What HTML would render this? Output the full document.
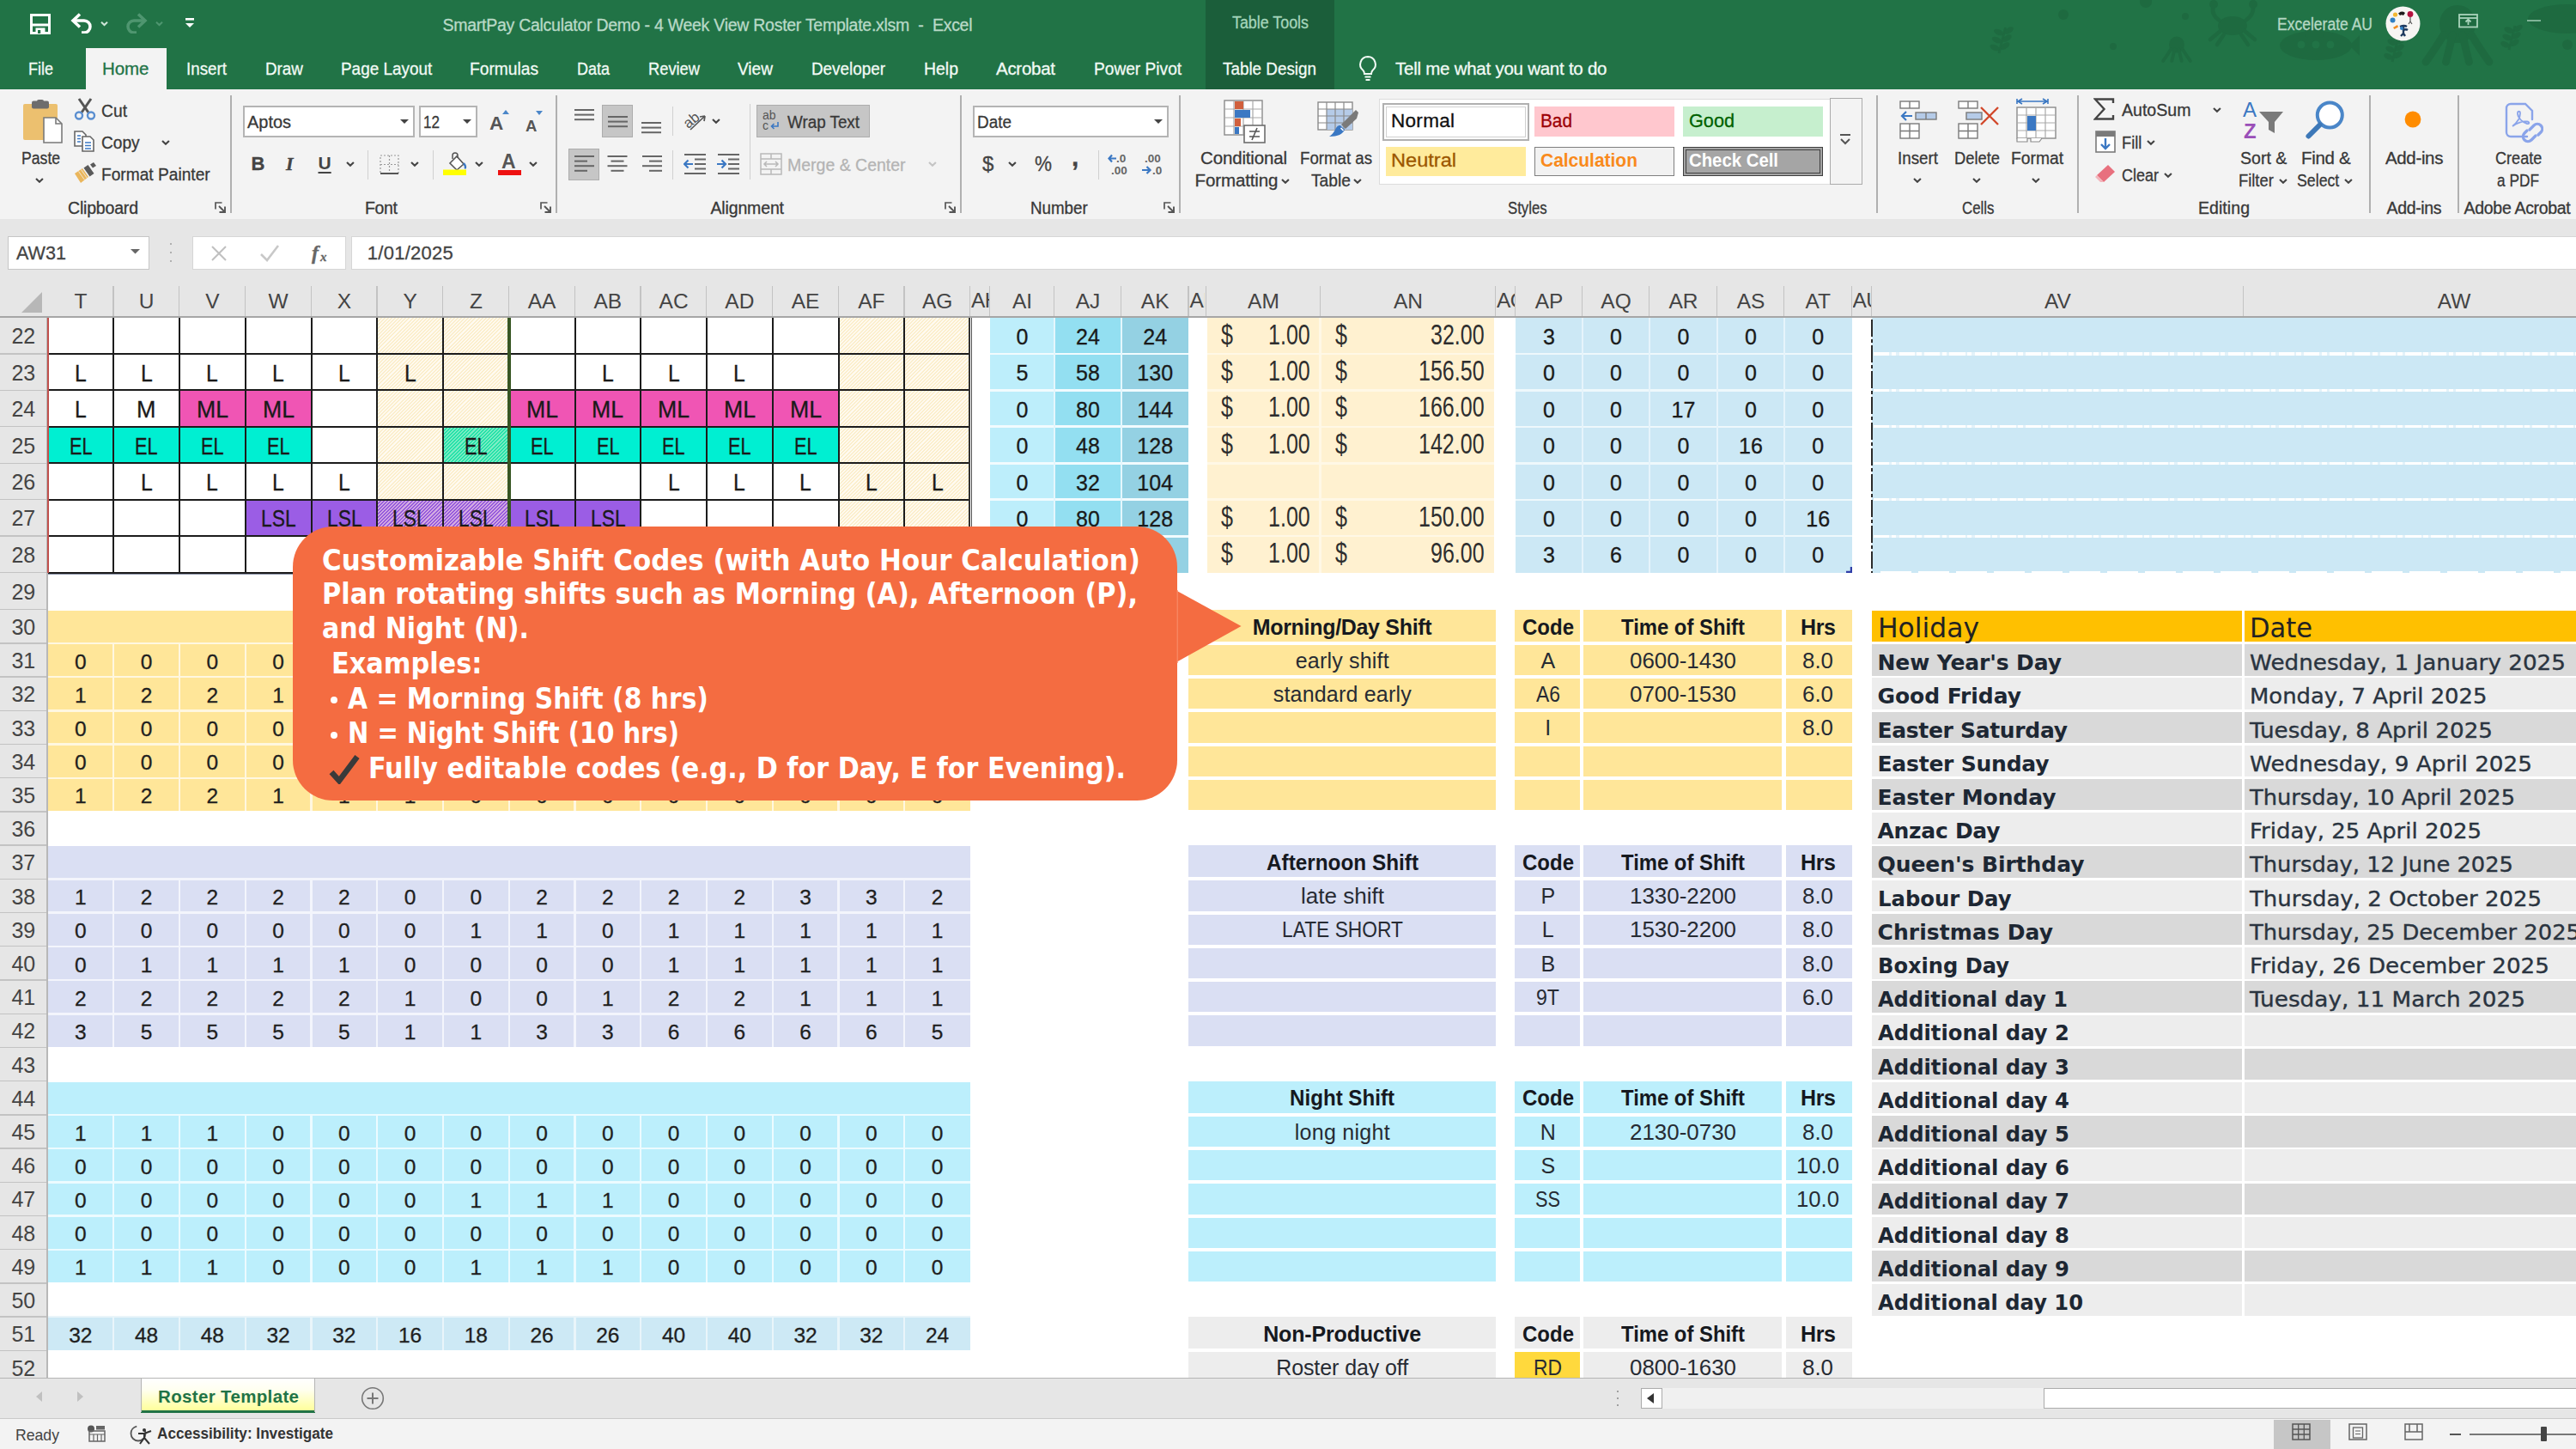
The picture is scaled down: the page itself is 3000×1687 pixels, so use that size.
<!DOCTYPE html>
<html><head><meta charset="utf-8"><title>Excel</title>
<style>
html,body{margin:0;padding:0;}
body{width:3000px;height:1687px;overflow:hidden;position:relative;background:#fff;font-family:'Liberation Sans', sans-serif;}
div,svg{position:absolute;box-sizing:border-box;}
.t{white-space:pre;}
</style></head><body>
<div style="left:0.00px;top:0.00px;width:3000.00px;height:104.00px;background:#217346;"></div>
<svg style="left:0.00px;top:0.00px;" width="3000" height="104" viewBox="0 0 3000 104"><path d="M2328 62.0L2335.5 32.0" stroke="#1e6a40" stroke-width="3"/><ellipse cx="2323.1" cy="55.5" rx="6.0" ry="3.2" fill="#1e6a40" transform="rotate(25 2323.1 55.5)"/><ellipse cx="2335.1" cy="53.5" rx="6.0" ry="3.2" fill="#1e6a40" transform="rotate(-35 2335.1 53.5)"/><ellipse cx="2325.4" cy="46.5" rx="6.0" ry="3.2" fill="#1e6a40" transform="rotate(25 2325.4 46.5)"/><ellipse cx="2337.4" cy="44.5" rx="6.0" ry="3.2" fill="#1e6a40" transform="rotate(-35 2337.4 44.5)"/><ellipse cx="2327.6" cy="37.5" rx="6.0" ry="3.2" fill="#1e6a40" transform="rotate(25 2327.6 37.5)"/><ellipse cx="2339.6" cy="35.5" rx="6.0" ry="3.2" fill="#1e6a40" transform="rotate(-35 2339.6 35.5)"/><path d="M2786 72.0L2793.0 44.0" stroke="#1e6a40" stroke-width="3"/><ellipse cx="2781.5" cy="65.8" rx="5.6" ry="3.2" fill="#1e6a40" transform="rotate(25 2781.5 65.8)"/><ellipse cx="2792.7" cy="63.8" rx="5.6" ry="3.2" fill="#1e6a40" transform="rotate(-35 2792.7 63.8)"/><ellipse cx="2783.6" cy="57.4" rx="5.6" ry="3.2" fill="#1e6a40" transform="rotate(25 2783.6 57.4)"/><ellipse cx="2794.8" cy="55.4" rx="5.6" ry="3.2" fill="#1e6a40" transform="rotate(-35 2794.8 55.4)"/><ellipse cx="2785.7" cy="49.0" rx="5.6" ry="3.2" fill="#1e6a40" transform="rotate(25 2785.7 49.0)"/><ellipse cx="2796.8" cy="47.0" rx="5.6" ry="3.2" fill="#1e6a40" transform="rotate(-35 2796.8 47.0)"/><path d="M2922 58.0L2929.0 30.0" stroke="#1e6a40" stroke-width="3"/><ellipse cx="2917.5" cy="51.8" rx="5.6" ry="3.2" fill="#1e6a40" transform="rotate(25 2917.5 51.8)"/><ellipse cx="2928.7" cy="49.8" rx="5.6" ry="3.2" fill="#1e6a40" transform="rotate(-35 2928.7 49.8)"/><ellipse cx="2919.6" cy="43.4" rx="5.6" ry="3.2" fill="#1e6a40" transform="rotate(25 2919.6 43.4)"/><ellipse cx="2930.8" cy="41.4" rx="5.6" ry="3.2" fill="#1e6a40" transform="rotate(-35 2930.8 41.4)"/><ellipse cx="2921.7" cy="35.0" rx="5.6" ry="3.2" fill="#1e6a40" transform="rotate(25 2921.7 35.0)"/><ellipse cx="2932.8" cy="33.0" rx="5.6" ry="3.2" fill="#1e6a40" transform="rotate(-35 2932.8 33.0)"/><circle cx="2403" cy="17" r="6" fill="#1e6a40"/><circle cx="2461" cy="54" r="4" fill="#1e6a40"/><circle cx="2545" cy="19" r="4" fill="#1e6a40"/><circle cx="2499" cy="2" r="7" fill="#1e6a40"/><circle cx="2990" cy="52" r="6" fill="#1e6a40"/><ellipse cx="2535" cy="52" rx="9" ry="9.5" fill="#1e6a40"/><path d="M2528.1 57.4q-5.0 8.1 -8.9 13.5" stroke="#1e6a40" stroke-width="3.8" fill="none" stroke-linecap="round"/><path d="M2532.5 57.4q-1.8 8.1 -3.2 13.5" stroke="#1e6a40" stroke-width="3.8" fill="none" stroke-linecap="round"/><path d="M2537.5 57.4q1.8 8.1 3.2 13.5" stroke="#1e6a40" stroke-width="3.8" fill="none" stroke-linecap="round"/><path d="M2541.9 57.4q5.0 8.1 8.9 13.5" stroke="#1e6a40" stroke-width="3.8" fill="none" stroke-linecap="round"/><ellipse cx="2862" cy="28" rx="21" ry="22.1" fill="#1e6a40"/><path d="M2845.8 40.6q-11.6 18.9 -20.8 31.5" stroke="#1e6a40" stroke-width="8.8" fill="none" stroke-linecap="round"/><path d="M2856.1 40.6q-4.2 18.9 -7.6 31.5" stroke="#1e6a40" stroke-width="8.8" fill="none" stroke-linecap="round"/><path d="M2867.9 40.6q4.2 18.9 7.6 31.5" stroke="#1e6a40" stroke-width="8.8" fill="none" stroke-linecap="round"/><path d="M2878.2 40.6q11.6 18.9 20.8 31.5" stroke="#1e6a40" stroke-width="8.8" fill="none" stroke-linecap="round"/><ellipse cx="2600" cy="30" rx="17" ry="11" fill="#1e6a40"/><path d="M2585 24q-12 -8 -6 -20M2615 24q12 -8 8 -20M2586 36l-12 10M2614 36l12 10M2590 40l-8 12M2610 40l8 12" stroke="#1e6a40" stroke-width="4.5" fill="none" stroke-linecap="round"/><circle cx="2578" cy="5" r="5" fill="#1e6a40"/><circle cx="2624" cy="5" r="5" fill="#1e6a40"/><ellipse cx="2697" cy="53" rx="42" ry="17" fill="#1e6a40"/><rect x="2684" y="30" width="22" height="14" rx="4" fill="#1e6a40"/><path d="M2736 53l12 -12v24z" fill="#1e6a40"/><circle cx="2680" cy="52" r="4.5" fill="#217346"/><circle cx="2697" cy="52" r="4.5" fill="#217346"/><circle cx="2714" cy="52" r="4.5" fill="#217346"/><ellipse cx="2990" cy="22" rx="46" ry="17" fill="#1e6a40"/></svg>
<div style="left:1404.00px;top:0.00px;width:150.00px;height:104.00px;background:#1b5e3a;"></div>
<div style="left:99.50px;top:56.00px;width:94.50px;height:48.00px;background:#f3f3f3;"></div>
<svg style="left:35.00px;top:16.00px;" width="24" height="24" viewBox="0 0 24 24"><rect x="1.5" y="1.5" width="21" height="21" fill="none" stroke="#fff" stroke-width="3"/><path d="M1.5 13h21" stroke="#fff" stroke-width="3"/><rect x="6.5" y="16.5" width="11" height="6" fill="#fff"/><rect x="9" y="19" width="3.2" height="4" fill="#217346"/></svg>
<svg style="left:82.00px;top:15.00px;" width="26" height="24" viewBox="0 0 26 24"><path d="M3 9h13a7 7 0 0 1 0 14h-3" fill="none" stroke="#fff" stroke-width="3.5"/><path d="M11 1.5L3 9l8 7.5" fill="none" stroke="#fff" stroke-width="3.5"/></svg>
<svg style="left:146.00px;top:15.00px;" width="26" height="24" viewBox="0 0 26 24"><path d="M23 9H10a7 7 0 0 0 0 14h3" fill="none" stroke="#4f9670" stroke-width="3.5"/><path d="M15 1.5L23 9l-8 7.5" fill="none" stroke="#4f9670" stroke-width="3.5"/></svg>
<svg style="left:115.98px;top:24.48px;" width="11.04" height="7.04" viewBox="0 0 11.04 7.04"><path d="M2 1.8L5.52 5.1L9.04 1.8" fill="none" stroke="#cfe6d9" stroke-width="2"/></svg>
<svg style="left:179.98px;top:24.48px;" width="11.04" height="7.04" viewBox="0 0 11.04 7.04"><path d="M2 1.8L5.52 5.1L9.04 1.8" fill="none" stroke="#4f9670" stroke-width="2"/></svg>
<svg style="left:215.00px;top:20.00px;" width="12" height="16" viewBox="0 0 12 16"><rect x="1" y="1" width="10" height="2.6" fill="#fff"/><path d="M1 7h10l-5 5z" fill="#fff"/></svg>
<div class="t" style="top:16.50px;line-height:24px;font-size:19.5px;color:#b9d9c7;letter-spacing:-0.265px;left:515.50px;-webkit-text-stroke:0.3px;">SmartPay Calculator Demo - 4 Week View Roster Template.xlsm  -  Excel</div>
<div class="t" style="top:14.00px;line-height:24px;font-size:19.5px;color:#a5d5ba;left:1434.50px;transform:scaleX(0.9155);transform-origin:0 50%;-webkit-text-stroke:0.3px;">Table Tools</div>
<div class="t" style="top:16.00px;line-height:24px;font-size:19.5px;color:#b5d8c4;left:2652.00px;transform:scaleX(0.8983);transform-origin:0 50%;-webkit-text-stroke:0.3px;">Excelerate AU</div>
<svg style="left:2778.20px;top:6.50px;" width="41" height="41" viewBox="0 0 41 41"><circle cx="20.5" cy="20.5" r="20" fill="#f6f5f3"/><circle cx="8.5" cy="16.5" r="3" fill="#2f7fc4"/><circle cx="11.5" cy="10" r="2.6" fill="#f2b632"/><path d="M15 8.5q4-3.5 8-0.5l-2 3q-2-1.500-4 0z" fill="#1c1c1c"/><circle cx="29" cy="9.5" r="3.4" fill="#b3123f"/><path d="M29 13v6M27 21l2-3 2 3" stroke="#555" stroke-width="1.2" fill="none"/><path d="M9 25l5-3 1 2.5-4.5 2.5z" fill="#f28c1e"/><path d="M17 24q5-2 8 0M21 24v9M21 28q3-1.500 5 0M18 35l3-3 2 3" stroke="#1f3a5f" stroke-width="2.4" fill="none"/><circle cx="19" cy="26" r="2" fill="#2f7fc4"/></svg>
<svg style="left:2863.00px;top:16.00px;" width="24" height="17" viewBox="0 0 24 17"><rect x="1" y="1" width="21" height="14.5" fill="none" stroke="#a9d3bb" stroke-width="1.8"/><path d="M1 5h21" stroke="#a9d3bb" stroke-width="1.8"/><path d="M11.5 13V7M8.5 9.5l3-3 3 3" fill="none" stroke="#a9d3bb" stroke-width="1.8"/></svg>
<div style="left:2943.00px;top:23.00px;width:16.00px;height:2.00px;background:#7fb497;"></div>
<div class="t" style="top:66.50px;line-height:26px;font-size:20.5px;color:#f2faf5;left:33.00px;transform:scaleX(0.8775);transform-origin:0 50%;-webkit-text-stroke:0.3px;">File</div>
<div class="t" style="top:66.50px;line-height:26px;font-size:20.5px;color:#217346;letter-spacing:-0.062px;left:119.00px;-webkit-text-stroke:0.3px;">Home</div>
<div class="t" style="top:66.50px;line-height:26px;font-size:20.5px;color:#f2faf5;left:217.00px;transform:scaleX(0.9165);transform-origin:0 50%;-webkit-text-stroke:0.3px;">Insert</div>
<div class="t" style="top:66.50px;line-height:26px;font-size:20.5px;color:#f2faf5;left:308.60px;transform:scaleX(0.9176);transform-origin:0 50%;-webkit-text-stroke:0.3px;">Draw</div>
<div class="t" style="top:66.50px;line-height:26px;font-size:20.5px;color:#f2faf5;left:396.70px;transform:scaleX(0.9233);transform-origin:0 50%;-webkit-text-stroke:0.3px;">Page Layout</div>
<div class="t" style="top:66.50px;line-height:26px;font-size:20.5px;color:#f2faf5;left:547.00px;transform:scaleX(0.9364);transform-origin:0 50%;-webkit-text-stroke:0.3px;">Formulas</div>
<div class="t" style="top:66.50px;line-height:26px;font-size:20.5px;color:#f2faf5;left:672.00px;transform:scaleX(0.8773);transform-origin:0 50%;-webkit-text-stroke:0.3px;">Data</div>
<div class="t" style="top:66.50px;line-height:26px;font-size:20.5px;color:#f2faf5;left:755.00px;transform:scaleX(0.8926);transform-origin:0 50%;-webkit-text-stroke:0.3px;">Review</div>
<div class="t" style="top:66.50px;line-height:26px;font-size:20.5px;color:#f2faf5;left:859.00px;transform:scaleX(0.9302);transform-origin:0 50%;-webkit-text-stroke:0.3px;">View</div>
<div class="t" style="top:66.50px;line-height:26px;font-size:20.5px;color:#f2faf5;left:945.00px;transform:scaleX(0.9202);transform-origin:0 50%;-webkit-text-stroke:0.3px;">Developer</div>
<div class="t" style="top:66.50px;line-height:26px;font-size:20.5px;color:#f2faf5;left:1075.70px;transform:scaleX(0.9485);transform-origin:0 50%;-webkit-text-stroke:0.3px;">Help</div>
<div class="t" style="top:66.50px;line-height:26px;font-size:20.5px;color:#f2faf5;letter-spacing:-0.276px;left:1160.00px;-webkit-text-stroke:0.3px;">Acrobat</div>
<div class="t" style="top:66.50px;line-height:26px;font-size:20.5px;color:#f2faf5;left:1273.70px;transform:scaleX(0.9334);transform-origin:0 50%;-webkit-text-stroke:0.3px;">Power Pivot</div>
<div class="t" style="top:66.50px;line-height:26px;font-size:20.5px;color:#f2faf5;left:1424.00px;transform:scaleX(0.9197);transform-origin:0 50%;-webkit-text-stroke:0.3px;">Table Design</div>
<svg style="left:1580.00px;top:63.00px;" width="26" height="34" viewBox="0 0 26 34"><path d="M13 3a9 9 0 0 0-5.5 16c1 1 1.5 2 1.5 4h8c0-2 .5-3 1.5-4A9 9 0 0 0 13 3z" fill="none" stroke="#f2faf5" stroke-width="2"/><path d="M9.5 26.5h7M10.5 30h5" stroke="#f2faf5" stroke-width="2"/></svg>
<div class="t" style="top:66.50px;line-height:26px;font-size:20.5px;color:#f2faf5;letter-spacing:-0.249px;left:1625.00px;-webkit-text-stroke:0.3px;">Tell me what you want to do</div>
<div style="left:0.00px;top:104.00px;width:3000.00px;height:150.50px;background:#f3f3f3;"></div>
<div style="left:0.00px;top:254.50px;width:3000.00px;height:115.50px;background:#e6e6e6;"></div>
<div style="left:267.60px;top:111.00px;width:2.40px;height:137.00px;background:#b0b0b0;"></div>
<div style="left:646.60px;top:111.00px;width:2.40px;height:137.00px;background:#b0b0b0;"></div>
<div style="left:1117.70px;top:111.00px;width:2.40px;height:137.00px;background:#b0b0b0;"></div>
<div style="left:1372.60px;top:111.00px;width:2.40px;height:137.00px;background:#b0b0b0;"></div>
<div style="left:2184.80px;top:111.00px;width:2.40px;height:137.00px;background:#b0b0b0;"></div>
<div style="left:2418.80px;top:111.00px;width:2.40px;height:137.00px;background:#b0b0b0;"></div>
<div style="left:2758.80px;top:111.00px;width:2.40px;height:137.00px;background:#b0b0b0;"></div>
<div style="left:2861.80px;top:111.00px;width:2.40px;height:137.00px;background:#b0b0b0;"></div>
<svg style="left:249.50px;top:235.00px;" width="13" height="13" viewBox="0 0 13 13"><path d="M1 8.5V1h7.5" fill="none" stroke="#555" stroke-width="1.7"/><path d="M5 5l6.5 6.5M12 5.5v6.5H5.5" fill="none" stroke="#555" stroke-width="1.9"/></svg>
<svg style="left:629.00px;top:235.00px;" width="13" height="13" viewBox="0 0 13 13"><path d="M1 8.5V1h7.5" fill="none" stroke="#555" stroke-width="1.7"/><path d="M5 5l6.5 6.5M12 5.5v6.5H5.5" fill="none" stroke="#555" stroke-width="1.9"/></svg>
<svg style="left:1100.00px;top:235.00px;" width="13" height="13" viewBox="0 0 13 13"><path d="M1 8.5V1h7.5" fill="none" stroke="#555" stroke-width="1.7"/><path d="M5 5l6.5 6.5M12 5.5v6.5H5.5" fill="none" stroke="#555" stroke-width="1.9"/></svg>
<svg style="left:1354.50px;top:235.00px;" width="13" height="13" viewBox="0 0 13 13"><path d="M1 8.5V1h7.5" fill="none" stroke="#555" stroke-width="1.7"/><path d="M5 5l6.5 6.5M12 5.5v6.5H5.5" fill="none" stroke="#555" stroke-width="1.9"/></svg>
<div class="t" style="top:230.00px;line-height:24px;font-size:19.5px;color:#383838;letter-spacing:-0.184px;left:79.00px;-webkit-text-stroke:0.3px;">Clipboard</div>
<div class="t" style="top:230.00px;line-height:24px;font-size:19.5px;color:#383838;letter-spacing:-0.344px;left:425.00px;-webkit-text-stroke:0.3px;">Font</div>
<div class="t" style="top:230.00px;line-height:24px;font-size:19.5px;color:#383838;letter-spacing:-0.152px;left:827.50px;-webkit-text-stroke:0.3px;">Alignment</div>
<div class="t" style="top:230.00px;line-height:24px;font-size:19.5px;color:#383838;left:1200.00px;transform:scaleX(0.9617);transform-origin:0 50%;-webkit-text-stroke:0.3px;">Number</div>
<div class="t" style="top:230.00px;line-height:24px;font-size:19.5px;color:#383838;left:1756.00px;transform:scaleX(0.8586);transform-origin:0 50%;-webkit-text-stroke:0.3px;">Styles</div>
<div class="t" style="top:230.00px;line-height:24px;font-size:19.5px;color:#383838;left:2284.50px;transform:scaleX(0.8652);transform-origin:0 50%;-webkit-text-stroke:0.3px;">Cells</div>
<div class="t" style="top:230.00px;line-height:24px;font-size:19.5px;color:#383838;letter-spacing:0.062px;left:2560.00px;-webkit-text-stroke:0.3px;">Editing</div>
<div class="t" style="top:230.00px;line-height:24px;font-size:19.5px;color:#383838;letter-spacing:-0.338px;left:2779.50px;-webkit-text-stroke:0.3px;">Add-ins</div>
<div class="t" style="top:230.00px;line-height:24px;font-size:19.5px;color:#383838;letter-spacing:-0.311px;left:2869.60px;-webkit-text-stroke:0.3px;">Adobe Acrobat</div>
<svg style="left:26.00px;top:116.00px;" width="48" height="52" viewBox="0 0 48 52"><rect x="1" y="5" width="40" height="42" rx="2" fill="#ecc06f"/><rect x="11" y="1.5" width="20" height="9" rx="2" fill="#6d6d6d"/><rect x="17" y="0" width="8" height="5" rx="2" fill="#6d6d6d"/><path d="M25 21h14l7 7v22H25z" fill="#fff" stroke="#7a7a7a" stroke-width="1.6"/><path d="M39 21v7h7" fill="none" stroke="#7a7a7a" stroke-width="1.6"/></svg>
<div class="t" style="top:171.00px;line-height:26px;font-size:20.5px;color:#383838;left:24.80px;transform:scaleX(0.8622);transform-origin:0 50%;-webkit-text-stroke:0.3px;">Paste</div>
<svg style="left:40.04px;top:205.54px;" width="11.92" height="7.92" viewBox="0 0 11.92 7.92"><path d="M2 2.0L5.96 5.7L9.92 2.0" fill="none" stroke="#444" stroke-width="2.2"/></svg>
<svg style="left:86.00px;top:114.00px;" width="26" height="26" viewBox="0 0 26 26"><path d="M6 1l11 16M20 1L9 17" stroke="#555" stroke-width="3" fill="none"/><circle cx="6" cy="20.5" r="4" fill="none" stroke="#5b8fd0" stroke-width="2.4"/><circle cx="20" cy="20.5" r="4" fill="none" stroke="#5b8fd0" stroke-width="2.4"/></svg>
<div class="t" style="top:115.50px;line-height:26px;font-size:20.5px;color:#383838;left:118.00px;transform:scaleX(0.9403);transform-origin:0 50%;-webkit-text-stroke:0.3px;">Cut</div>
<svg style="left:85.00px;top:152.00px;" width="27" height="26" viewBox="0 0 27 26"><path d="M2 1h9l4 4v13H2z" fill="#fff" stroke="#666" stroke-width="1.6"/><path d="M11 7h9l4 4v13H11z" fill="#fff" stroke="#666" stroke-width="1.6"/><path d="M14 14h7M14 17.5h7M14 21h7" stroke="#3b78c3" stroke-width="1.4"/><path d="M5 6h4M5 9.5h4M5 13h4" stroke="#3b78c3" stroke-width="1.4"/></svg>
<div class="t" style="top:152.50px;line-height:26px;font-size:20.5px;color:#383838;left:118.00px;transform:scaleX(0.9340);transform-origin:0 50%;-webkit-text-stroke:0.3px;">Copy</div>
<svg style="left:187.04px;top:161.54px;" width="11.92" height="7.92" viewBox="0 0 11.92 7.92"><path d="M2 2.0L5.96 5.7L9.92 2.0" fill="none" stroke="#444" stroke-width="2.2"/></svg>
<svg style="left:86.00px;top:189.00px;" width="28" height="26" viewBox="0 0 28 26"><path d="M1 13l9-6 7 10-9 7z" fill="#eab65c"/><path d="M11.5 6.5l5-3.5 7 10-5 3.5z" fill="#5a5a5a"/><path d="M19 2.5l4-2.5 3 4-4 2.5z" fill="#5a5a5a"/><path d="M5.5 10.5l7 10M8.5 8.5l7 10" stroke="#f3f3f3" stroke-width="0.8"/></svg>
<div class="t" style="top:190.00px;line-height:26px;font-size:20.5px;color:#383838;left:118.00px;transform:scaleX(0.9345);transform-origin:0 50%;-webkit-text-stroke:0.3px;">Format Painter</div>
<div style="left:282.70px;top:123.00px;width:200.30px;height:36.60px;background:#fff;border:2px solid #b4b4b4;"></div>
<div class="t" style="top:129.00px;line-height:26px;font-size:20.5px;color:#383838;left:288.00px;transform:scaleX(0.9729);transform-origin:0 50%;-webkit-text-stroke:0.3px;">Aptos</div>
<svg style="left:465.80px;top:138.50px;" width="10" height="6" viewBox="0 0 10 6"><path d="M0 0h10l-5 5z" fill="#444"/></svg>
<div style="left:487.70px;top:123.00px;width:68.80px;height:36.60px;background:#fff;border:2px solid #b4b4b4;"></div>
<div class="t" style="top:129.00px;line-height:26px;font-size:20.5px;color:#383838;left:493.00px;transform:scaleX(0.8329);transform-origin:0 50%;-webkit-text-stroke:0.3px;">12</div>
<svg style="left:539.00px;top:138.50px;" width="10" height="6" viewBox="0 0 10 6"><path d="M0 0h10l-5 5z" fill="#444"/></svg>
<div class="t" style="top:130.00px;line-height:28px;font-size:22.5px;color:#555;font-weight:700;left:570.00px;">A</div>
<svg style="left:585.00px;top:127.50px;" width="8" height="5" viewBox="0 0 8 5"><path d="M0 5l4-5 4 5z" fill="#4a86c8"/></svg>
<div class="t" style="top:134.50px;line-height:23px;font-size:18.5px;color:#555;font-weight:700;left:612.00px;">A</div>
<svg style="left:624.00px;top:128.50px;" width="8" height="5" viewBox="0 0 8 5"><path d="M0 0l4 5 4-5z" fill="#4a86c8"/></svg>
<div class="t" style="top:177.00px;line-height:28px;font-size:22px;color:#444;font-weight:700;left:292.50px;-webkit-text-stroke:0.3px;">B</div>
<div class="t" style="top:177.00px;line-height:28px;font-size:22px;color:#444;font-weight:700;font-style:italic;font-family:'Liberation Serif', serif;left:333.00px;-webkit-text-stroke:0.3px;">I</div>
<div class="t" style="top:177.00px;line-height:26px;font-size:21px;color:#444;font-weight:700;left:370.50px;text-decoration:underline;text-decoration-thickness:2px;text-underline-offset:3px;">U</div>
<svg style="left:401.54px;top:187.04px;" width="11.92" height="7.92" viewBox="0 0 11.92 7.92"><path d="M2 2.0L5.96 5.7L9.92 2.0" fill="none" stroke="#444" stroke-width="2.2"/></svg>
<div style="left:428.00px;top:174.50px;width:1.20px;height:34.00px;background:#d0d0d0;"></div>
<svg style="left:442.00px;top:180.00px;" width="23" height="23" viewBox="0 0 23 23"><rect x="1" y="1" width="21" height="21" fill="none" stroke="#999" stroke-width="1.2" stroke-dasharray="2 2"/><path d="M11.5 1v21M1 11.5h21" stroke="#999" stroke-width="1.2" stroke-dasharray="2 2"/><path d="M1 22h21" stroke="#555" stroke-width="2"/></svg>
<svg style="left:476.54px;top:187.04px;" width="11.92" height="7.92" viewBox="0 0 11.92 7.92"><path d="M2 2.0L5.96 5.7L9.92 2.0" fill="none" stroke="#444" stroke-width="2.2"/></svg>
<div style="left:503.50px;top:174.50px;width:1.20px;height:34.00px;background:#d0d0d0;"></div>
<svg style="left:516.00px;top:177.00px;" width="28" height="28" viewBox="0 0 28 28"><path d="M8 13l8-8 8 9-8 7z" fill="#fff" stroke="#555" stroke-width="1.6"/><path d="M11 8V4a3 3 0 0 1 6 0v3" fill="none" stroke="#555" stroke-width="1.5"/><path d="M24 13c2 3 3 5 1 6" stroke="#3b78c3" stroke-width="2.4" fill="none"/><rect x="0" y="20.5" width="27" height="6.5" fill="#ffff00"/></svg>
<svg style="left:551.84px;top:187.04px;" width="11.92" height="7.92" viewBox="0 0 11.92 7.92"><path d="M2 2.0L5.96 5.7L9.92 2.0" fill="none" stroke="#444" stroke-width="2.2"/></svg>
<div class="t" style="top:173.50px;line-height:29px;font-size:23px;color:#555;font-weight:700;left:584.00px;">A</div>
<div style="left:580.00px;top:197.50px;width:26.50px;height:6.50px;background:#ee1111;"></div>
<svg style="left:615.04px;top:187.04px;" width="11.92" height="7.92" viewBox="0 0 11.92 7.92"><path d="M2 2.0L5.96 5.7L9.92 2.0" fill="none" stroke="#444" stroke-width="2.2"/></svg>
<svg style="left:668.50px;top:127.00px;" width="24" height="18" viewBox="0 0 24 18"><rect x="0" y="0.0" width="23" height="2" fill="#666"/><rect x="0" y="5.6" width="23" height="2" fill="#666"/><rect x="0" y="11.2" width="23" height="2" fill="#666"/></svg>
<div style="left:701.00px;top:122.00px;width:36.00px;height:37.60px;background:#c6c6c6;border:1.5px solid #adadad;"></div>
<svg style="left:707.50px;top:134.50px;" width="24" height="18" viewBox="0 0 24 18"><rect x="0" y="0.0" width="23" height="2" fill="#666"/><rect x="0" y="5.6" width="23" height="2" fill="#666"/><rect x="0" y="11.2" width="23" height="2" fill="#666"/></svg>
<svg style="left:746.70px;top:142.00px;" width="24" height="18" viewBox="0 0 24 18"><rect x="0" y="0.0" width="23" height="2" fill="#666"/><rect x="0" y="5.6" width="23" height="2" fill="#666"/><rect x="0" y="11.2" width="23" height="2" fill="#666"/></svg>
<div style="left:783.00px;top:124.00px;width:1.20px;height:34.00px;background:#d0d0d0;"></div>
<svg style="left:796.00px;top:126.00px;" width="28" height="28" viewBox="0 0 28 28"><text x="0" y="19" font-size="17" fill="#555" transform="rotate(-40 10 14)" font-family="Liberation Sans, sans-serif">ab</text><path d="M8 25L25 9M25 9l-6 1M25 9l-1 6" stroke="#555" stroke-width="1.7" fill="none"/></svg>
<svg style="left:828.04px;top:137.04px;" width="11.92" height="7.92" viewBox="0 0 11.92 7.92"><path d="M2 2.0L5.96 5.7L9.92 2.0" fill="none" stroke="#444" stroke-width="2.2"/></svg>
<div style="left:873.00px;top:121.00px;width:1.20px;height:88.00px;background:#d0d0d0;"></div>
<div style="left:881.00px;top:122.00px;width:132.30px;height:37.60px;background:#c6c6c6;border:1.5px solid #adadad;"></div>
<svg style="left:888.00px;top:128.00px;" width="22" height="26" viewBox="0 0 22 26"><text x="0" y="11" font-size="14" fill="#555" font-family="Liberation Sans, sans-serif">ab</text><text x="0" y="23" font-size="14" fill="#555" font-family="Liberation Sans, sans-serif">c</text><path d="M18 14v5h-7M13.5 16l-3 3 3 3" fill="none" stroke="#3b78c3" stroke-width="1.6"/></svg>
<div class="t" style="top:128.50px;line-height:26px;font-size:20.5px;color:#383838;left:917.40px;transform:scaleX(0.9177);transform-origin:0 50%;-webkit-text-stroke:0.3px;">Wrap Text</div>
<div style="left:662.00px;top:173.00px;width:35.50px;height:36.80px;background:#c6c6c6;border:1.5px solid #adadad;"></div>
<svg style="left:668.50px;top:180.50px;" width="24" height="24" viewBox="0 0 24 24"><rect x="0" y="0.0" width="23" height="2" fill="#666"/><rect x="0" y="5.6" width="15" height="2" fill="#666"/><rect x="0" y="11.2" width="23" height="2" fill="#666"/><rect x="0" y="16.8" width="15" height="2" fill="#666"/></svg>
<svg style="left:707.00px;top:180.50px;" width="24" height="24" viewBox="0 0 24 24"><rect x="0.5" y="0.0" width="23" height="2" fill="#666"/><rect x="4.5" y="5.6" width="15" height="2" fill="#666"/><rect x="0.5" y="11.2" width="23" height="2" fill="#666"/><rect x="4.5" y="16.8" width="15" height="2" fill="#666"/></svg>
<svg style="left:746.70px;top:180.50px;" width="24" height="24" viewBox="0 0 24 24"><rect x="1" y="0.0" width="23" height="2" fill="#666"/><rect x="9" y="5.6" width="15" height="2" fill="#666"/><rect x="1" y="11.2" width="23" height="2" fill="#666"/><rect x="9" y="16.8" width="15" height="2" fill="#666"/></svg>
<div style="left:783.00px;top:174.50px;width:1.20px;height:34.00px;background:#d0d0d0;"></div>
<svg style="left:795.50px;top:179.00px;" width="27" height="24" viewBox="0 0 27 24"><path d="M1 1h25M13 6.5h13M13 12h13M13 17.5h13M1 23h25" stroke="#666" stroke-width="2"/><path d="M11 12H1M5.5 7.5L1 12l4.5 4.5" stroke="#3b78c3" stroke-width="2.2" fill="none"/></svg>
<svg style="left:835.00px;top:179.00px;" width="27" height="24" viewBox="0 0 27 24"><path d="M1 1h25M13 6.5h13M13 12h13M13 17.5h13M1 23h25" stroke="#666" stroke-width="2"/><path d="M0 12h10M5.5 7.5L10 12l-4.5 4.5" stroke="#3b78c3" stroke-width="2.2" fill="none"/></svg>
<svg style="left:885.00px;top:178.00px;" width="26" height="26" viewBox="0 0 26 26"><rect x="1" y="1" width="24" height="24" fill="none" stroke="#b9b9b9" stroke-width="1.5"/><path d="M1 7h24M1 19h24M13 1v6M13 19v6" stroke="#b9b9b9" stroke-width="1.5"/><path d="M5 13h16M8 10l-3 3 3 3M18 10l3 3-3 3" stroke="#b9b9b9" stroke-width="1.5" fill="none"/></svg>
<div class="t" style="top:179.00px;line-height:26px;font-size:20.5px;color:#b4b4b4;left:917.40px;transform:scaleX(0.9509);transform-origin:0 50%;-webkit-text-stroke:0.3px;">Merge &amp; Center</div>
<svg style="left:1079.84px;top:187.04px;" width="11.92" height="7.92" viewBox="0 0 11.92 7.92"><path d="M2 2.0L5.96 5.7L9.92 2.0" fill="none" stroke="#c4c4c4" stroke-width="2.2"/></svg>
<div style="left:1132.80px;top:123.00px;width:228.20px;height:36.60px;background:#fff;border:2px solid #b4b4b4;"></div>
<div class="t" style="top:129.00px;line-height:26px;font-size:20.5px;color:#383838;left:1138.00px;transform:scaleX(0.9235);transform-origin:0 50%;-webkit-text-stroke:0.3px;">Date</div>
<svg style="left:1344.00px;top:138.50px;" width="10" height="6" viewBox="0 0 10 6"><path d="M0 0h10l-5 5z" fill="#444"/></svg>
<div class="t" style="top:176.00px;line-height:30px;font-size:24px;color:#444;left:1144.00px;-webkit-text-stroke:0.3px;">$</div>
<svg style="left:1173.04px;top:187.04px;" width="11.92" height="7.92" viewBox="0 0 11.92 7.92"><path d="M2 2.0L5.96 5.7L9.92 2.0" fill="none" stroke="#444" stroke-width="2.2"/></svg>
<div class="t" style="top:176.00px;line-height:30px;font-size:24px;color:#444;left:1205.00px;transform:scaleX(0.9370);transform-origin:0 50%;-webkit-text-stroke:0.3px;">%</div>
<div class="t" style="top:164.00px;line-height:38px;font-size:30px;color:#444;font-weight:700;left:1248.00px;-webkit-text-stroke:0.3px;">,</div>
<div style="left:1278.50px;top:174.50px;width:1.20px;height:34.00px;background:#d0d0d0;"></div>
<svg style="left:1290.00px;top:178.00px;" width="26" height="26" viewBox="0 0 26 26"><text x="10" y="11" font-size="13.5" font-weight="700" fill="#666" font-family="Liberation Sans, sans-serif">.0</text><text x="4" y="24.5" font-size="13.5" font-weight="700" fill="#666" font-family="Liberation Sans, sans-serif">.00</text><path d="M10 6.5H1.5M5 2.5L1.5 6.5l3.5 4" stroke="#3b78c3" stroke-width="2.2" fill="none"/></svg>
<svg style="left:1329.00px;top:178.00px;" width="26" height="26" viewBox="0 0 26 26"><text x="4" y="11" font-size="13.5" font-weight="700" fill="#666" font-family="Liberation Sans, sans-serif">.00</text><text x="13" y="24.5" font-size="13.5" font-weight="700" fill="#666" font-family="Liberation Sans, sans-serif">.0</text><path d="M1 20h9.5M6.5 16l4 4-4 4" stroke="#3b78c3" stroke-width="2.2" fill="none"/></svg>
<svg style="left:1425.00px;top:116.00px;" width="50" height="52" viewBox="0 0 50 52"><rect x="1" y="1" width="44" height="40" fill="#fff" stroke="#8a8a8a" stroke-width="1.4"/><path d="M1 11h44M1 21h44M1 31h44M12 1v40M23 1v40M34 1v40" stroke="#a9a9a9" stroke-width="1.2"/><rect x="13" y="2" width="10" height="9" fill="#d1603d"/><rect x="13" y="12" width="18" height="9" fill="#3b78c3"/><rect x="13" y="22" width="7" height="9" fill="#d1603d"/><rect x="13" y="32" width="5" height="8" fill="#3b78c3"/><rect x="24" y="30" width="24" height="20" fill="#fff" stroke="#6d6d6d" stroke-width="1.6"/><path d="M30 37h12M30 43h12M39 33l-6 14" stroke="#555" stroke-width="1.6"/></svg>
<div class="t" style="top:171.40px;line-height:26px;font-size:20.5px;color:#383838;letter-spacing:-0.158px;left:1398.00px;-webkit-text-stroke:0.3px;">Conditional</div>
<div class="t" style="top:197.00px;line-height:26px;font-size:20.5px;color:#383838;letter-spacing:-0.109px;left:1391.50px;-webkit-text-stroke:0.3px;">Formatting</div>
<svg style="left:1491.04px;top:206.54px;" width="11.92" height="7.92" viewBox="0 0 11.92 7.92"><path d="M2 2.0L5.96 5.7L9.92 2.0" fill="none" stroke="#444" stroke-width="2.2"/></svg>
<svg style="left:1534.00px;top:118.00px;" width="50" height="50" viewBox="0 0 50 50"><rect x="1" y="1" width="40" height="32" fill="#fff" stroke="#8a8a8a" stroke-width="1.4"/><rect x="11" y="9" width="30" height="24" fill="#b5cbe8"/><path d="M1 9h40M1 17h40M1 25h40M11 1v32M21 1v32M31 1v32" stroke="#8a8a8a" stroke-width="1.2"/><path d="M48 13l-3-3-17 17 5 5 13-12z" fill="#7a7a7a"/><path d="M27 28l5 5c-2 5-8 8-18 8 5-3 6-7 8-10s3-3 5-3z" fill="#3b78c3"/><path d="M27.5 31l3 3" stroke="#fff" stroke-width="1.6"/></svg>
<div class="t" style="top:171.40px;line-height:26px;font-size:20.5px;color:#383838;left:1514.00px;transform:scaleX(0.9103);transform-origin:0 50%;-webkit-text-stroke:0.3px;">Format as</div>
<div class="t" style="top:197.00px;line-height:26px;font-size:20.5px;color:#383838;left:1527.00px;transform:scaleX(0.9385);transform-origin:0 50%;-webkit-text-stroke:0.3px;">Table</div>
<svg style="left:1575.04px;top:206.54px;" width="11.92" height="7.92" viewBox="0 0 11.92 7.92"><path d="M2 2.0L5.96 5.7L9.92 2.0" fill="none" stroke="#444" stroke-width="2.2"/></svg>
<div style="left:1605.60px;top:114.50px;width:526.00px;height:100.20px;background:#fff;border:1px solid #dcdcdc;"></div>
<div style="left:1609.50px;top:119.60px;width:171.50px;height:44.20px;background:#fff;border:2px solid #b0b0b0;outline:1.5px solid #d0d0d0;outline-offset:-5px;"></div>
<div class="t" style="top:127.00px;line-height:28px;font-size:22.5px;color:#111;letter-spacing:0.297px;left:1620.00px;-webkit-text-stroke:0.3px;">Normal</div>
<div style="left:1787.00px;top:124.00px;width:163.00px;height:35.00px;background:#ffc7ce;"></div>
<div class="t" style="top:127.00px;line-height:28px;font-size:22.5px;color:#9c0006;left:1794.00px;transform:scaleX(0.9239);transform-origin:0 50%;-webkit-text-stroke:0.3px;">Bad</div>
<div style="left:1960.00px;top:124.00px;width:163.00px;height:35.00px;background:#c6efce;"></div>
<div class="t" style="top:127.00px;line-height:28px;font-size:22.5px;color:#006100;left:1967.00px;transform:scaleX(0.9628);transform-origin:0 50%;-webkit-text-stroke:0.3px;">Good</div>
<div style="left:1613.50px;top:170.80px;width:163.50px;height:33.80px;background:#ffeb9c;"></div>
<div class="t" style="top:173.00px;line-height:28px;font-size:22.5px;color:#9c5700;left:1620.00px;transform:scaleX(1.0476);transform-origin:0 50%;-webkit-text-stroke:0.3px;">Neutral</div>
<div style="left:1787.00px;top:170.50px;width:163.00px;height:34.50px;background:#f2f2f2;border:1.5px solid #7f7f7f;"></div>
<div class="t" style="top:173.00px;line-height:28px;font-size:22.5px;color:#f98a1c;font-weight:700;left:1794.00px;transform:scaleX(0.9317);transform-origin:0 50%;">Calculation</div>
<div style="left:1960.00px;top:170.50px;width:163.00px;height:34.50px;background:#a5a5a5;border:4px double #3f3f3f;"></div>
<div class="t" style="top:173.00px;line-height:28px;font-size:22.5px;color:#fff;font-weight:700;left:1967.00px;transform:scaleX(0.9039);transform-origin:0 50%;">Check Cell</div>
<div style="left:2130.80px;top:113.70px;width:38.20px;height:101.00px;background:#f3f3f3;border:1.5px solid #ababab;"></div>
<svg style="left:2142.00px;top:156.00px;" width="14" height="14" viewBox="0 0 14 14"><path d="M1 1h12" stroke="#555" stroke-width="2"/><path d="M2 6l5 5 5-5" stroke="#555" stroke-width="2" fill="none"/></svg>
<svg style="left:2212.00px;top:116.00px;" width="44" height="48" viewBox="0 0 44 48"><rect x="1" y="2" width="22" height="8" fill="#fff" stroke="#7a7a7a" stroke-width="1.4"/><path d="M12 2v8" stroke="#7a7a7a" stroke-width="1.4"/><rect x="1" y="28" width="22" height="17" fill="#fff" stroke="#7a7a7a" stroke-width="1.4"/><path d="M12 28v17M1 36.5h22" stroke="#7a7a7a" stroke-width="1.4"/><rect x="19" y="15" width="24" height="8" fill="#b5cbe8" stroke="#7a7a7a" stroke-width="1.4"/><path d="M31 15v8" stroke="#7a7a7a" stroke-width="1.4"/><path d="M15 19H3M8 14l-5 5 5 5" stroke="#3b78c3" stroke-width="2.2" fill="none"/></svg>
<div class="t" style="top:171.40px;line-height:26px;font-size:20.5px;color:#383838;left:2210.00px;transform:scaleX(0.9165);transform-origin:0 50%;-webkit-text-stroke:0.3px;">Insert</div>
<svg style="left:2227.04px;top:205.54px;" width="11.92" height="7.92" viewBox="0 0 11.92 7.92"><path d="M2 2.0L5.96 5.7L9.92 2.0" fill="none" stroke="#444" stroke-width="2.2"/></svg>
<svg style="left:2280.00px;top:116.00px;" width="50" height="48" viewBox="0 0 50 48"><rect x="1" y="2" width="22" height="8" fill="#fff" stroke="#7a7a7a" stroke-width="1.4"/><path d="M12 2v8" stroke="#7a7a7a" stroke-width="1.4"/><rect x="1" y="28" width="22" height="17" fill="#fff" stroke="#7a7a7a" stroke-width="1.4"/><path d="M12 28v17M1 36.5h22" stroke="#7a7a7a" stroke-width="1.4"/><rect x="10" y="15" width="18" height="8" fill="#b5cbe8" stroke="#7a7a7a" stroke-width="1.4"/><path d="M27 9l20 20M47 9L27 29" stroke="#d1482a" stroke-width="2.4"/></svg>
<div class="t" style="top:171.40px;line-height:26px;font-size:20.5px;color:#383838;left:2276.00px;transform:scaleX(0.8943);transform-origin:0 50%;-webkit-text-stroke:0.3px;">Delete</div>
<svg style="left:2296.04px;top:205.54px;" width="11.92" height="7.92" viewBox="0 0 11.92 7.92"><path d="M2 2.0L5.96 5.7L9.92 2.0" fill="none" stroke="#444" stroke-width="2.2"/></svg>
<svg style="left:2347.00px;top:114.00px;" width="50" height="52" viewBox="0 0 50 52"><path d="M2 4h36M2 1v6M38 1v6M8 1l-5 3 5 3M32 1l5 3-5 3" stroke="#3b78c3" stroke-width="1.6" fill="none"/><rect x="2" y="11" width="45" height="36" fill="#fff" stroke="#8a8a8a" stroke-width="1.4"/><path d="M2 20h45M2 29h45M2 38h45M13 11v36M24 11v36M35 11v36" stroke="#a9a9a9" stroke-width="1.2"/><rect x="14" y="21" width="10" height="17" fill="#3b78c3"/><path d="M2 47v4h12v-4M18 47v4h10l3-4" stroke="#8a8a8a" stroke-width="1.2" fill="#fff"/></svg>
<div class="t" style="top:171.40px;line-height:26px;font-size:20.5px;color:#383838;left:2341.50px;transform:scaleX(0.9394);transform-origin:0 50%;-webkit-text-stroke:0.3px;">Format</div>
<svg style="left:2364.74px;top:205.54px;" width="11.92" height="7.92" viewBox="0 0 11.92 7.92"><path d="M2 2.0L5.96 5.7L9.92 2.0" fill="none" stroke="#444" stroke-width="2.2"/></svg>
<svg style="left:2438.00px;top:114.00px;" width="26" height="26" viewBox="0 0 26 26"><path d="M23 6V1.5H2L12.5 13 2 24.5h21V20" fill="none" stroke="#444" stroke-width="2.4"/></svg>
<div class="t" style="top:115.00px;line-height:26px;font-size:20.5px;color:#383838;left:2470.50px;transform:scaleX(0.9546);transform-origin:0 50%;-webkit-text-stroke:0.3px;">AutoSum</div>
<svg style="left:2575.54px;top:124.04px;" width="11.92" height="7.92" viewBox="0 0 11.92 7.92"><path d="M2 2.0L5.96 5.7L9.92 2.0" fill="none" stroke="#444" stroke-width="2.2"/></svg>
<svg style="left:2440.00px;top:152.00px;" width="24" height="26" viewBox="0 0 24 26"><rect x="1" y="1" width="22" height="24" fill="#fff" stroke="#7a7a7a" stroke-width="1.6"/><rect x="1" y="1" width="22" height="6" fill="#7a7a7a"/><path d="M12 9v12M7 16l5 5 5-5" stroke="#3b78c3" stroke-width="2.4" fill="none"/></svg>
<div class="t" style="top:152.80px;line-height:26px;font-size:20.5px;color:#383838;left:2471.00px;transform:scaleX(0.8897);transform-origin:0 50%;-webkit-text-stroke:0.3px;">Fill</div>
<svg style="left:2498.84px;top:162.04px;" width="11.92" height="7.92" viewBox="0 0 11.92 7.92"><path d="M2 2.0L5.96 5.7L9.92 2.0" fill="none" stroke="#444" stroke-width="2.2"/></svg>
<svg style="left:2440.00px;top:191.00px;" width="24" height="22" viewBox="0 0 24 22"><path d="M2 13L15 1l8 8-13 12z" fill="#e8707e"/><path d="M2 13l8 8-4 0-6-6z" fill="#f3b5bc"/></svg>
<div class="t" style="top:190.60px;line-height:26px;font-size:20.5px;color:#383838;left:2471.00px;transform:scaleX(0.8776);transform-origin:0 50%;-webkit-text-stroke:0.3px;">Clear</div>
<svg style="left:2519.04px;top:200.34px;" width="11.92" height="7.92" viewBox="0 0 11.92 7.92"><path d="M2 2.0L5.96 5.7L9.92 2.0" fill="none" stroke="#444" stroke-width="2.2"/></svg>
<svg style="left:2612.00px;top:116.00px;" width="50" height="50" viewBox="0 0 50 50"><text x="0" y="20" font-size="24" fill="#3b78c3" font-family="Liberation Sans, sans-serif">A</text><text x="1" y="45" font-size="24" fill="#9a4fb8" font-family="Liberation Sans, sans-serif" font-weight="700">Z</text><path d="M19 14h28L37 26v13l-7-4v-9z" fill="#7a7a7a"/></svg>
<div class="t" style="top:171.40px;line-height:26px;font-size:20.5px;color:#383838;left:2609.45px;transform:scaleX(0.9532);transform-origin:0 50%;-webkit-text-stroke:0.3px;">Sort &amp;</div>
<div class="t" style="top:197.00px;line-height:26px;font-size:20.5px;color:#383838;left:2606.80px;transform:scaleX(0.8955);transform-origin:0 50%;-webkit-text-stroke:0.3px;">Filter</div>
<svg style="left:2652.64px;top:206.54px;" width="11.92" height="7.92" viewBox="0 0 11.92 7.92"><path d="M2 2.0L5.96 5.7L9.92 2.0" fill="none" stroke="#444" stroke-width="2.2"/></svg>
<svg style="left:2684.00px;top:115.00px;" width="48" height="50" viewBox="0 0 48 50"><circle cx="29.3" cy="19" r="14.5" fill="#fff" stroke="#4a86c8" stroke-width="4"/><path d="M17.5 30.5L4.5 43.5" stroke="#3d78b8" stroke-width="6" stroke-linecap="round"/></svg>
<div class="t" style="top:171.40px;line-height:26px;font-size:20.5px;color:#383838;letter-spacing:-0.330px;left:2680.00px;-webkit-text-stroke:0.3px;">Find &amp;</div>
<div class="t" style="top:197.00px;line-height:26px;font-size:20.5px;color:#383838;left:2674.85px;transform:scaleX(0.8651);transform-origin:0 50%;-webkit-text-stroke:0.3px;">Select</div>
<svg style="left:2729.44px;top:206.54px;" width="11.92" height="7.92" viewBox="0 0 11.92 7.92"><path d="M2 2.0L5.96 5.7L9.92 2.0" fill="none" stroke="#444" stroke-width="2.2"/></svg>
<svg style="left:2799.00px;top:127.80px;" width="22" height="22" viewBox="0 0 22 22"><circle cx="11" cy="11" r="9.4" fill="#ff8c00"/></svg>
<div class="t" style="top:171.40px;line-height:26px;font-size:20.5px;color:#383838;letter-spacing:-0.336px;left:2777.95px;-webkit-text-stroke:0.3px;">Add-ins</div>
<svg style="left:2916.00px;top:118.00px;" width="46" height="50" viewBox="0 0 46 50"><path d="M8 3h17l8 8v10M27 41H8a5 5 0 0 1-5-5V8a5 5 0 0 1 5-5" fill="none" stroke="#8aa4ea" stroke-width="2.4" stroke-linecap="round"/><path d="M10 29c5-4 9-10 9-15 0-3-3-3-3 0 0 5 6 11 11 12 3 .5 3-2 0-2.5-6-1-12 2-17 5.5z" fill="none" stroke="#8aa4ea" stroke-width="1.8"/><g fill="none" stroke="#8aa4ea" stroke-width="3.2" stroke-linecap="round"><path d="M30 33l5-5a5.5 5.5 0 0 1 8 8l-3 3"/><path d="M33 36l-5 5a5.5 5.5 0 0 1-8-8l3-3" transform="translate(4 4)"/></g></svg>
<div class="t" style="top:171.40px;line-height:26px;font-size:20.5px;color:#383838;left:2905.65px;transform:scaleX(0.8825);transform-origin:0 50%;-webkit-text-stroke:0.3px;">Create</div>
<div class="t" style="top:197.00px;line-height:26px;font-size:20.5px;color:#383838;left:2908.00px;transform:scaleX(0.8432);transform-origin:0 50%;-webkit-text-stroke:0.3px;">a PDF</div>
<div style="left:8.70px;top:274.70px;width:165.30px;height:39.30px;background:#fff;border:1.5px solid #c6c6c6;"></div>
<div class="t" style="top:281.00px;line-height:28px;font-size:22px;color:#444;left:19.40px;transform:scaleX(0.9815);transform-origin:0 50%;-webkit-text-stroke:0.3px;">AW31</div>
<svg style="left:151.50px;top:290.25px;" width="11.0" height="6.5" viewBox="0 0 11.0 6.5"><path d="M0 0h11.0l-5.5 5.5z" fill="#666"/></svg>
<div style="left:198.00px;top:283.00px;width:2.40px;height:2.40px;background:#b0b0b0;"></div>
<div style="left:198.00px;top:293.00px;width:2.40px;height:2.40px;background:#b0b0b0;"></div>
<div style="left:198.00px;top:303.00px;width:2.40px;height:2.40px;background:#b0b0b0;"></div>
<div style="left:224.00px;top:274.70px;width:178.50px;height:39.30px;background:#fff;border:1.5px solid #d6d6d6;"></div>
<svg style="left:246.00px;top:286.00px;" width="18" height="18" viewBox="0 0 18 18"><path d="M1 1l16 16M17 1L1 17" stroke="#c0c0c0" stroke-width="2"/></svg>
<svg style="left:303.00px;top:285.00px;" width="22" height="20" viewBox="0 0 22 20"><path d="M1 11l7 7L21 1" stroke="#c8c8c8" stroke-width="2.6" fill="none"/></svg>
<div class="t" style="top:279.00px;line-height:30px;font-size:24px;color:#666;font-weight:700;font-style:italic;font-family:'Liberation Serif', serif;left:363.00px;-webkit-text-stroke:0.3px;">f</div>
<div class="t" style="top:289.50px;line-height:19px;font-size:15px;color:#666;font-weight:700;font-style:italic;font-family:'Liberation Serif', serif;left:373.00px;-webkit-text-stroke:0.3px;">x</div>
<div style="left:409.40px;top:274.70px;width:2600.00px;height:39.30px;background:#fff;border:1.5px solid #d6d6d6;"></div>
<div class="t" style="top:281.00px;line-height:28px;font-size:22px;color:#444;letter-spacing:0.266px;left:427.80px;-webkit-text-stroke:0.3px;">1/01/2025</div>
<div style="left:0.00px;top:330.00px;width:3000.00px;height:39.60px;background:#e6e6e6;"></div>
<div style="left:131.25px;top:333.00px;width:1.30px;height:36.00px;background:#c3c3c3;"></div>
<div class="t" style="top:334.80px;line-height:31px;font-size:24.5px;color:#444;left:86.39px;">T</div>
<div style="left:208.00px;top:333.00px;width:1.30px;height:36.00px;background:#c3c3c3;"></div>
<div class="t" style="top:334.80px;line-height:31px;font-size:24.5px;color:#444;left:161.77px;">U</div>
<div style="left:284.75px;top:333.00px;width:1.30px;height:36.00px;background:#c3c3c3;"></div>
<div class="t" style="top:334.80px;line-height:31px;font-size:24.5px;color:#444;left:239.20px;">V</div>
<div style="left:361.50px;top:333.00px;width:1.30px;height:36.00px;background:#c3c3c3;"></div>
<div class="t" style="top:334.80px;line-height:31px;font-size:24.5px;color:#444;left:312.56px;">W</div>
<div style="left:438.25px;top:333.00px;width:1.30px;height:36.00px;background:#c3c3c3;"></div>
<div class="t" style="top:334.80px;line-height:31px;font-size:24.5px;color:#444;left:392.70px;">X</div>
<div style="left:515.00px;top:333.00px;width:1.30px;height:36.00px;background:#c3c3c3;"></div>
<div class="t" style="top:334.80px;line-height:31px;font-size:24.5px;color:#444;left:469.45px;">Y</div>
<div style="left:591.75px;top:333.00px;width:1.30px;height:36.00px;background:#c3c3c3;"></div>
<div class="t" style="top:334.80px;line-height:31px;font-size:24.5px;color:#444;left:546.89px;">Z</div>
<div style="left:668.50px;top:333.00px;width:1.30px;height:36.00px;background:#c3c3c3;"></div>
<div class="t" style="top:334.80px;line-height:31px;font-size:24.5px;color:#444;left:614.78px;">AA</div>
<div style="left:745.25px;top:333.00px;width:1.30px;height:36.00px;background:#c3c3c3;"></div>
<div class="t" style="top:334.80px;line-height:31px;font-size:24.5px;color:#444;left:691.53px;">AB</div>
<div style="left:822.00px;top:333.00px;width:1.30px;height:36.00px;background:#c3c3c3;"></div>
<div class="t" style="top:334.80px;line-height:31px;font-size:24.5px;color:#444;left:767.60px;">AC</div>
<div style="left:898.75px;top:333.00px;width:1.30px;height:36.00px;background:#c3c3c3;"></div>
<div class="t" style="top:334.80px;line-height:31px;font-size:24.5px;color:#444;left:844.35px;">AD</div>
<div style="left:975.50px;top:333.00px;width:1.30px;height:36.00px;background:#c3c3c3;"></div>
<div class="t" style="top:334.80px;line-height:31px;font-size:24.5px;color:#444;left:921.78px;">AE</div>
<div style="left:1052.25px;top:333.00px;width:1.30px;height:36.00px;background:#c3c3c3;"></div>
<div class="t" style="top:334.80px;line-height:31px;font-size:24.5px;color:#444;left:999.22px;">AF</div>
<div style="left:1129.00px;top:333.00px;width:1.30px;height:36.00px;background:#c3c3c3;"></div>
<div class="t" style="top:334.80px;line-height:31px;font-size:24.5px;color:#444;left:1073.92px;">AG</div>
<div style="left:1152.00px;top:333.00px;width:1.30px;height:36.00px;background:#c3c3c3;"></div>
<div style="left:1131.0px;top:335px;width:20.5px;height:32px;overflow:hidden;"><div class="t" style="left:0;top:-1.2px;line-height:32px;font-size:24.5px;color:#444;letter-spacing:-0.5px">AH</div></div>
<div style="left:1227.00px;top:333.00px;width:1.30px;height:36.00px;background:#c3c3c3;"></div>
<div class="t" style="top:334.80px;line-height:31px;font-size:24.5px;color:#444;left:1178.92px;">AI</div>
<div style="left:1305.00px;top:333.00px;width:1.30px;height:36.00px;background:#c3c3c3;"></div>
<div class="t" style="top:334.80px;line-height:31px;font-size:24.5px;color:#444;left:1252.70px;">AJ</div>
<div style="left:1383.40px;top:333.00px;width:1.30px;height:36.00px;background:#c3c3c3;"></div>
<div class="t" style="top:334.80px;line-height:31px;font-size:24.5px;color:#444;left:1328.86px;">AK</div>
<div style="left:1404.00px;top:333.00px;width:1.30px;height:36.00px;background:#c3c3c3;"></div>
<div style="left:1385.4px;top:335px;width:18.1px;height:32px;overflow:hidden;"><div class="t" style="left:0;top:-1.2px;line-height:32px;font-size:24.5px;color:#444;letter-spacing:-0.5px">AL</div></div>
<div style="left:1537.00px;top:333.00px;width:1.30px;height:36.00px;background:#c3c3c3;"></div>
<div class="t" style="top:334.80px;line-height:31px;font-size:24.5px;color:#444;left:1453.12px;">AM</div>
<div style="left:1741.00px;top:333.00px;width:1.30px;height:36.00px;background:#c3c3c3;"></div>
<div class="t" style="top:334.80px;line-height:31px;font-size:24.5px;color:#444;left:1622.98px;">AN</div>
<div style="left:1764.00px;top:333.00px;width:1.30px;height:36.00px;background:#c3c3c3;"></div>
<div style="left:1743.0px;top:335px;width:20.5px;height:32px;overflow:hidden;"><div class="t" style="left:0;top:-1.2px;line-height:32px;font-size:24.5px;color:#444;letter-spacing:-0.5px">AO</div></div>
<div style="left:1842.00px;top:333.00px;width:1.30px;height:36.00px;background:#c3c3c3;"></div>
<div class="t" style="top:334.80px;line-height:31px;font-size:24.5px;color:#444;left:1787.66px;">AP</div>
<div style="left:1920.00px;top:333.00px;width:1.30px;height:36.00px;background:#c3c3c3;"></div>
<div class="t" style="top:334.80px;line-height:31px;font-size:24.5px;color:#444;left:1864.30px;">AQ</div>
<div style="left:1999.00px;top:333.00px;width:1.30px;height:36.00px;background:#c3c3c3;"></div>
<div class="t" style="top:334.80px;line-height:31px;font-size:24.5px;color:#444;left:1943.48px;">AR</div>
<div style="left:2077.00px;top:333.00px;width:1.30px;height:36.00px;background:#c3c3c3;"></div>
<div class="t" style="top:334.80px;line-height:31px;font-size:24.5px;color:#444;left:2022.66px;">AS</div>
<div style="left:2155.50px;top:333.00px;width:1.30px;height:36.00px;background:#c3c3c3;"></div>
<div class="t" style="top:334.80px;line-height:31px;font-size:24.5px;color:#444;left:2102.50px;">AT</div>
<div style="left:2179.00px;top:333.00px;width:1.30px;height:36.00px;background:#c3c3c3;"></div>
<div style="left:2157.5px;top:335px;width:21.0px;height:32px;overflow:hidden;"><div class="t" style="left:0;top:-1.2px;line-height:32px;font-size:24.5px;color:#444;letter-spacing:-0.5px">AU</div></div>
<div style="left:2612.00px;top:333.00px;width:1.30px;height:36.00px;background:#c3c3c3;"></div>
<div class="t" style="top:334.80px;line-height:31px;font-size:24.5px;color:#444;left:2381.06px;">AV</div>
<div style="left:3102.00px;top:333.00px;width:1.30px;height:36.00px;background:#c3c3c3;"></div>
<div class="t" style="top:334.80px;line-height:31px;font-size:24.5px;color:#444;left:2838.72px;">AW</div>
<div style="left:0.00px;top:368.30px;width:3000.00px;height:1.60px;background:#a6a6a6;"></div>
<svg style="left:24.00px;top:339.00px;" width="26" height="26" viewBox="0 0 26 26"><path d="M25 1v24H1z" fill="#b7b7b7"/></svg>
<div style="left:0.00px;top:369.60px;width:55.00px;height:1234.40px;background:#e6e6e6;"></div>
<div style="left:0.00px;top:411.23px;width:55.00px;height:1.40px;background:#c3c3c3;"></div>
<div class="t" style="top:376.32px;line-height:31px;font-size:25px;color:#444;left:13.39px;">22</div>
<div style="left:0.00px;top:453.66px;width:55.00px;height:1.40px;background:#c3c3c3;"></div>
<div class="t" style="top:418.75px;line-height:31px;font-size:25px;color:#444;left:13.39px;">23</div>
<div style="left:0.00px;top:496.09px;width:55.00px;height:1.40px;background:#c3c3c3;"></div>
<div class="t" style="top:461.18px;line-height:31px;font-size:25px;color:#444;left:13.39px;">24</div>
<div style="left:0.00px;top:538.52px;width:55.00px;height:1.40px;background:#c3c3c3;"></div>
<div class="t" style="top:503.61px;line-height:31px;font-size:25px;color:#444;left:13.39px;">25</div>
<div style="left:0.00px;top:580.95px;width:55.00px;height:1.40px;background:#c3c3c3;"></div>
<div class="t" style="top:546.04px;line-height:31px;font-size:25px;color:#444;left:13.39px;">26</div>
<div style="left:0.00px;top:623.38px;width:55.00px;height:1.40px;background:#c3c3c3;"></div>
<div class="t" style="top:588.47px;line-height:31px;font-size:25px;color:#444;left:13.39px;">27</div>
<div style="left:0.00px;top:665.81px;width:55.00px;height:1.40px;background:#c3c3c3;"></div>
<div class="t" style="top:630.89px;line-height:31px;font-size:25px;color:#444;left:13.39px;">28</div>
<div style="left:0.00px;top:709.00px;width:55.00px;height:1.40px;background:#c3c3c3;"></div>
<div class="t" style="top:673.70px;line-height:31px;font-size:25px;color:#444;left:13.39px;">29</div>
<div style="left:0.00px;top:748.21px;width:55.00px;height:1.40px;background:#c3c3c3;"></div>
<div class="t" style="top:714.90px;line-height:31px;font-size:25px;color:#444;left:13.39px;">30</div>
<div style="left:0.00px;top:787.42px;width:55.00px;height:1.40px;background:#c3c3c3;"></div>
<div class="t" style="top:754.12px;line-height:31px;font-size:25px;color:#444;left:13.39px;">31</div>
<div style="left:0.00px;top:826.63px;width:55.00px;height:1.40px;background:#c3c3c3;"></div>
<div class="t" style="top:793.32px;line-height:31px;font-size:25px;color:#444;left:13.39px;">32</div>
<div style="left:0.00px;top:865.84px;width:55.00px;height:1.40px;background:#c3c3c3;"></div>
<div class="t" style="top:832.53px;line-height:31px;font-size:25px;color:#444;left:13.39px;">33</div>
<div style="left:0.00px;top:905.05px;width:55.00px;height:1.40px;background:#c3c3c3;"></div>
<div class="t" style="top:871.74px;line-height:31px;font-size:25px;color:#444;left:13.39px;">34</div>
<div style="left:0.00px;top:944.26px;width:55.00px;height:1.40px;background:#c3c3c3;"></div>
<div class="t" style="top:910.95px;line-height:31px;font-size:25px;color:#444;left:13.39px;">35</div>
<div style="left:0.00px;top:983.47px;width:55.00px;height:1.40px;background:#c3c3c3;"></div>
<div class="t" style="top:950.16px;line-height:31px;font-size:25px;color:#444;left:13.39px;">36</div>
<div style="left:0.00px;top:1022.68px;width:55.00px;height:1.40px;background:#c3c3c3;"></div>
<div class="t" style="top:989.38px;line-height:31px;font-size:25px;color:#444;left:13.39px;">37</div>
<div style="left:0.00px;top:1061.89px;width:55.00px;height:1.40px;background:#c3c3c3;"></div>
<div class="t" style="top:1028.59px;line-height:31px;font-size:25px;color:#444;left:13.39px;">38</div>
<div style="left:0.00px;top:1101.10px;width:55.00px;height:1.40px;background:#c3c3c3;"></div>
<div class="t" style="top:1067.80px;line-height:31px;font-size:25px;color:#444;left:13.39px;">39</div>
<div style="left:0.00px;top:1140.31px;width:55.00px;height:1.40px;background:#c3c3c3;"></div>
<div class="t" style="top:1107.01px;line-height:31px;font-size:25px;color:#444;left:13.39px;">40</div>
<div style="left:0.00px;top:1179.52px;width:55.00px;height:1.40px;background:#c3c3c3;"></div>
<div class="t" style="top:1146.21px;line-height:31px;font-size:25px;color:#444;left:13.39px;">41</div>
<div style="left:0.00px;top:1218.73px;width:55.00px;height:1.40px;background:#c3c3c3;"></div>
<div class="t" style="top:1185.42px;line-height:31px;font-size:25px;color:#444;left:13.39px;">42</div>
<div style="left:0.00px;top:1257.94px;width:55.00px;height:1.40px;background:#c3c3c3;"></div>
<div class="t" style="top:1224.63px;line-height:31px;font-size:25px;color:#444;left:13.39px;">43</div>
<div style="left:0.00px;top:1297.15px;width:55.00px;height:1.40px;background:#c3c3c3;"></div>
<div class="t" style="top:1263.84px;line-height:31px;font-size:25px;color:#444;left:13.39px;">44</div>
<div style="left:0.00px;top:1336.36px;width:55.00px;height:1.40px;background:#c3c3c3;"></div>
<div class="t" style="top:1303.05px;line-height:31px;font-size:25px;color:#444;left:13.39px;">45</div>
<div style="left:0.00px;top:1375.57px;width:55.00px;height:1.40px;background:#c3c3c3;"></div>
<div class="t" style="top:1342.26px;line-height:31px;font-size:25px;color:#444;left:13.39px;">46</div>
<div style="left:0.00px;top:1414.78px;width:55.00px;height:1.40px;background:#c3c3c3;"></div>
<div class="t" style="top:1381.47px;line-height:31px;font-size:25px;color:#444;left:13.39px;">47</div>
<div style="left:0.00px;top:1453.99px;width:55.00px;height:1.40px;background:#c3c3c3;"></div>
<div class="t" style="top:1420.68px;line-height:31px;font-size:25px;color:#444;left:13.39px;">48</div>
<div style="left:0.00px;top:1493.20px;width:55.00px;height:1.40px;background:#c3c3c3;"></div>
<div class="t" style="top:1459.89px;line-height:31px;font-size:25px;color:#444;left:13.39px;">49</div>
<div style="left:0.00px;top:1532.41px;width:55.00px;height:1.40px;background:#c3c3c3;"></div>
<div class="t" style="top:1499.11px;line-height:31px;font-size:25px;color:#444;left:13.39px;">50</div>
<div style="left:0.00px;top:1571.62px;width:55.00px;height:1.40px;background:#c3c3c3;"></div>
<div class="t" style="top:1538.32px;line-height:31px;font-size:25px;color:#444;left:13.39px;">51</div>
<div style="left:0.00px;top:1610.83px;width:55.00px;height:1.40px;background:#c3c3c3;"></div>
<div class="t" style="top:1577.53px;line-height:31px;font-size:25px;color:#444;left:13.39px;">52</div>
<div style="left:54.20px;top:369.60px;width:1.50px;height:1234.40px;background:#b8b8b8;"></div>
<div style="left:439.25px;top:369.60px;width:76.75px;height:42.43px;background:repeating-linear-gradient(135deg,#fbeecb 0 1.45px,#fffaf0 1.45px 2.9px);"></div>
<div style="left:516.00px;top:369.60px;width:76.75px;height:42.43px;background:repeating-linear-gradient(135deg,#fbeecb 0 1.45px,#fffaf0 1.45px 2.9px);"></div>
<div style="left:976.50px;top:369.60px;width:76.75px;height:42.43px;background:repeating-linear-gradient(135deg,#fbeecb 0 1.45px,#fffaf0 1.45px 2.9px);"></div>
<div style="left:1053.25px;top:369.60px;width:76.75px;height:42.43px;background:repeating-linear-gradient(135deg,#fbeecb 0 1.45px,#fffaf0 1.45px 2.9px);"></div>
<div class="t" style="top:417.75px;line-height:34px;font-size:27.5px;color:#1a1a1a;left:86.99px;transform:scaleX(0.9000);transform-origin:0 50%;-webkit-text-stroke:0.3px;">L</div>
<div class="t" style="top:417.75px;line-height:34px;font-size:27.5px;color:#1a1a1a;left:163.74px;transform:scaleX(0.9000);transform-origin:0 50%;-webkit-text-stroke:0.3px;">L</div>
<div class="t" style="top:417.75px;line-height:34px;font-size:27.5px;color:#1a1a1a;left:240.49px;transform:scaleX(0.9000);transform-origin:0 50%;-webkit-text-stroke:0.3px;">L</div>
<div class="t" style="top:417.75px;line-height:34px;font-size:27.5px;color:#1a1a1a;left:317.24px;transform:scaleX(0.9000);transform-origin:0 50%;-webkit-text-stroke:0.3px;">L</div>
<div class="t" style="top:417.75px;line-height:34px;font-size:27.5px;color:#1a1a1a;left:393.99px;transform:scaleX(0.9000);transform-origin:0 50%;-webkit-text-stroke:0.3px;">L</div>
<div style="left:439.25px;top:412.03px;width:76.75px;height:42.43px;background:repeating-linear-gradient(135deg,#fbeecb 0 1.45px,#fffaf0 1.45px 2.9px);"></div>
<div class="t" style="top:417.75px;line-height:34px;font-size:27.5px;color:#1a1a1a;left:470.74px;transform:scaleX(0.9000);transform-origin:0 50%;-webkit-text-stroke:0.3px;">L</div>
<div style="left:516.00px;top:412.03px;width:76.75px;height:42.43px;background:repeating-linear-gradient(135deg,#fbeecb 0 1.45px,#fffaf0 1.45px 2.9px);"></div>
<div class="t" style="top:417.75px;line-height:34px;font-size:27.5px;color:#1a1a1a;left:700.99px;transform:scaleX(0.9000);transform-origin:0 50%;-webkit-text-stroke:0.3px;">L</div>
<div class="t" style="top:417.75px;line-height:34px;font-size:27.5px;color:#1a1a1a;left:777.74px;transform:scaleX(0.9000);transform-origin:0 50%;-webkit-text-stroke:0.3px;">L</div>
<div class="t" style="top:417.75px;line-height:34px;font-size:27.5px;color:#1a1a1a;left:854.49px;transform:scaleX(0.9000);transform-origin:0 50%;-webkit-text-stroke:0.3px;">L</div>
<div style="left:976.50px;top:412.03px;width:76.75px;height:42.43px;background:repeating-linear-gradient(135deg,#fbeecb 0 1.45px,#fffaf0 1.45px 2.9px);"></div>
<div style="left:1053.25px;top:412.03px;width:76.75px;height:42.43px;background:repeating-linear-gradient(135deg,#fbeecb 0 1.45px,#fffaf0 1.45px 2.9px);"></div>
<div class="t" style="top:460.18px;line-height:34px;font-size:27.5px;color:#1a1a1a;left:86.99px;transform:scaleX(0.9000);transform-origin:0 50%;-webkit-text-stroke:0.3px;">L</div>
<div class="t" style="top:460.18px;line-height:34px;font-size:27.5px;color:#1a1a1a;left:159.39px;transform:scaleX(0.9800);transform-origin:0 50%;-webkit-text-stroke:0.3px;">M</div>
<div style="left:209.00px;top:454.46px;width:76.75px;height:42.43px;background:#f055b4;"></div>
<div class="t" style="top:460.18px;line-height:34px;font-size:27.5px;color:#1a1a1a;left:228.85px;transform:scaleX(0.9700);transform-origin:0 50%;-webkit-text-stroke:0.3px;">ML</div>
<div style="left:285.75px;top:454.46px;width:76.75px;height:42.43px;background:#f055b4;"></div>
<div class="t" style="top:460.18px;line-height:34px;font-size:27.5px;color:#1a1a1a;left:305.60px;transform:scaleX(0.9700);transform-origin:0 50%;-webkit-text-stroke:0.3px;">ML</div>
<div style="left:439.25px;top:454.46px;width:76.75px;height:42.43px;background:repeating-linear-gradient(135deg,#fbeecb 0 1.45px,#fffaf0 1.45px 2.9px);"></div>
<div style="left:516.00px;top:454.46px;width:76.75px;height:42.43px;background:repeating-linear-gradient(135deg,#fbeecb 0 1.45px,#fffaf0 1.45px 2.9px);"></div>
<div style="left:592.75px;top:454.46px;width:76.75px;height:42.43px;background:#f055b4;"></div>
<div class="t" style="top:460.18px;line-height:34px;font-size:27.5px;color:#1a1a1a;left:612.60px;transform:scaleX(0.9700);transform-origin:0 50%;-webkit-text-stroke:0.3px;">ML</div>
<div style="left:669.50px;top:454.46px;width:76.75px;height:42.43px;background:#f055b4;"></div>
<div class="t" style="top:460.18px;line-height:34px;font-size:27.5px;color:#1a1a1a;left:689.35px;transform:scaleX(0.9700);transform-origin:0 50%;-webkit-text-stroke:0.3px;">ML</div>
<div style="left:746.25px;top:454.46px;width:76.75px;height:42.43px;background:#f055b4;"></div>
<div class="t" style="top:460.18px;line-height:34px;font-size:27.5px;color:#1a1a1a;left:766.10px;transform:scaleX(0.9700);transform-origin:0 50%;-webkit-text-stroke:0.3px;">ML</div>
<div style="left:823.00px;top:454.46px;width:76.75px;height:42.43px;background:#f055b4;"></div>
<div class="t" style="top:460.18px;line-height:34px;font-size:27.5px;color:#1a1a1a;left:842.85px;transform:scaleX(0.9700);transform-origin:0 50%;-webkit-text-stroke:0.3px;">ML</div>
<div style="left:899.75px;top:454.46px;width:76.75px;height:42.43px;background:#f055b4;"></div>
<div class="t" style="top:460.18px;line-height:34px;font-size:27.5px;color:#1a1a1a;left:919.60px;transform:scaleX(0.9700);transform-origin:0 50%;-webkit-text-stroke:0.3px;">ML</div>
<div style="left:976.50px;top:454.46px;width:76.75px;height:42.43px;background:repeating-linear-gradient(135deg,#fbeecb 0 1.45px,#fffaf0 1.45px 2.9px);"></div>
<div style="left:1053.25px;top:454.46px;width:76.75px;height:42.43px;background:repeating-linear-gradient(135deg,#fbeecb 0 1.45px,#fffaf0 1.45px 2.9px);"></div>
<div style="left:55.50px;top:496.89px;width:76.75px;height:42.43px;background:#00efd2;"></div>
<div class="t" style="top:502.61px;line-height:34px;font-size:27.5px;color:#1a1a1a;left:80.59px;transform:scaleX(0.7900);transform-origin:0 50%;-webkit-text-stroke:0.3px;">EL</div>
<div style="left:132.25px;top:496.89px;width:76.75px;height:42.43px;background:#00efd2;"></div>
<div class="t" style="top:502.61px;line-height:34px;font-size:27.5px;color:#1a1a1a;left:157.34px;transform:scaleX(0.7900);transform-origin:0 50%;-webkit-text-stroke:0.3px;">EL</div>
<div style="left:209.00px;top:496.89px;width:76.75px;height:42.43px;background:#00efd2;"></div>
<div class="t" style="top:502.61px;line-height:34px;font-size:27.5px;color:#1a1a1a;left:234.09px;transform:scaleX(0.7900);transform-origin:0 50%;-webkit-text-stroke:0.3px;">EL</div>
<div style="left:285.75px;top:496.89px;width:76.75px;height:42.43px;background:#00efd2;"></div>
<div class="t" style="top:502.61px;line-height:34px;font-size:27.5px;color:#1a1a1a;left:310.84px;transform:scaleX(0.7900);transform-origin:0 50%;-webkit-text-stroke:0.3px;">EL</div>
<div style="left:439.25px;top:496.89px;width:76.75px;height:42.43px;background:repeating-linear-gradient(135deg,#fbeecb 0 1.45px,#fffaf0 1.45px 2.9px);"></div>
<div style="left:516.00px;top:496.89px;width:76.75px;height:42.43px;background:repeating-linear-gradient(135deg,#22e2a8 0 1.45px,#7cecc4 1.45px 2.9px);"></div>
<div class="t" style="top:502.61px;line-height:34px;font-size:27.5px;color:#1a1a1a;left:541.09px;transform:scaleX(0.7900);transform-origin:0 50%;-webkit-text-stroke:0.3px;">EL</div>
<div style="left:592.75px;top:496.89px;width:76.75px;height:42.43px;background:#00efd2;"></div>
<div class="t" style="top:502.61px;line-height:34px;font-size:27.5px;color:#1a1a1a;left:617.84px;transform:scaleX(0.7900);transform-origin:0 50%;-webkit-text-stroke:0.3px;">EL</div>
<div style="left:669.50px;top:496.89px;width:76.75px;height:42.43px;background:#00efd2;"></div>
<div class="t" style="top:502.61px;line-height:34px;font-size:27.5px;color:#1a1a1a;left:694.59px;transform:scaleX(0.7900);transform-origin:0 50%;-webkit-text-stroke:0.3px;">EL</div>
<div style="left:746.25px;top:496.89px;width:76.75px;height:42.43px;background:#00efd2;"></div>
<div class="t" style="top:502.61px;line-height:34px;font-size:27.5px;color:#1a1a1a;left:771.34px;transform:scaleX(0.7900);transform-origin:0 50%;-webkit-text-stroke:0.3px;">EL</div>
<div style="left:823.00px;top:496.89px;width:76.75px;height:42.43px;background:#00efd2;"></div>
<div class="t" style="top:502.61px;line-height:34px;font-size:27.5px;color:#1a1a1a;left:848.09px;transform:scaleX(0.7900);transform-origin:0 50%;-webkit-text-stroke:0.3px;">EL</div>
<div style="left:899.75px;top:496.89px;width:76.75px;height:42.43px;background:#00efd2;"></div>
<div class="t" style="top:502.61px;line-height:34px;font-size:27.5px;color:#1a1a1a;left:924.84px;transform:scaleX(0.7900);transform-origin:0 50%;-webkit-text-stroke:0.3px;">EL</div>
<div style="left:976.50px;top:496.89px;width:76.75px;height:42.43px;background:repeating-linear-gradient(135deg,#fbeecb 0 1.45px,#fffaf0 1.45px 2.9px);"></div>
<div style="left:1053.25px;top:496.89px;width:76.75px;height:42.43px;background:repeating-linear-gradient(135deg,#fbeecb 0 1.45px,#fffaf0 1.45px 2.9px);"></div>
<div class="t" style="top:545.04px;line-height:34px;font-size:27.5px;color:#1a1a1a;left:163.74px;transform:scaleX(0.9000);transform-origin:0 50%;-webkit-text-stroke:0.3px;">L</div>
<div class="t" style="top:545.04px;line-height:34px;font-size:27.5px;color:#1a1a1a;left:240.49px;transform:scaleX(0.9000);transform-origin:0 50%;-webkit-text-stroke:0.3px;">L</div>
<div class="t" style="top:545.04px;line-height:34px;font-size:27.5px;color:#1a1a1a;left:317.24px;transform:scaleX(0.9000);transform-origin:0 50%;-webkit-text-stroke:0.3px;">L</div>
<div class="t" style="top:545.04px;line-height:34px;font-size:27.5px;color:#1a1a1a;left:393.99px;transform:scaleX(0.9000);transform-origin:0 50%;-webkit-text-stroke:0.3px;">L</div>
<div style="left:439.25px;top:539.32px;width:76.75px;height:42.43px;background:repeating-linear-gradient(135deg,#fbeecb 0 1.45px,#fffaf0 1.45px 2.9px);"></div>
<div style="left:516.00px;top:539.32px;width:76.75px;height:42.43px;background:repeating-linear-gradient(135deg,#fbeecb 0 1.45px,#fffaf0 1.45px 2.9px);"></div>
<div class="t" style="top:545.04px;line-height:34px;font-size:27.5px;color:#1a1a1a;left:777.74px;transform:scaleX(0.9000);transform-origin:0 50%;-webkit-text-stroke:0.3px;">L</div>
<div class="t" style="top:545.04px;line-height:34px;font-size:27.5px;color:#1a1a1a;left:854.49px;transform:scaleX(0.9000);transform-origin:0 50%;-webkit-text-stroke:0.3px;">L</div>
<div class="t" style="top:545.04px;line-height:34px;font-size:27.5px;color:#1a1a1a;left:931.24px;transform:scaleX(0.9000);transform-origin:0 50%;-webkit-text-stroke:0.3px;">L</div>
<div style="left:976.50px;top:539.32px;width:76.75px;height:42.43px;background:repeating-linear-gradient(135deg,#fbeecb 0 1.45px,#fffaf0 1.45px 2.9px);"></div>
<div class="t" style="top:545.04px;line-height:34px;font-size:27.5px;color:#1a1a1a;left:1007.99px;transform:scaleX(0.9000);transform-origin:0 50%;-webkit-text-stroke:0.3px;">L</div>
<div style="left:1053.25px;top:539.32px;width:76.75px;height:42.43px;background:repeating-linear-gradient(135deg,#fbeecb 0 1.45px,#fffaf0 1.45px 2.9px);"></div>
<div class="t" style="top:545.04px;line-height:34px;font-size:27.5px;color:#1a1a1a;left:1084.74px;transform:scaleX(0.9000);transform-origin:0 50%;-webkit-text-stroke:0.3px;">L</div>
<div style="left:285.75px;top:581.75px;width:76.75px;height:42.43px;background:#9b5de5;"></div>
<div class="t" style="top:587.47px;line-height:34px;font-size:27.5px;color:#1a1a1a;left:303.82px;transform:scaleX(0.8300);transform-origin:0 50%;-webkit-text-stroke:0.3px;">LSL</div>
<div style="left:362.50px;top:581.75px;width:76.75px;height:42.43px;background:#9b5de5;"></div>
<div class="t" style="top:587.47px;line-height:34px;font-size:27.5px;color:#1a1a1a;left:380.57px;transform:scaleX(0.8300);transform-origin:0 50%;-webkit-text-stroke:0.3px;">LSL</div>
<div style="left:439.25px;top:581.75px;width:76.75px;height:42.43px;background:repeating-linear-gradient(135deg,#9458dc 0 1.45px,#d2a9e2 1.45px 2.9px);"></div>
<div class="t" style="top:587.47px;line-height:34px;font-size:27.5px;color:#1a1a1a;left:457.32px;transform:scaleX(0.8300);transform-origin:0 50%;-webkit-text-stroke:0.3px;">LSL</div>
<div style="left:516.00px;top:581.75px;width:76.75px;height:42.43px;background:repeating-linear-gradient(135deg,#9458dc 0 1.45px,#d2a9e2 1.45px 2.9px);"></div>
<div class="t" style="top:587.47px;line-height:34px;font-size:27.5px;color:#1a1a1a;left:534.07px;transform:scaleX(0.8300);transform-origin:0 50%;-webkit-text-stroke:0.3px;">LSL</div>
<div style="left:592.75px;top:581.75px;width:76.75px;height:42.43px;background:#9b5de5;"></div>
<div class="t" style="top:587.47px;line-height:34px;font-size:27.5px;color:#1a1a1a;left:610.82px;transform:scaleX(0.8300);transform-origin:0 50%;-webkit-text-stroke:0.3px;">LSL</div>
<div style="left:669.50px;top:581.75px;width:76.75px;height:42.43px;background:#9b5de5;"></div>
<div class="t" style="top:587.47px;line-height:34px;font-size:27.5px;color:#1a1a1a;left:687.57px;transform:scaleX(0.8300);transform-origin:0 50%;-webkit-text-stroke:0.3px;">LSL</div>
<div style="left:976.50px;top:581.75px;width:76.75px;height:42.43px;background:repeating-linear-gradient(135deg,#fbeecb 0 1.45px,#fffaf0 1.45px 2.9px);"></div>
<div style="left:1053.25px;top:581.75px;width:76.75px;height:42.43px;background:repeating-linear-gradient(135deg,#fbeecb 0 1.45px,#fffaf0 1.45px 2.9px);"></div>
<div style="left:439.25px;top:624.18px;width:76.75px;height:42.43px;background:repeating-linear-gradient(135deg,#fbeecb 0 1.45px,#fffaf0 1.45px 2.9px);"></div>
<div style="left:516.00px;top:624.18px;width:76.75px;height:42.43px;background:repeating-linear-gradient(135deg,#fbeecb 0 1.45px,#fffaf0 1.45px 2.9px);"></div>
<div style="left:976.50px;top:624.18px;width:76.75px;height:42.43px;background:repeating-linear-gradient(135deg,#fbeecb 0 1.45px,#fffaf0 1.45px 2.9px);"></div>
<div style="left:1053.25px;top:624.18px;width:76.75px;height:42.43px;background:repeating-linear-gradient(135deg,#fbeecb 0 1.45px,#fffaf0 1.45px 2.9px);"></div>
<div style="left:55.50px;top:411.03px;width:1074.50px;height:2.00px;background:#1c1c1c;"></div>
<div style="left:55.50px;top:453.46px;width:1074.50px;height:2.00px;background:#1c1c1c;"></div>
<div style="left:55.50px;top:495.89px;width:1074.50px;height:2.00px;background:#1c1c1c;"></div>
<div style="left:55.50px;top:538.32px;width:1074.50px;height:2.00px;background:#1c1c1c;"></div>
<div style="left:55.50px;top:580.75px;width:1074.50px;height:2.00px;background:#1c1c1c;"></div>
<div style="left:55.50px;top:623.18px;width:1074.50px;height:2.00px;background:#1c1c1c;"></div>
<div style="left:55.50px;top:665.61px;width:1074.50px;height:2.00px;background:#1c1c1c;"></div>
<div style="left:131.25px;top:369.60px;width:2.00px;height:297.01px;background:#1c1c1c;"></div>
<div style="left:208.00px;top:369.60px;width:2.00px;height:297.01px;background:#1c1c1c;"></div>
<div style="left:284.75px;top:369.60px;width:2.00px;height:297.01px;background:#1c1c1c;"></div>
<div style="left:361.50px;top:369.60px;width:2.00px;height:297.01px;background:#1c1c1c;"></div>
<div style="left:438.25px;top:369.60px;width:2.00px;height:297.01px;background:#1c1c1c;"></div>
<div style="left:515.00px;top:369.60px;width:2.00px;height:297.01px;background:#1c1c1c;"></div>
<div style="left:668.50px;top:369.60px;width:2.00px;height:297.01px;background:#1c1c1c;"></div>
<div style="left:745.25px;top:369.60px;width:2.00px;height:297.01px;background:#1c1c1c;"></div>
<div style="left:822.00px;top:369.60px;width:2.00px;height:297.01px;background:#1c1c1c;"></div>
<div style="left:898.75px;top:369.60px;width:2.00px;height:297.01px;background:#1c1c1c;"></div>
<div style="left:975.50px;top:369.60px;width:2.00px;height:297.01px;background:#1c1c1c;"></div>
<div style="left:1052.25px;top:369.60px;width:2.00px;height:297.01px;background:#1c1c1c;"></div>
<div style="left:590.75px;top:369.60px;width:4.20px;height:297.01px;background:#375623;"></div>
<div style="left:55.00px;top:369.60px;width:2.00px;height:297.01px;background:#c0504d;"></div>
<div style="left:1128.40px;top:369.60px;width:1.40px;height:297.01px;background:#333;"></div>
<div style="left:1131.00px;top:369.60px;width:1.40px;height:297.01px;background:#555;"></div>
<div style="left:55.50px;top:667.81px;width:1074.50px;height:1.20px;background:#8a93a8;"></div>
<div style="left:1153.00px;top:369.60px;width:75.00px;height:42.43px;background:#bdeefb;"></div>
<div class="t" style="top:376.82px;line-height:31px;font-size:25px;color:#1a1a1a;left:1183.55px;-webkit-text-stroke:0.3px;">0</div>
<div style="left:1228.00px;top:369.60px;width:78.00px;height:42.43px;background:#93dff1;"></div>
<div class="t" style="top:376.82px;line-height:31px;font-size:25px;color:#1a1a1a;left:1253.09px;-webkit-text-stroke:0.3px;">24</div>
<div style="left:1306.00px;top:369.60px;width:78.40px;height:42.43px;background:#94d1e3;"></div>
<div class="t" style="top:376.82px;line-height:31px;font-size:25px;color:#1a1a1a;left:1331.29px;-webkit-text-stroke:0.3px;">24</div>
<div style="left:1153.00px;top:412.03px;width:75.00px;height:42.43px;background:#bdeefb;"></div>
<div class="t" style="top:419.25px;line-height:31px;font-size:25px;color:#1a1a1a;left:1183.55px;-webkit-text-stroke:0.3px;">5</div>
<div style="left:1228.00px;top:412.03px;width:78.00px;height:42.43px;background:#93dff1;"></div>
<div class="t" style="top:419.25px;line-height:31px;font-size:25px;color:#1a1a1a;left:1253.09px;-webkit-text-stroke:0.3px;">58</div>
<div style="left:1306.00px;top:412.03px;width:78.40px;height:42.43px;background:#94d1e3;"></div>
<div class="t" style="top:419.25px;line-height:31px;font-size:25px;color:#1a1a1a;left:1324.34px;-webkit-text-stroke:0.3px;">130</div>
<div style="left:1153.00px;top:454.46px;width:75.00px;height:42.43px;background:#bdeefb;"></div>
<div class="t" style="top:461.68px;line-height:31px;font-size:25px;color:#1a1a1a;left:1183.55px;-webkit-text-stroke:0.3px;">0</div>
<div style="left:1228.00px;top:454.46px;width:78.00px;height:42.43px;background:#93dff1;"></div>
<div class="t" style="top:461.68px;line-height:31px;font-size:25px;color:#1a1a1a;left:1253.09px;-webkit-text-stroke:0.3px;">80</div>
<div style="left:1306.00px;top:454.46px;width:78.40px;height:42.43px;background:#94d1e3;"></div>
<div class="t" style="top:461.68px;line-height:31px;font-size:25px;color:#1a1a1a;left:1324.34px;-webkit-text-stroke:0.3px;">144</div>
<div style="left:1153.00px;top:496.89px;width:75.00px;height:42.43px;background:#bdeefb;"></div>
<div class="t" style="top:504.11px;line-height:31px;font-size:25px;color:#1a1a1a;left:1183.55px;-webkit-text-stroke:0.3px;">0</div>
<div style="left:1228.00px;top:496.89px;width:78.00px;height:42.43px;background:#93dff1;"></div>
<div class="t" style="top:504.11px;line-height:31px;font-size:25px;color:#1a1a1a;left:1253.09px;-webkit-text-stroke:0.3px;">48</div>
<div style="left:1306.00px;top:496.89px;width:78.40px;height:42.43px;background:#94d1e3;"></div>
<div class="t" style="top:504.11px;line-height:31px;font-size:25px;color:#1a1a1a;left:1324.34px;-webkit-text-stroke:0.3px;">128</div>
<div style="left:1153.00px;top:539.32px;width:75.00px;height:42.43px;background:#bdeefb;"></div>
<div class="t" style="top:546.54px;line-height:31px;font-size:25px;color:#1a1a1a;left:1183.55px;-webkit-text-stroke:0.3px;">0</div>
<div style="left:1228.00px;top:539.32px;width:78.00px;height:42.43px;background:#93dff1;"></div>
<div class="t" style="top:546.54px;line-height:31px;font-size:25px;color:#1a1a1a;left:1253.09px;-webkit-text-stroke:0.3px;">32</div>
<div style="left:1306.00px;top:539.32px;width:78.40px;height:42.43px;background:#94d1e3;"></div>
<div class="t" style="top:546.54px;line-height:31px;font-size:25px;color:#1a1a1a;left:1324.34px;-webkit-text-stroke:0.3px;">104</div>
<div style="left:1153.00px;top:581.75px;width:75.00px;height:42.43px;background:#bdeefb;"></div>
<div class="t" style="top:588.97px;line-height:31px;font-size:25px;color:#1a1a1a;left:1183.55px;-webkit-text-stroke:0.3px;">0</div>
<div style="left:1228.00px;top:581.75px;width:78.00px;height:42.43px;background:#93dff1;"></div>
<div class="t" style="top:588.97px;line-height:31px;font-size:25px;color:#1a1a1a;left:1253.09px;-webkit-text-stroke:0.3px;">80</div>
<div style="left:1306.00px;top:581.75px;width:78.40px;height:42.43px;background:#94d1e3;"></div>
<div class="t" style="top:588.97px;line-height:31px;font-size:25px;color:#1a1a1a;left:1324.34px;-webkit-text-stroke:0.3px;">128</div>
<div style="left:1153.00px;top:624.18px;width:75.00px;height:42.43px;background:#bdeefb;"></div>
<div class="t" style="top:631.39px;line-height:31px;font-size:25px;color:#1a1a1a;left:1183.55px;-webkit-text-stroke:0.3px;">0</div>
<div style="left:1228.00px;top:624.18px;width:78.00px;height:42.43px;background:#93dff1;"></div>
<div class="t" style="top:631.39px;line-height:31px;font-size:25px;color:#1a1a1a;left:1253.09px;-webkit-text-stroke:0.3px;">48</div>
<div style="left:1306.00px;top:624.18px;width:78.40px;height:42.43px;background:#94d1e3;"></div>
<div class="t" style="top:631.39px;line-height:31px;font-size:25px;color:#1a1a1a;left:1324.34px;-webkit-text-stroke:0.3px;">104</div>
<div style="left:1406.00px;top:369.60px;width:132.00px;height:42.43px;background:#fff1d0;"></div>
<div style="left:1538.00px;top:369.60px;width:202.30px;height:42.43px;background:#fff1d0;"></div>
<div class="t" style="top:368.62px;line-height:42px;font-size:33.3px;color:#2e2e2e;left:1422.00px;transform:scaleX(0.7520);transform-origin:0 50%;">$</div>
<div class="t" style="top:368.62px;line-height:42px;font-size:33.3px;color:#2e2e2e;left:1476.76px;transform:scaleX(0.7520);transform-origin:0 50%;">1.00</div>
<div class="t" style="top:368.62px;line-height:42px;font-size:33.3px;color:#2e2e2e;left:1555.30px;transform:scaleX(0.7520);transform-origin:0 50%;">$</div>
<div class="t" style="top:368.62px;line-height:42px;font-size:33.3px;color:#2e2e2e;left:1665.64px;transform:scaleX(0.7520);transform-origin:0 50%;">32.00</div>
<div style="left:1406.00px;top:412.03px;width:132.00px;height:42.43px;background:#fff1d0;"></div>
<div style="left:1538.00px;top:412.03px;width:202.30px;height:42.43px;background:#fff1d0;"></div>
<div class="t" style="top:411.05px;line-height:42px;font-size:33.3px;color:#2e2e2e;left:1422.00px;transform:scaleX(0.7520);transform-origin:0 50%;">$</div>
<div class="t" style="top:411.05px;line-height:42px;font-size:33.3px;color:#2e2e2e;left:1476.76px;transform:scaleX(0.7520);transform-origin:0 50%;">1.00</div>
<div class="t" style="top:411.05px;line-height:42px;font-size:33.3px;color:#2e2e2e;left:1555.30px;transform:scaleX(0.7520);transform-origin:0 50%;">$</div>
<div class="t" style="top:411.05px;line-height:42px;font-size:33.3px;color:#2e2e2e;left:1651.71px;transform:scaleX(0.7520);transform-origin:0 50%;">156.50</div>
<div style="left:1406.00px;top:454.46px;width:132.00px;height:42.43px;background:#fff1d0;"></div>
<div style="left:1538.00px;top:454.46px;width:202.30px;height:42.43px;background:#fff1d0;"></div>
<div class="t" style="top:453.48px;line-height:42px;font-size:33.3px;color:#2e2e2e;left:1422.00px;transform:scaleX(0.7520);transform-origin:0 50%;">$</div>
<div class="t" style="top:453.48px;line-height:42px;font-size:33.3px;color:#2e2e2e;left:1476.76px;transform:scaleX(0.7520);transform-origin:0 50%;">1.00</div>
<div class="t" style="top:453.48px;line-height:42px;font-size:33.3px;color:#2e2e2e;left:1555.30px;transform:scaleX(0.7520);transform-origin:0 50%;">$</div>
<div class="t" style="top:453.48px;line-height:42px;font-size:33.3px;color:#2e2e2e;left:1651.71px;transform:scaleX(0.7520);transform-origin:0 50%;">166.00</div>
<div style="left:1406.00px;top:496.89px;width:132.00px;height:42.43px;background:#fff1d0;"></div>
<div style="left:1538.00px;top:496.89px;width:202.30px;height:42.43px;background:#fff1d0;"></div>
<div class="t" style="top:495.90px;line-height:42px;font-size:33.3px;color:#2e2e2e;left:1422.00px;transform:scaleX(0.7520);transform-origin:0 50%;">$</div>
<div class="t" style="top:495.90px;line-height:42px;font-size:33.3px;color:#2e2e2e;left:1476.76px;transform:scaleX(0.7520);transform-origin:0 50%;">1.00</div>
<div class="t" style="top:495.90px;line-height:42px;font-size:33.3px;color:#2e2e2e;left:1555.30px;transform:scaleX(0.7520);transform-origin:0 50%;">$</div>
<div class="t" style="top:495.90px;line-height:42px;font-size:33.3px;color:#2e2e2e;left:1651.71px;transform:scaleX(0.7520);transform-origin:0 50%;">142.00</div>
<div style="left:1406.00px;top:539.32px;width:132.00px;height:42.43px;background:#fff1d0;"></div>
<div style="left:1538.00px;top:539.32px;width:202.30px;height:42.43px;background:#fff1d0;"></div>
<div style="left:1406.00px;top:581.75px;width:132.00px;height:42.43px;background:#fff1d0;"></div>
<div style="left:1538.00px;top:581.75px;width:202.30px;height:42.43px;background:#fff1d0;"></div>
<div class="t" style="top:580.76px;line-height:42px;font-size:33.3px;color:#2e2e2e;left:1422.00px;transform:scaleX(0.7520);transform-origin:0 50%;">$</div>
<div class="t" style="top:580.76px;line-height:42px;font-size:33.3px;color:#2e2e2e;left:1476.76px;transform:scaleX(0.7520);transform-origin:0 50%;">1.00</div>
<div class="t" style="top:580.76px;line-height:42px;font-size:33.3px;color:#2e2e2e;left:1555.30px;transform:scaleX(0.7520);transform-origin:0 50%;">$</div>
<div class="t" style="top:580.76px;line-height:42px;font-size:33.3px;color:#2e2e2e;left:1651.71px;transform:scaleX(0.7520);transform-origin:0 50%;">150.00</div>
<div style="left:1406.00px;top:624.18px;width:132.00px;height:42.43px;background:#fff1d0;"></div>
<div style="left:1538.00px;top:624.18px;width:202.30px;height:42.43px;background:#fff1d0;"></div>
<div class="t" style="top:623.19px;line-height:42px;font-size:33.3px;color:#2e2e2e;left:1422.00px;transform:scaleX(0.7520);transform-origin:0 50%;">$</div>
<div class="t" style="top:623.19px;line-height:42px;font-size:33.3px;color:#2e2e2e;left:1476.76px;transform:scaleX(0.7520);transform-origin:0 50%;">1.00</div>
<div class="t" style="top:623.19px;line-height:42px;font-size:33.3px;color:#2e2e2e;left:1555.30px;transform:scaleX(0.7520);transform-origin:0 50%;">$</div>
<div class="t" style="top:623.19px;line-height:42px;font-size:33.3px;color:#2e2e2e;left:1665.64px;transform:scaleX(0.7520);transform-origin:0 50%;">96.00</div>
<div style="left:1765.00px;top:369.60px;width:78.00px;height:42.43px;background:#cce8f5;"></div>
<div class="t" style="top:376.82px;line-height:31px;font-size:25px;color:#1a1a1a;left:1797.05px;-webkit-text-stroke:0.3px;">3</div>
<div style="left:1843.00px;top:369.60px;width:78.00px;height:42.43px;background:#cce8f5;"></div>
<div class="t" style="top:376.82px;line-height:31px;font-size:25px;color:#1a1a1a;left:1875.05px;-webkit-text-stroke:0.3px;">0</div>
<div style="left:1921.00px;top:369.60px;width:79.00px;height:42.43px;background:#cce8f5;"></div>
<div class="t" style="top:376.82px;line-height:31px;font-size:25px;color:#1a1a1a;left:1953.55px;-webkit-text-stroke:0.3px;">0</div>
<div style="left:2000.00px;top:369.60px;width:78.00px;height:42.43px;background:#cce8f5;"></div>
<div class="t" style="top:376.82px;line-height:31px;font-size:25px;color:#1a1a1a;left:2032.05px;-webkit-text-stroke:0.3px;">0</div>
<div style="left:2078.00px;top:369.60px;width:78.50px;height:42.43px;background:#cce8f5;"></div>
<div class="t" style="top:376.82px;line-height:31px;font-size:25px;color:#1a1a1a;left:2110.30px;-webkit-text-stroke:0.3px;">0</div>
<div style="left:1765.00px;top:412.03px;width:78.00px;height:42.43px;background:#cce8f5;"></div>
<div class="t" style="top:419.25px;line-height:31px;font-size:25px;color:#1a1a1a;left:1797.05px;-webkit-text-stroke:0.3px;">0</div>
<div style="left:1843.00px;top:412.03px;width:78.00px;height:42.43px;background:#cce8f5;"></div>
<div class="t" style="top:419.25px;line-height:31px;font-size:25px;color:#1a1a1a;left:1875.05px;-webkit-text-stroke:0.3px;">0</div>
<div style="left:1921.00px;top:412.03px;width:79.00px;height:42.43px;background:#cce8f5;"></div>
<div class="t" style="top:419.25px;line-height:31px;font-size:25px;color:#1a1a1a;left:1953.55px;-webkit-text-stroke:0.3px;">0</div>
<div style="left:2000.00px;top:412.03px;width:78.00px;height:42.43px;background:#cce8f5;"></div>
<div class="t" style="top:419.25px;line-height:31px;font-size:25px;color:#1a1a1a;left:2032.05px;-webkit-text-stroke:0.3px;">0</div>
<div style="left:2078.00px;top:412.03px;width:78.50px;height:42.43px;background:#cce8f5;"></div>
<div class="t" style="top:419.25px;line-height:31px;font-size:25px;color:#1a1a1a;left:2110.30px;-webkit-text-stroke:0.3px;">0</div>
<div style="left:1765.00px;top:454.46px;width:78.00px;height:42.43px;background:#cce8f5;"></div>
<div class="t" style="top:461.68px;line-height:31px;font-size:25px;color:#1a1a1a;left:1797.05px;-webkit-text-stroke:0.3px;">0</div>
<div style="left:1843.00px;top:454.46px;width:78.00px;height:42.43px;background:#cce8f5;"></div>
<div class="t" style="top:461.68px;line-height:31px;font-size:25px;color:#1a1a1a;left:1875.05px;-webkit-text-stroke:0.3px;">0</div>
<div style="left:1921.00px;top:454.46px;width:79.00px;height:42.43px;background:#cce8f5;"></div>
<div class="t" style="top:461.68px;line-height:31px;font-size:25px;color:#1a1a1a;left:1946.59px;-webkit-text-stroke:0.3px;">17</div>
<div style="left:2000.00px;top:454.46px;width:78.00px;height:42.43px;background:#cce8f5;"></div>
<div class="t" style="top:461.68px;line-height:31px;font-size:25px;color:#1a1a1a;left:2032.05px;-webkit-text-stroke:0.3px;">0</div>
<div style="left:2078.00px;top:454.46px;width:78.50px;height:42.43px;background:#cce8f5;"></div>
<div class="t" style="top:461.68px;line-height:31px;font-size:25px;color:#1a1a1a;left:2110.30px;-webkit-text-stroke:0.3px;">0</div>
<div style="left:1765.00px;top:496.89px;width:78.00px;height:42.43px;background:#cce8f5;"></div>
<div class="t" style="top:504.11px;line-height:31px;font-size:25px;color:#1a1a1a;left:1797.05px;-webkit-text-stroke:0.3px;">0</div>
<div style="left:1843.00px;top:496.89px;width:78.00px;height:42.43px;background:#cce8f5;"></div>
<div class="t" style="top:504.11px;line-height:31px;font-size:25px;color:#1a1a1a;left:1875.05px;-webkit-text-stroke:0.3px;">0</div>
<div style="left:1921.00px;top:496.89px;width:79.00px;height:42.43px;background:#cce8f5;"></div>
<div class="t" style="top:504.11px;line-height:31px;font-size:25px;color:#1a1a1a;left:1953.55px;-webkit-text-stroke:0.3px;">0</div>
<div style="left:2000.00px;top:496.89px;width:78.00px;height:42.43px;background:#cce8f5;"></div>
<div class="t" style="top:504.11px;line-height:31px;font-size:25px;color:#1a1a1a;left:2025.09px;-webkit-text-stroke:0.3px;">16</div>
<div style="left:2078.00px;top:496.89px;width:78.50px;height:42.43px;background:#cce8f5;"></div>
<div class="t" style="top:504.11px;line-height:31px;font-size:25px;color:#1a1a1a;left:2110.30px;-webkit-text-stroke:0.3px;">0</div>
<div style="left:1765.00px;top:539.32px;width:78.00px;height:42.43px;background:#cce8f5;"></div>
<div class="t" style="top:546.54px;line-height:31px;font-size:25px;color:#1a1a1a;left:1797.05px;-webkit-text-stroke:0.3px;">0</div>
<div style="left:1843.00px;top:539.32px;width:78.00px;height:42.43px;background:#cce8f5;"></div>
<div class="t" style="top:546.54px;line-height:31px;font-size:25px;color:#1a1a1a;left:1875.05px;-webkit-text-stroke:0.3px;">0</div>
<div style="left:1921.00px;top:539.32px;width:79.00px;height:42.43px;background:#cce8f5;"></div>
<div class="t" style="top:546.54px;line-height:31px;font-size:25px;color:#1a1a1a;left:1953.55px;-webkit-text-stroke:0.3px;">0</div>
<div style="left:2000.00px;top:539.32px;width:78.00px;height:42.43px;background:#cce8f5;"></div>
<div class="t" style="top:546.54px;line-height:31px;font-size:25px;color:#1a1a1a;left:2032.05px;-webkit-text-stroke:0.3px;">0</div>
<div style="left:2078.00px;top:539.32px;width:78.50px;height:42.43px;background:#cce8f5;"></div>
<div class="t" style="top:546.54px;line-height:31px;font-size:25px;color:#1a1a1a;left:2110.30px;-webkit-text-stroke:0.3px;">0</div>
<div style="left:1765.00px;top:581.75px;width:78.00px;height:42.43px;background:#cce8f5;"></div>
<div class="t" style="top:588.97px;line-height:31px;font-size:25px;color:#1a1a1a;left:1797.05px;-webkit-text-stroke:0.3px;">0</div>
<div style="left:1843.00px;top:581.75px;width:78.00px;height:42.43px;background:#cce8f5;"></div>
<div class="t" style="top:588.97px;line-height:31px;font-size:25px;color:#1a1a1a;left:1875.05px;-webkit-text-stroke:0.3px;">0</div>
<div style="left:1921.00px;top:581.75px;width:79.00px;height:42.43px;background:#cce8f5;"></div>
<div class="t" style="top:588.97px;line-height:31px;font-size:25px;color:#1a1a1a;left:1953.55px;-webkit-text-stroke:0.3px;">0</div>
<div style="left:2000.00px;top:581.75px;width:78.00px;height:42.43px;background:#cce8f5;"></div>
<div class="t" style="top:588.97px;line-height:31px;font-size:25px;color:#1a1a1a;left:2032.05px;-webkit-text-stroke:0.3px;">0</div>
<div style="left:2078.00px;top:581.75px;width:78.50px;height:42.43px;background:#cce8f5;"></div>
<div class="t" style="top:588.97px;line-height:31px;font-size:25px;color:#1a1a1a;left:2103.34px;-webkit-text-stroke:0.3px;">16</div>
<div style="left:1765.00px;top:624.18px;width:78.00px;height:42.43px;background:#cce8f5;"></div>
<div class="t" style="top:631.39px;line-height:31px;font-size:25px;color:#1a1a1a;left:1797.05px;-webkit-text-stroke:0.3px;">3</div>
<div style="left:1843.00px;top:624.18px;width:78.00px;height:42.43px;background:#cce8f5;"></div>
<div class="t" style="top:631.39px;line-height:31px;font-size:25px;color:#1a1a1a;left:1875.05px;-webkit-text-stroke:0.3px;">6</div>
<div style="left:1921.00px;top:624.18px;width:79.00px;height:42.43px;background:#cce8f5;"></div>
<div class="t" style="top:631.39px;line-height:31px;font-size:25px;color:#1a1a1a;left:1953.55px;-webkit-text-stroke:0.3px;">0</div>
<div style="left:2000.00px;top:624.18px;width:78.00px;height:42.43px;background:#cce8f5;"></div>
<div class="t" style="top:631.39px;line-height:31px;font-size:25px;color:#1a1a1a;left:2032.05px;-webkit-text-stroke:0.3px;">0</div>
<div style="left:2078.00px;top:624.18px;width:78.50px;height:42.43px;background:#cce8f5;"></div>
<div class="t" style="top:631.39px;line-height:31px;font-size:25px;color:#1a1a1a;left:2110.30px;-webkit-text-stroke:0.3px;">0</div>
<div style="left:2180.00px;top:369.60px;width:820.00px;height:297.01px;background:#cce8f5;"></div>
<div style="left:1153.00px;top:410.63px;width:231.40px;height:2.80px;background:#f1fbfe;"></div>
<div style="left:1406.00px;top:410.73px;width:334.30px;height:2.60px;background:#fff8e6;"></div>
<div style="left:1765.00px;top:410.83px;width:391.50px;height:2.40px;background:#eef8fc;"></div>
<div style="left:2182.00px;top:410.43px;width:820.00px;height:3.20px;background:repeating-linear-gradient(90deg,#fff 0 18px,rgba(255,255,255,.45) 18px 20.5px,#fff 20.5px 26px,rgba(255,255,255,.45) 26px 29.5px);"></div>
<div style="left:1153.00px;top:453.06px;width:231.40px;height:2.80px;background:#f1fbfe;"></div>
<div style="left:1406.00px;top:453.16px;width:334.30px;height:2.60px;background:#fff8e6;"></div>
<div style="left:1765.00px;top:453.26px;width:391.50px;height:2.40px;background:#eef8fc;"></div>
<div style="left:2182.00px;top:452.86px;width:820.00px;height:3.20px;background:repeating-linear-gradient(90deg,#fff 0 18px,rgba(255,255,255,.45) 18px 20.5px,#fff 20.5px 26px,rgba(255,255,255,.45) 26px 29.5px);"></div>
<div style="left:1153.00px;top:495.49px;width:231.40px;height:2.80px;background:#f1fbfe;"></div>
<div style="left:1406.00px;top:495.59px;width:334.30px;height:2.60px;background:#fff8e6;"></div>
<div style="left:1765.00px;top:495.69px;width:391.50px;height:2.40px;background:#eef8fc;"></div>
<div style="left:2182.00px;top:495.29px;width:820.00px;height:3.20px;background:repeating-linear-gradient(90deg,#fff 0 18px,rgba(255,255,255,.45) 18px 20.5px,#fff 20.5px 26px,rgba(255,255,255,.45) 26px 29.5px);"></div>
<div style="left:1153.00px;top:537.92px;width:231.40px;height:2.80px;background:#f1fbfe;"></div>
<div style="left:1406.00px;top:538.02px;width:334.30px;height:2.60px;background:#fff8e6;"></div>
<div style="left:1765.00px;top:538.12px;width:391.50px;height:2.40px;background:#eef8fc;"></div>
<div style="left:2182.00px;top:537.72px;width:820.00px;height:3.20px;background:repeating-linear-gradient(90deg,#fff 0 18px,rgba(255,255,255,.45) 18px 20.5px,#fff 20.5px 26px,rgba(255,255,255,.45) 26px 29.5px);"></div>
<div style="left:1153.00px;top:580.35px;width:231.40px;height:2.80px;background:#f1fbfe;"></div>
<div style="left:1406.00px;top:580.45px;width:334.30px;height:2.60px;background:#fff8e6;"></div>
<div style="left:1765.00px;top:580.55px;width:391.50px;height:2.40px;background:#eef8fc;"></div>
<div style="left:2182.00px;top:580.15px;width:820.00px;height:3.20px;background:repeating-linear-gradient(90deg,#fff 0 18px,rgba(255,255,255,.45) 18px 20.5px,#fff 20.5px 26px,rgba(255,255,255,.45) 26px 29.5px);"></div>
<div style="left:1153.00px;top:622.78px;width:231.40px;height:2.80px;background:#f1fbfe;"></div>
<div style="left:1406.00px;top:622.88px;width:334.30px;height:2.60px;background:#fff8e6;"></div>
<div style="left:1765.00px;top:622.98px;width:391.50px;height:2.40px;background:#eef8fc;"></div>
<div style="left:2182.00px;top:622.58px;width:820.00px;height:3.20px;background:repeating-linear-gradient(90deg,#fff 0 18px,rgba(255,255,255,.45) 18px 20.5px,#fff 20.5px 26px,rgba(255,255,255,.45) 26px 29.5px);"></div>
<div style="left:2182.00px;top:665.01px;width:820.00px;height:1.60px;background:repeating-linear-gradient(90deg,#cce8f5 0 8px,#fff 8px 44px);"></div>
<div style="left:1226.70px;top:369.60px;width:2.60px;height:297.01px;background:#e4f6fc;"></div>
<div style="left:1304.70px;top:369.60px;width:2.60px;height:297.01px;background:#e4f6fc;"></div>
<div style="left:1536.20px;top:369.60px;width:2.60px;height:297.01px;background:#fff8e6;"></div>
<div style="left:1841.90px;top:369.60px;width:2.20px;height:297.01px;background:#e6f4fb;"></div>
<div style="left:1919.90px;top:369.60px;width:2.20px;height:297.01px;background:#e6f4fb;"></div>
<div style="left:1998.90px;top:369.60px;width:2.20px;height:297.01px;background:#e6f4fb;"></div>
<div style="left:2076.90px;top:369.60px;width:2.20px;height:297.01px;background:#e6f4fb;"></div>
<div style="left:2179.20px;top:371.60px;width:2.00px;height:295.01px;background:repeating-linear-gradient(180deg,#2b2b2b 0 20px,transparent 20px 23px,#2b2b2b 23px 27px,transparent 27px 30px);"></div>
<svg style="left:2149.00px;top:659.00px;" width="8" height="8" viewBox="0 0 8 8"><path d="M7 1v6H1" fill="none" stroke="#2f3ea8" stroke-width="2.4"/></svg>
<div style="left:56.00px;top:710.60px;width:1074.00px;height:233.86px;background:#ffe699;"></div>
<div class="t" style="top:754.62px;line-height:31px;font-size:24.5px;color:#1f1f1f;left:87.05px;-webkit-text-stroke:0.3px;">0</div>
<div class="t" style="top:754.62px;line-height:31px;font-size:24.5px;color:#1f1f1f;left:163.80px;-webkit-text-stroke:0.3px;">0</div>
<div class="t" style="top:754.62px;line-height:31px;font-size:24.5px;color:#1f1f1f;left:240.55px;-webkit-text-stroke:0.3px;">0</div>
<div class="t" style="top:754.62px;line-height:31px;font-size:24.5px;color:#1f1f1f;left:317.30px;-webkit-text-stroke:0.3px;">0</div>
<div class="t" style="top:754.62px;line-height:31px;font-size:24.5px;color:#1f1f1f;left:394.05px;-webkit-text-stroke:0.3px;">0</div>
<div class="t" style="top:754.62px;line-height:31px;font-size:24.5px;color:#1f1f1f;left:470.80px;-webkit-text-stroke:0.3px;">0</div>
<div class="t" style="top:754.62px;line-height:31px;font-size:24.5px;color:#1f1f1f;left:547.55px;-webkit-text-stroke:0.3px;">0</div>
<div class="t" style="top:754.62px;line-height:31px;font-size:24.5px;color:#1f1f1f;left:624.30px;-webkit-text-stroke:0.3px;">0</div>
<div class="t" style="top:754.62px;line-height:31px;font-size:24.5px;color:#1f1f1f;left:701.05px;-webkit-text-stroke:0.3px;">0</div>
<div class="t" style="top:754.62px;line-height:31px;font-size:24.5px;color:#1f1f1f;left:777.80px;-webkit-text-stroke:0.3px;">0</div>
<div class="t" style="top:754.62px;line-height:31px;font-size:24.5px;color:#1f1f1f;left:854.55px;-webkit-text-stroke:0.3px;">0</div>
<div class="t" style="top:754.62px;line-height:31px;font-size:24.5px;color:#1f1f1f;left:931.30px;-webkit-text-stroke:0.3px;">0</div>
<div class="t" style="top:754.62px;line-height:31px;font-size:24.5px;color:#1f1f1f;left:1008.05px;-webkit-text-stroke:0.3px;">0</div>
<div class="t" style="top:754.62px;line-height:31px;font-size:24.5px;color:#1f1f1f;left:1084.80px;-webkit-text-stroke:0.3px;">0</div>
<div class="t" style="top:793.82px;line-height:31px;font-size:24.5px;color:#1f1f1f;left:87.05px;-webkit-text-stroke:0.3px;">1</div>
<div class="t" style="top:793.82px;line-height:31px;font-size:24.5px;color:#1f1f1f;left:163.80px;-webkit-text-stroke:0.3px;">2</div>
<div class="t" style="top:793.82px;line-height:31px;font-size:24.5px;color:#1f1f1f;left:240.55px;-webkit-text-stroke:0.3px;">2</div>
<div class="t" style="top:793.82px;line-height:31px;font-size:24.5px;color:#1f1f1f;left:317.30px;-webkit-text-stroke:0.3px;">1</div>
<div class="t" style="top:793.82px;line-height:31px;font-size:24.5px;color:#1f1f1f;left:394.05px;-webkit-text-stroke:0.3px;">1</div>
<div class="t" style="top:793.82px;line-height:31px;font-size:24.5px;color:#1f1f1f;left:470.80px;-webkit-text-stroke:0.3px;">1</div>
<div class="t" style="top:793.82px;line-height:31px;font-size:24.5px;color:#1f1f1f;left:547.55px;-webkit-text-stroke:0.3px;">0</div>
<div class="t" style="top:793.82px;line-height:31px;font-size:24.5px;color:#1f1f1f;left:624.30px;-webkit-text-stroke:0.3px;">0</div>
<div class="t" style="top:793.82px;line-height:31px;font-size:24.5px;color:#1f1f1f;left:701.05px;-webkit-text-stroke:0.3px;">0</div>
<div class="t" style="top:793.82px;line-height:31px;font-size:24.5px;color:#1f1f1f;left:777.80px;-webkit-text-stroke:0.3px;">0</div>
<div class="t" style="top:793.82px;line-height:31px;font-size:24.5px;color:#1f1f1f;left:854.55px;-webkit-text-stroke:0.3px;">0</div>
<div class="t" style="top:793.82px;line-height:31px;font-size:24.5px;color:#1f1f1f;left:931.30px;-webkit-text-stroke:0.3px;">0</div>
<div class="t" style="top:793.82px;line-height:31px;font-size:24.5px;color:#1f1f1f;left:1008.05px;-webkit-text-stroke:0.3px;">0</div>
<div class="t" style="top:793.82px;line-height:31px;font-size:24.5px;color:#1f1f1f;left:1084.80px;-webkit-text-stroke:0.3px;">0</div>
<div class="t" style="top:833.03px;line-height:31px;font-size:24.5px;color:#1f1f1f;left:87.05px;-webkit-text-stroke:0.3px;">0</div>
<div class="t" style="top:833.03px;line-height:31px;font-size:24.5px;color:#1f1f1f;left:163.80px;-webkit-text-stroke:0.3px;">0</div>
<div class="t" style="top:833.03px;line-height:31px;font-size:24.5px;color:#1f1f1f;left:240.55px;-webkit-text-stroke:0.3px;">0</div>
<div class="t" style="top:833.03px;line-height:31px;font-size:24.5px;color:#1f1f1f;left:317.30px;-webkit-text-stroke:0.3px;">0</div>
<div class="t" style="top:833.03px;line-height:31px;font-size:24.5px;color:#1f1f1f;left:394.05px;-webkit-text-stroke:0.3px;">0</div>
<div class="t" style="top:833.03px;line-height:31px;font-size:24.5px;color:#1f1f1f;left:470.80px;-webkit-text-stroke:0.3px;">0</div>
<div class="t" style="top:833.03px;line-height:31px;font-size:24.5px;color:#1f1f1f;left:547.55px;-webkit-text-stroke:0.3px;">0</div>
<div class="t" style="top:833.03px;line-height:31px;font-size:24.5px;color:#1f1f1f;left:624.30px;-webkit-text-stroke:0.3px;">0</div>
<div class="t" style="top:833.03px;line-height:31px;font-size:24.5px;color:#1f1f1f;left:701.05px;-webkit-text-stroke:0.3px;">0</div>
<div class="t" style="top:833.03px;line-height:31px;font-size:24.5px;color:#1f1f1f;left:777.80px;-webkit-text-stroke:0.3px;">0</div>
<div class="t" style="top:833.03px;line-height:31px;font-size:24.5px;color:#1f1f1f;left:854.55px;-webkit-text-stroke:0.3px;">0</div>
<div class="t" style="top:833.03px;line-height:31px;font-size:24.5px;color:#1f1f1f;left:931.30px;-webkit-text-stroke:0.3px;">0</div>
<div class="t" style="top:833.03px;line-height:31px;font-size:24.5px;color:#1f1f1f;left:1008.05px;-webkit-text-stroke:0.3px;">0</div>
<div class="t" style="top:833.03px;line-height:31px;font-size:24.5px;color:#1f1f1f;left:1084.80px;-webkit-text-stroke:0.3px;">0</div>
<div class="t" style="top:872.24px;line-height:31px;font-size:24.5px;color:#1f1f1f;left:87.05px;-webkit-text-stroke:0.3px;">0</div>
<div class="t" style="top:872.24px;line-height:31px;font-size:24.5px;color:#1f1f1f;left:163.80px;-webkit-text-stroke:0.3px;">0</div>
<div class="t" style="top:872.24px;line-height:31px;font-size:24.5px;color:#1f1f1f;left:240.55px;-webkit-text-stroke:0.3px;">0</div>
<div class="t" style="top:872.24px;line-height:31px;font-size:24.5px;color:#1f1f1f;left:317.30px;-webkit-text-stroke:0.3px;">0</div>
<div class="t" style="top:872.24px;line-height:31px;font-size:24.5px;color:#1f1f1f;left:394.05px;-webkit-text-stroke:0.3px;">0</div>
<div class="t" style="top:872.24px;line-height:31px;font-size:24.5px;color:#1f1f1f;left:470.80px;-webkit-text-stroke:0.3px;">0</div>
<div class="t" style="top:872.24px;line-height:31px;font-size:24.5px;color:#1f1f1f;left:547.55px;-webkit-text-stroke:0.3px;">0</div>
<div class="t" style="top:872.24px;line-height:31px;font-size:24.5px;color:#1f1f1f;left:624.30px;-webkit-text-stroke:0.3px;">0</div>
<div class="t" style="top:872.24px;line-height:31px;font-size:24.5px;color:#1f1f1f;left:701.05px;-webkit-text-stroke:0.3px;">0</div>
<div class="t" style="top:872.24px;line-height:31px;font-size:24.5px;color:#1f1f1f;left:777.80px;-webkit-text-stroke:0.3px;">0</div>
<div class="t" style="top:872.24px;line-height:31px;font-size:24.5px;color:#1f1f1f;left:854.55px;-webkit-text-stroke:0.3px;">0</div>
<div class="t" style="top:872.24px;line-height:31px;font-size:24.5px;color:#1f1f1f;left:931.30px;-webkit-text-stroke:0.3px;">0</div>
<div class="t" style="top:872.24px;line-height:31px;font-size:24.5px;color:#1f1f1f;left:1008.05px;-webkit-text-stroke:0.3px;">0</div>
<div class="t" style="top:872.24px;line-height:31px;font-size:24.5px;color:#1f1f1f;left:1084.80px;-webkit-text-stroke:0.3px;">0</div>
<div class="t" style="top:911.45px;line-height:31px;font-size:24.5px;color:#1f1f1f;left:87.05px;-webkit-text-stroke:0.3px;">1</div>
<div class="t" style="top:911.45px;line-height:31px;font-size:24.5px;color:#1f1f1f;left:163.80px;-webkit-text-stroke:0.3px;">2</div>
<div class="t" style="top:911.45px;line-height:31px;font-size:24.5px;color:#1f1f1f;left:240.55px;-webkit-text-stroke:0.3px;">2</div>
<div class="t" style="top:911.45px;line-height:31px;font-size:24.5px;color:#1f1f1f;left:317.30px;-webkit-text-stroke:0.3px;">1</div>
<div class="t" style="top:911.45px;line-height:31px;font-size:24.5px;color:#1f1f1f;left:394.05px;-webkit-text-stroke:0.3px;">1</div>
<div class="t" style="top:911.45px;line-height:31px;font-size:24.5px;color:#1f1f1f;left:470.80px;-webkit-text-stroke:0.3px;">1</div>
<div class="t" style="top:911.45px;line-height:31px;font-size:24.5px;color:#1f1f1f;left:547.55px;-webkit-text-stroke:0.3px;">0</div>
<div class="t" style="top:911.45px;line-height:31px;font-size:24.5px;color:#1f1f1f;left:624.30px;-webkit-text-stroke:0.3px;">0</div>
<div class="t" style="top:911.45px;line-height:31px;font-size:24.5px;color:#1f1f1f;left:701.05px;-webkit-text-stroke:0.3px;">0</div>
<div class="t" style="top:911.45px;line-height:31px;font-size:24.5px;color:#1f1f1f;left:777.80px;-webkit-text-stroke:0.3px;">0</div>
<div class="t" style="top:911.45px;line-height:31px;font-size:24.5px;color:#1f1f1f;left:854.55px;-webkit-text-stroke:0.3px;">0</div>
<div class="t" style="top:911.45px;line-height:31px;font-size:24.5px;color:#1f1f1f;left:931.30px;-webkit-text-stroke:0.3px;">0</div>
<div class="t" style="top:911.45px;line-height:31px;font-size:24.5px;color:#1f1f1f;left:1008.05px;-webkit-text-stroke:0.3px;">0</div>
<div class="t" style="top:911.45px;line-height:31px;font-size:24.5px;color:#1f1f1f;left:1084.80px;-webkit-text-stroke:0.3px;">0</div>
<div style="left:56.00px;top:747.81px;width:1074.00px;height:2.40px;background:#fff7e0;"></div>
<div style="left:56.00px;top:787.02px;width:1074.00px;height:2.40px;background:#fff7e0;"></div>
<div style="left:56.00px;top:826.23px;width:1074.00px;height:2.40px;background:#fff7e0;"></div>
<div style="left:56.00px;top:865.44px;width:1074.00px;height:2.40px;background:#fff7e0;"></div>
<div style="left:56.00px;top:904.65px;width:1074.00px;height:2.40px;background:#fff7e0;"></div>
<div style="left:131.05px;top:749.01px;width:2.40px;height:195.45px;background:#fff7e0;"></div>
<div style="left:207.80px;top:749.01px;width:2.40px;height:195.45px;background:#fff7e0;"></div>
<div style="left:284.55px;top:749.01px;width:2.40px;height:195.45px;background:#fff7e0;"></div>
<div style="left:361.30px;top:749.01px;width:2.40px;height:195.45px;background:#fff7e0;"></div>
<div style="left:438.05px;top:749.01px;width:2.40px;height:195.45px;background:#fff7e0;"></div>
<div style="left:514.80px;top:749.01px;width:2.40px;height:195.45px;background:#fff7e0;"></div>
<div style="left:591.55px;top:749.01px;width:2.40px;height:195.45px;background:#fff7e0;"></div>
<div style="left:668.30px;top:749.01px;width:2.40px;height:195.45px;background:#fff7e0;"></div>
<div style="left:745.05px;top:749.01px;width:2.40px;height:195.45px;background:#fff7e0;"></div>
<div style="left:821.80px;top:749.01px;width:2.40px;height:195.45px;background:#fff7e0;"></div>
<div style="left:898.55px;top:749.01px;width:2.40px;height:195.45px;background:#fff7e0;"></div>
<div style="left:975.30px;top:749.01px;width:2.40px;height:195.45px;background:#fff7e0;"></div>
<div style="left:1052.05px;top:749.01px;width:2.40px;height:195.45px;background:#fff7e0;"></div>
<div style="left:56.00px;top:985.07px;width:1074.00px;height:233.86px;background:#dadff3;"></div>
<div class="t" style="top:1029.09px;line-height:31px;font-size:24.5px;color:#1f1f1f;left:87.05px;-webkit-text-stroke:0.3px;">1</div>
<div class="t" style="top:1029.09px;line-height:31px;font-size:24.5px;color:#1f1f1f;left:163.80px;-webkit-text-stroke:0.3px;">2</div>
<div class="t" style="top:1029.09px;line-height:31px;font-size:24.5px;color:#1f1f1f;left:240.55px;-webkit-text-stroke:0.3px;">2</div>
<div class="t" style="top:1029.09px;line-height:31px;font-size:24.5px;color:#1f1f1f;left:317.30px;-webkit-text-stroke:0.3px;">2</div>
<div class="t" style="top:1029.09px;line-height:31px;font-size:24.5px;color:#1f1f1f;left:394.05px;-webkit-text-stroke:0.3px;">2</div>
<div class="t" style="top:1029.09px;line-height:31px;font-size:24.5px;color:#1f1f1f;left:470.80px;-webkit-text-stroke:0.3px;">0</div>
<div class="t" style="top:1029.09px;line-height:31px;font-size:24.5px;color:#1f1f1f;left:547.55px;-webkit-text-stroke:0.3px;">0</div>
<div class="t" style="top:1029.09px;line-height:31px;font-size:24.5px;color:#1f1f1f;left:624.30px;-webkit-text-stroke:0.3px;">2</div>
<div class="t" style="top:1029.09px;line-height:31px;font-size:24.5px;color:#1f1f1f;left:701.05px;-webkit-text-stroke:0.3px;">2</div>
<div class="t" style="top:1029.09px;line-height:31px;font-size:24.5px;color:#1f1f1f;left:777.80px;-webkit-text-stroke:0.3px;">2</div>
<div class="t" style="top:1029.09px;line-height:31px;font-size:24.5px;color:#1f1f1f;left:854.55px;-webkit-text-stroke:0.3px;">2</div>
<div class="t" style="top:1029.09px;line-height:31px;font-size:24.5px;color:#1f1f1f;left:931.30px;-webkit-text-stroke:0.3px;">3</div>
<div class="t" style="top:1029.09px;line-height:31px;font-size:24.5px;color:#1f1f1f;left:1008.05px;-webkit-text-stroke:0.3px;">3</div>
<div class="t" style="top:1029.09px;line-height:31px;font-size:24.5px;color:#1f1f1f;left:1084.80px;-webkit-text-stroke:0.3px;">2</div>
<div class="t" style="top:1068.30px;line-height:31px;font-size:24.5px;color:#1f1f1f;left:87.05px;-webkit-text-stroke:0.3px;">0</div>
<div class="t" style="top:1068.30px;line-height:31px;font-size:24.5px;color:#1f1f1f;left:163.80px;-webkit-text-stroke:0.3px;">0</div>
<div class="t" style="top:1068.30px;line-height:31px;font-size:24.5px;color:#1f1f1f;left:240.55px;-webkit-text-stroke:0.3px;">0</div>
<div class="t" style="top:1068.30px;line-height:31px;font-size:24.5px;color:#1f1f1f;left:317.30px;-webkit-text-stroke:0.3px;">0</div>
<div class="t" style="top:1068.30px;line-height:31px;font-size:24.5px;color:#1f1f1f;left:394.05px;-webkit-text-stroke:0.3px;">0</div>
<div class="t" style="top:1068.30px;line-height:31px;font-size:24.5px;color:#1f1f1f;left:470.80px;-webkit-text-stroke:0.3px;">0</div>
<div class="t" style="top:1068.30px;line-height:31px;font-size:24.5px;color:#1f1f1f;left:547.55px;-webkit-text-stroke:0.3px;">1</div>
<div class="t" style="top:1068.30px;line-height:31px;font-size:24.5px;color:#1f1f1f;left:624.30px;-webkit-text-stroke:0.3px;">1</div>
<div class="t" style="top:1068.30px;line-height:31px;font-size:24.5px;color:#1f1f1f;left:701.05px;-webkit-text-stroke:0.3px;">0</div>
<div class="t" style="top:1068.30px;line-height:31px;font-size:24.5px;color:#1f1f1f;left:777.80px;-webkit-text-stroke:0.3px;">1</div>
<div class="t" style="top:1068.30px;line-height:31px;font-size:24.5px;color:#1f1f1f;left:854.55px;-webkit-text-stroke:0.3px;">1</div>
<div class="t" style="top:1068.30px;line-height:31px;font-size:24.5px;color:#1f1f1f;left:931.30px;-webkit-text-stroke:0.3px;">1</div>
<div class="t" style="top:1068.30px;line-height:31px;font-size:24.5px;color:#1f1f1f;left:1008.05px;-webkit-text-stroke:0.3px;">1</div>
<div class="t" style="top:1068.30px;line-height:31px;font-size:24.5px;color:#1f1f1f;left:1084.80px;-webkit-text-stroke:0.3px;">1</div>
<div class="t" style="top:1107.51px;line-height:31px;font-size:24.5px;color:#1f1f1f;left:87.05px;-webkit-text-stroke:0.3px;">0</div>
<div class="t" style="top:1107.51px;line-height:31px;font-size:24.5px;color:#1f1f1f;left:163.80px;-webkit-text-stroke:0.3px;">1</div>
<div class="t" style="top:1107.51px;line-height:31px;font-size:24.5px;color:#1f1f1f;left:240.55px;-webkit-text-stroke:0.3px;">1</div>
<div class="t" style="top:1107.51px;line-height:31px;font-size:24.5px;color:#1f1f1f;left:317.30px;-webkit-text-stroke:0.3px;">1</div>
<div class="t" style="top:1107.51px;line-height:31px;font-size:24.5px;color:#1f1f1f;left:394.05px;-webkit-text-stroke:0.3px;">1</div>
<div class="t" style="top:1107.51px;line-height:31px;font-size:24.5px;color:#1f1f1f;left:470.80px;-webkit-text-stroke:0.3px;">0</div>
<div class="t" style="top:1107.51px;line-height:31px;font-size:24.5px;color:#1f1f1f;left:547.55px;-webkit-text-stroke:0.3px;">0</div>
<div class="t" style="top:1107.51px;line-height:31px;font-size:24.5px;color:#1f1f1f;left:624.30px;-webkit-text-stroke:0.3px;">0</div>
<div class="t" style="top:1107.51px;line-height:31px;font-size:24.5px;color:#1f1f1f;left:701.05px;-webkit-text-stroke:0.3px;">0</div>
<div class="t" style="top:1107.51px;line-height:31px;font-size:24.5px;color:#1f1f1f;left:777.80px;-webkit-text-stroke:0.3px;">1</div>
<div class="t" style="top:1107.51px;line-height:31px;font-size:24.5px;color:#1f1f1f;left:854.55px;-webkit-text-stroke:0.3px;">1</div>
<div class="t" style="top:1107.51px;line-height:31px;font-size:24.5px;color:#1f1f1f;left:931.30px;-webkit-text-stroke:0.3px;">1</div>
<div class="t" style="top:1107.51px;line-height:31px;font-size:24.5px;color:#1f1f1f;left:1008.05px;-webkit-text-stroke:0.3px;">1</div>
<div class="t" style="top:1107.51px;line-height:31px;font-size:24.5px;color:#1f1f1f;left:1084.80px;-webkit-text-stroke:0.3px;">1</div>
<div class="t" style="top:1146.71px;line-height:31px;font-size:24.5px;color:#1f1f1f;left:87.05px;-webkit-text-stroke:0.3px;">2</div>
<div class="t" style="top:1146.71px;line-height:31px;font-size:24.5px;color:#1f1f1f;left:163.80px;-webkit-text-stroke:0.3px;">2</div>
<div class="t" style="top:1146.71px;line-height:31px;font-size:24.5px;color:#1f1f1f;left:240.55px;-webkit-text-stroke:0.3px;">2</div>
<div class="t" style="top:1146.71px;line-height:31px;font-size:24.5px;color:#1f1f1f;left:317.30px;-webkit-text-stroke:0.3px;">2</div>
<div class="t" style="top:1146.71px;line-height:31px;font-size:24.5px;color:#1f1f1f;left:394.05px;-webkit-text-stroke:0.3px;">2</div>
<div class="t" style="top:1146.71px;line-height:31px;font-size:24.5px;color:#1f1f1f;left:470.80px;-webkit-text-stroke:0.3px;">1</div>
<div class="t" style="top:1146.71px;line-height:31px;font-size:24.5px;color:#1f1f1f;left:547.55px;-webkit-text-stroke:0.3px;">0</div>
<div class="t" style="top:1146.71px;line-height:31px;font-size:24.5px;color:#1f1f1f;left:624.30px;-webkit-text-stroke:0.3px;">0</div>
<div class="t" style="top:1146.71px;line-height:31px;font-size:24.5px;color:#1f1f1f;left:701.05px;-webkit-text-stroke:0.3px;">1</div>
<div class="t" style="top:1146.71px;line-height:31px;font-size:24.5px;color:#1f1f1f;left:777.80px;-webkit-text-stroke:0.3px;">2</div>
<div class="t" style="top:1146.71px;line-height:31px;font-size:24.5px;color:#1f1f1f;left:854.55px;-webkit-text-stroke:0.3px;">2</div>
<div class="t" style="top:1146.71px;line-height:31px;font-size:24.5px;color:#1f1f1f;left:931.30px;-webkit-text-stroke:0.3px;">1</div>
<div class="t" style="top:1146.71px;line-height:31px;font-size:24.5px;color:#1f1f1f;left:1008.05px;-webkit-text-stroke:0.3px;">1</div>
<div class="t" style="top:1146.71px;line-height:31px;font-size:24.5px;color:#1f1f1f;left:1084.80px;-webkit-text-stroke:0.3px;">1</div>
<div class="t" style="top:1185.92px;line-height:31px;font-size:24.5px;color:#1f1f1f;left:87.05px;-webkit-text-stroke:0.3px;">3</div>
<div class="t" style="top:1185.92px;line-height:31px;font-size:24.5px;color:#1f1f1f;left:163.80px;-webkit-text-stroke:0.3px;">5</div>
<div class="t" style="top:1185.92px;line-height:31px;font-size:24.5px;color:#1f1f1f;left:240.55px;-webkit-text-stroke:0.3px;">5</div>
<div class="t" style="top:1185.92px;line-height:31px;font-size:24.5px;color:#1f1f1f;left:317.30px;-webkit-text-stroke:0.3px;">5</div>
<div class="t" style="top:1185.92px;line-height:31px;font-size:24.5px;color:#1f1f1f;left:394.05px;-webkit-text-stroke:0.3px;">5</div>
<div class="t" style="top:1185.92px;line-height:31px;font-size:24.5px;color:#1f1f1f;left:470.80px;-webkit-text-stroke:0.3px;">1</div>
<div class="t" style="top:1185.92px;line-height:31px;font-size:24.5px;color:#1f1f1f;left:547.55px;-webkit-text-stroke:0.3px;">1</div>
<div class="t" style="top:1185.92px;line-height:31px;font-size:24.5px;color:#1f1f1f;left:624.30px;-webkit-text-stroke:0.3px;">3</div>
<div class="t" style="top:1185.92px;line-height:31px;font-size:24.5px;color:#1f1f1f;left:701.05px;-webkit-text-stroke:0.3px;">3</div>
<div class="t" style="top:1185.92px;line-height:31px;font-size:24.5px;color:#1f1f1f;left:777.80px;-webkit-text-stroke:0.3px;">6</div>
<div class="t" style="top:1185.92px;line-height:31px;font-size:24.5px;color:#1f1f1f;left:854.55px;-webkit-text-stroke:0.3px;">6</div>
<div class="t" style="top:1185.92px;line-height:31px;font-size:24.5px;color:#1f1f1f;left:931.30px;-webkit-text-stroke:0.3px;">6</div>
<div class="t" style="top:1185.92px;line-height:31px;font-size:24.5px;color:#1f1f1f;left:1008.05px;-webkit-text-stroke:0.3px;">6</div>
<div class="t" style="top:1185.92px;line-height:31px;font-size:24.5px;color:#1f1f1f;left:1084.80px;-webkit-text-stroke:0.3px;">5</div>
<div style="left:56.00px;top:1022.28px;width:1074.00px;height:2.40px;background:#f3f5fc;"></div>
<div style="left:56.00px;top:1061.49px;width:1074.00px;height:2.40px;background:#f3f5fc;"></div>
<div style="left:56.00px;top:1100.70px;width:1074.00px;height:2.40px;background:#f3f5fc;"></div>
<div style="left:56.00px;top:1139.91px;width:1074.00px;height:2.40px;background:#f3f5fc;"></div>
<div style="left:56.00px;top:1179.12px;width:1074.00px;height:2.40px;background:#f3f5fc;"></div>
<div style="left:131.05px;top:1023.48px;width:2.40px;height:195.45px;background:#f3f5fc;"></div>
<div style="left:207.80px;top:1023.48px;width:2.40px;height:195.45px;background:#f3f5fc;"></div>
<div style="left:284.55px;top:1023.48px;width:2.40px;height:195.45px;background:#f3f5fc;"></div>
<div style="left:361.30px;top:1023.48px;width:2.40px;height:195.45px;background:#f3f5fc;"></div>
<div style="left:438.05px;top:1023.48px;width:2.40px;height:195.45px;background:#f3f5fc;"></div>
<div style="left:514.80px;top:1023.48px;width:2.40px;height:195.45px;background:#f3f5fc;"></div>
<div style="left:591.55px;top:1023.48px;width:2.40px;height:195.45px;background:#f3f5fc;"></div>
<div style="left:668.30px;top:1023.48px;width:2.40px;height:195.45px;background:#f3f5fc;"></div>
<div style="left:745.05px;top:1023.48px;width:2.40px;height:195.45px;background:#f3f5fc;"></div>
<div style="left:821.80px;top:1023.48px;width:2.40px;height:195.45px;background:#f3f5fc;"></div>
<div style="left:898.55px;top:1023.48px;width:2.40px;height:195.45px;background:#f3f5fc;"></div>
<div style="left:975.30px;top:1023.48px;width:2.40px;height:195.45px;background:#f3f5fc;"></div>
<div style="left:1052.05px;top:1023.48px;width:2.40px;height:195.45px;background:#f3f5fc;"></div>
<div style="left:56.00px;top:1259.54px;width:1074.00px;height:233.86px;background:#bceffc;"></div>
<div class="t" style="top:1303.55px;line-height:31px;font-size:24.5px;color:#1f1f1f;left:87.05px;-webkit-text-stroke:0.3px;">1</div>
<div class="t" style="top:1303.55px;line-height:31px;font-size:24.5px;color:#1f1f1f;left:163.80px;-webkit-text-stroke:0.3px;">1</div>
<div class="t" style="top:1303.55px;line-height:31px;font-size:24.5px;color:#1f1f1f;left:240.55px;-webkit-text-stroke:0.3px;">1</div>
<div class="t" style="top:1303.55px;line-height:31px;font-size:24.5px;color:#1f1f1f;left:317.30px;-webkit-text-stroke:0.3px;">0</div>
<div class="t" style="top:1303.55px;line-height:31px;font-size:24.5px;color:#1f1f1f;left:394.05px;-webkit-text-stroke:0.3px;">0</div>
<div class="t" style="top:1303.55px;line-height:31px;font-size:24.5px;color:#1f1f1f;left:470.80px;-webkit-text-stroke:0.3px;">0</div>
<div class="t" style="top:1303.55px;line-height:31px;font-size:24.5px;color:#1f1f1f;left:547.55px;-webkit-text-stroke:0.3px;">0</div>
<div class="t" style="top:1303.55px;line-height:31px;font-size:24.5px;color:#1f1f1f;left:624.30px;-webkit-text-stroke:0.3px;">0</div>
<div class="t" style="top:1303.55px;line-height:31px;font-size:24.5px;color:#1f1f1f;left:701.05px;-webkit-text-stroke:0.3px;">0</div>
<div class="t" style="top:1303.55px;line-height:31px;font-size:24.5px;color:#1f1f1f;left:777.80px;-webkit-text-stroke:0.3px;">0</div>
<div class="t" style="top:1303.55px;line-height:31px;font-size:24.5px;color:#1f1f1f;left:854.55px;-webkit-text-stroke:0.3px;">0</div>
<div class="t" style="top:1303.55px;line-height:31px;font-size:24.5px;color:#1f1f1f;left:931.30px;-webkit-text-stroke:0.3px;">0</div>
<div class="t" style="top:1303.55px;line-height:31px;font-size:24.5px;color:#1f1f1f;left:1008.05px;-webkit-text-stroke:0.3px;">0</div>
<div class="t" style="top:1303.55px;line-height:31px;font-size:24.5px;color:#1f1f1f;left:1084.80px;-webkit-text-stroke:0.3px;">0</div>
<div class="t" style="top:1342.76px;line-height:31px;font-size:24.5px;color:#1f1f1f;left:87.05px;-webkit-text-stroke:0.3px;">0</div>
<div class="t" style="top:1342.76px;line-height:31px;font-size:24.5px;color:#1f1f1f;left:163.80px;-webkit-text-stroke:0.3px;">0</div>
<div class="t" style="top:1342.76px;line-height:31px;font-size:24.5px;color:#1f1f1f;left:240.55px;-webkit-text-stroke:0.3px;">0</div>
<div class="t" style="top:1342.76px;line-height:31px;font-size:24.5px;color:#1f1f1f;left:317.30px;-webkit-text-stroke:0.3px;">0</div>
<div class="t" style="top:1342.76px;line-height:31px;font-size:24.5px;color:#1f1f1f;left:394.05px;-webkit-text-stroke:0.3px;">0</div>
<div class="t" style="top:1342.76px;line-height:31px;font-size:24.5px;color:#1f1f1f;left:470.80px;-webkit-text-stroke:0.3px;">0</div>
<div class="t" style="top:1342.76px;line-height:31px;font-size:24.5px;color:#1f1f1f;left:547.55px;-webkit-text-stroke:0.3px;">0</div>
<div class="t" style="top:1342.76px;line-height:31px;font-size:24.5px;color:#1f1f1f;left:624.30px;-webkit-text-stroke:0.3px;">0</div>
<div class="t" style="top:1342.76px;line-height:31px;font-size:24.5px;color:#1f1f1f;left:701.05px;-webkit-text-stroke:0.3px;">0</div>
<div class="t" style="top:1342.76px;line-height:31px;font-size:24.5px;color:#1f1f1f;left:777.80px;-webkit-text-stroke:0.3px;">0</div>
<div class="t" style="top:1342.76px;line-height:31px;font-size:24.5px;color:#1f1f1f;left:854.55px;-webkit-text-stroke:0.3px;">0</div>
<div class="t" style="top:1342.76px;line-height:31px;font-size:24.5px;color:#1f1f1f;left:931.30px;-webkit-text-stroke:0.3px;">0</div>
<div class="t" style="top:1342.76px;line-height:31px;font-size:24.5px;color:#1f1f1f;left:1008.05px;-webkit-text-stroke:0.3px;">0</div>
<div class="t" style="top:1342.76px;line-height:31px;font-size:24.5px;color:#1f1f1f;left:1084.80px;-webkit-text-stroke:0.3px;">0</div>
<div class="t" style="top:1381.97px;line-height:31px;font-size:24.5px;color:#1f1f1f;left:87.05px;-webkit-text-stroke:0.3px;">0</div>
<div class="t" style="top:1381.97px;line-height:31px;font-size:24.5px;color:#1f1f1f;left:163.80px;-webkit-text-stroke:0.3px;">0</div>
<div class="t" style="top:1381.97px;line-height:31px;font-size:24.5px;color:#1f1f1f;left:240.55px;-webkit-text-stroke:0.3px;">0</div>
<div class="t" style="top:1381.97px;line-height:31px;font-size:24.5px;color:#1f1f1f;left:317.30px;-webkit-text-stroke:0.3px;">0</div>
<div class="t" style="top:1381.97px;line-height:31px;font-size:24.5px;color:#1f1f1f;left:394.05px;-webkit-text-stroke:0.3px;">0</div>
<div class="t" style="top:1381.97px;line-height:31px;font-size:24.5px;color:#1f1f1f;left:470.80px;-webkit-text-stroke:0.3px;">0</div>
<div class="t" style="top:1381.97px;line-height:31px;font-size:24.5px;color:#1f1f1f;left:547.55px;-webkit-text-stroke:0.3px;">1</div>
<div class="t" style="top:1381.97px;line-height:31px;font-size:24.5px;color:#1f1f1f;left:624.30px;-webkit-text-stroke:0.3px;">1</div>
<div class="t" style="top:1381.97px;line-height:31px;font-size:24.5px;color:#1f1f1f;left:701.05px;-webkit-text-stroke:0.3px;">1</div>
<div class="t" style="top:1381.97px;line-height:31px;font-size:24.5px;color:#1f1f1f;left:777.80px;-webkit-text-stroke:0.3px;">0</div>
<div class="t" style="top:1381.97px;line-height:31px;font-size:24.5px;color:#1f1f1f;left:854.55px;-webkit-text-stroke:0.3px;">0</div>
<div class="t" style="top:1381.97px;line-height:31px;font-size:24.5px;color:#1f1f1f;left:931.30px;-webkit-text-stroke:0.3px;">0</div>
<div class="t" style="top:1381.97px;line-height:31px;font-size:24.5px;color:#1f1f1f;left:1008.05px;-webkit-text-stroke:0.3px;">0</div>
<div class="t" style="top:1381.97px;line-height:31px;font-size:24.5px;color:#1f1f1f;left:1084.80px;-webkit-text-stroke:0.3px;">0</div>
<div class="t" style="top:1421.18px;line-height:31px;font-size:24.5px;color:#1f1f1f;left:87.05px;-webkit-text-stroke:0.3px;">0</div>
<div class="t" style="top:1421.18px;line-height:31px;font-size:24.5px;color:#1f1f1f;left:163.80px;-webkit-text-stroke:0.3px;">0</div>
<div class="t" style="top:1421.18px;line-height:31px;font-size:24.5px;color:#1f1f1f;left:240.55px;-webkit-text-stroke:0.3px;">0</div>
<div class="t" style="top:1421.18px;line-height:31px;font-size:24.5px;color:#1f1f1f;left:317.30px;-webkit-text-stroke:0.3px;">0</div>
<div class="t" style="top:1421.18px;line-height:31px;font-size:24.5px;color:#1f1f1f;left:394.05px;-webkit-text-stroke:0.3px;">0</div>
<div class="t" style="top:1421.18px;line-height:31px;font-size:24.5px;color:#1f1f1f;left:470.80px;-webkit-text-stroke:0.3px;">0</div>
<div class="t" style="top:1421.18px;line-height:31px;font-size:24.5px;color:#1f1f1f;left:547.55px;-webkit-text-stroke:0.3px;">0</div>
<div class="t" style="top:1421.18px;line-height:31px;font-size:24.5px;color:#1f1f1f;left:624.30px;-webkit-text-stroke:0.3px;">0</div>
<div class="t" style="top:1421.18px;line-height:31px;font-size:24.5px;color:#1f1f1f;left:701.05px;-webkit-text-stroke:0.3px;">0</div>
<div class="t" style="top:1421.18px;line-height:31px;font-size:24.5px;color:#1f1f1f;left:777.80px;-webkit-text-stroke:0.3px;">0</div>
<div class="t" style="top:1421.18px;line-height:31px;font-size:24.5px;color:#1f1f1f;left:854.55px;-webkit-text-stroke:0.3px;">0</div>
<div class="t" style="top:1421.18px;line-height:31px;font-size:24.5px;color:#1f1f1f;left:931.30px;-webkit-text-stroke:0.3px;">0</div>
<div class="t" style="top:1421.18px;line-height:31px;font-size:24.5px;color:#1f1f1f;left:1008.05px;-webkit-text-stroke:0.3px;">0</div>
<div class="t" style="top:1421.18px;line-height:31px;font-size:24.5px;color:#1f1f1f;left:1084.80px;-webkit-text-stroke:0.3px;">0</div>
<div class="t" style="top:1460.39px;line-height:31px;font-size:24.5px;color:#1f1f1f;left:87.05px;-webkit-text-stroke:0.3px;">1</div>
<div class="t" style="top:1460.39px;line-height:31px;font-size:24.5px;color:#1f1f1f;left:163.80px;-webkit-text-stroke:0.3px;">1</div>
<div class="t" style="top:1460.39px;line-height:31px;font-size:24.5px;color:#1f1f1f;left:240.55px;-webkit-text-stroke:0.3px;">1</div>
<div class="t" style="top:1460.39px;line-height:31px;font-size:24.5px;color:#1f1f1f;left:317.30px;-webkit-text-stroke:0.3px;">0</div>
<div class="t" style="top:1460.39px;line-height:31px;font-size:24.5px;color:#1f1f1f;left:394.05px;-webkit-text-stroke:0.3px;">0</div>
<div class="t" style="top:1460.39px;line-height:31px;font-size:24.5px;color:#1f1f1f;left:470.80px;-webkit-text-stroke:0.3px;">0</div>
<div class="t" style="top:1460.39px;line-height:31px;font-size:24.5px;color:#1f1f1f;left:547.55px;-webkit-text-stroke:0.3px;">1</div>
<div class="t" style="top:1460.39px;line-height:31px;font-size:24.5px;color:#1f1f1f;left:624.30px;-webkit-text-stroke:0.3px;">1</div>
<div class="t" style="top:1460.39px;line-height:31px;font-size:24.5px;color:#1f1f1f;left:701.05px;-webkit-text-stroke:0.3px;">1</div>
<div class="t" style="top:1460.39px;line-height:31px;font-size:24.5px;color:#1f1f1f;left:777.80px;-webkit-text-stroke:0.3px;">0</div>
<div class="t" style="top:1460.39px;line-height:31px;font-size:24.5px;color:#1f1f1f;left:854.55px;-webkit-text-stroke:0.3px;">0</div>
<div class="t" style="top:1460.39px;line-height:31px;font-size:24.5px;color:#1f1f1f;left:931.30px;-webkit-text-stroke:0.3px;">0</div>
<div class="t" style="top:1460.39px;line-height:31px;font-size:24.5px;color:#1f1f1f;left:1008.05px;-webkit-text-stroke:0.3px;">0</div>
<div class="t" style="top:1460.39px;line-height:31px;font-size:24.5px;color:#1f1f1f;left:1084.80px;-webkit-text-stroke:0.3px;">0</div>
<div style="left:56.00px;top:1296.75px;width:1074.00px;height:2.40px;background:#ecfbff;"></div>
<div style="left:56.00px;top:1335.96px;width:1074.00px;height:2.40px;background:#ecfbff;"></div>
<div style="left:56.00px;top:1375.17px;width:1074.00px;height:2.40px;background:#ecfbff;"></div>
<div style="left:56.00px;top:1414.38px;width:1074.00px;height:2.40px;background:#ecfbff;"></div>
<div style="left:56.00px;top:1453.59px;width:1074.00px;height:2.40px;background:#ecfbff;"></div>
<div style="left:131.05px;top:1297.95px;width:2.40px;height:195.45px;background:#ecfbff;"></div>
<div style="left:207.80px;top:1297.95px;width:2.40px;height:195.45px;background:#ecfbff;"></div>
<div style="left:284.55px;top:1297.95px;width:2.40px;height:195.45px;background:#ecfbff;"></div>
<div style="left:361.30px;top:1297.95px;width:2.40px;height:195.45px;background:#ecfbff;"></div>
<div style="left:438.05px;top:1297.95px;width:2.40px;height:195.45px;background:#ecfbff;"></div>
<div style="left:514.80px;top:1297.95px;width:2.40px;height:195.45px;background:#ecfbff;"></div>
<div style="left:591.55px;top:1297.95px;width:2.40px;height:195.45px;background:#ecfbff;"></div>
<div style="left:668.30px;top:1297.95px;width:2.40px;height:195.45px;background:#ecfbff;"></div>
<div style="left:745.05px;top:1297.95px;width:2.40px;height:195.45px;background:#ecfbff;"></div>
<div style="left:821.80px;top:1297.95px;width:2.40px;height:195.45px;background:#ecfbff;"></div>
<div style="left:898.55px;top:1297.95px;width:2.40px;height:195.45px;background:#ecfbff;"></div>
<div style="left:975.30px;top:1297.95px;width:2.40px;height:195.45px;background:#ecfbff;"></div>
<div style="left:1052.05px;top:1297.95px;width:2.40px;height:195.45px;background:#ecfbff;"></div>
<div style="left:56.00px;top:1534.01px;width:1074.00px;height:37.81px;background:#cde9f5;"></div>
<div class="t" style="top:1538.82px;line-height:31px;font-size:24.5px;color:#1f1f1f;left:80.24px;-webkit-text-stroke:0.3px;">32</div>
<div class="t" style="top:1538.82px;line-height:31px;font-size:24.5px;color:#1f1f1f;left:156.99px;-webkit-text-stroke:0.3px;">48</div>
<div class="t" style="top:1538.82px;line-height:31px;font-size:24.5px;color:#1f1f1f;left:233.74px;-webkit-text-stroke:0.3px;">48</div>
<div class="t" style="top:1538.82px;line-height:31px;font-size:24.5px;color:#1f1f1f;left:310.49px;-webkit-text-stroke:0.3px;">32</div>
<div class="t" style="top:1538.82px;line-height:31px;font-size:24.5px;color:#1f1f1f;left:387.24px;-webkit-text-stroke:0.3px;">32</div>
<div class="t" style="top:1538.82px;line-height:31px;font-size:24.5px;color:#1f1f1f;left:463.99px;-webkit-text-stroke:0.3px;">16</div>
<div class="t" style="top:1538.82px;line-height:31px;font-size:24.5px;color:#1f1f1f;left:540.74px;-webkit-text-stroke:0.3px;">18</div>
<div class="t" style="top:1538.82px;line-height:31px;font-size:24.5px;color:#1f1f1f;left:617.49px;-webkit-text-stroke:0.3px;">26</div>
<div class="t" style="top:1538.82px;line-height:31px;font-size:24.5px;color:#1f1f1f;left:694.24px;-webkit-text-stroke:0.3px;">26</div>
<div class="t" style="top:1538.82px;line-height:31px;font-size:24.5px;color:#1f1f1f;left:770.99px;-webkit-text-stroke:0.3px;">40</div>
<div class="t" style="top:1538.82px;line-height:31px;font-size:24.5px;color:#1f1f1f;left:847.74px;-webkit-text-stroke:0.3px;">40</div>
<div class="t" style="top:1538.82px;line-height:31px;font-size:24.5px;color:#1f1f1f;left:924.49px;-webkit-text-stroke:0.3px;">32</div>
<div class="t" style="top:1538.82px;line-height:31px;font-size:24.5px;color:#1f1f1f;left:1001.24px;-webkit-text-stroke:0.3px;">32</div>
<div class="t" style="top:1538.82px;line-height:31px;font-size:24.5px;color:#1f1f1f;left:1077.99px;-webkit-text-stroke:0.3px;">24</div>
<div style="left:56.00px;top:1532.01px;width:1074.00px;height:2.40px;background:#e9f5fa;"></div>
<div style="left:131.05px;top:1533.21px;width:2.40px;height:38.61px;background:#e9f5fa;"></div>
<div style="left:207.80px;top:1533.21px;width:2.40px;height:38.61px;background:#e9f5fa;"></div>
<div style="left:284.55px;top:1533.21px;width:2.40px;height:38.61px;background:#e9f5fa;"></div>
<div style="left:361.30px;top:1533.21px;width:2.40px;height:38.61px;background:#e9f5fa;"></div>
<div style="left:438.05px;top:1533.21px;width:2.40px;height:38.61px;background:#e9f5fa;"></div>
<div style="left:514.80px;top:1533.21px;width:2.40px;height:38.61px;background:#e9f5fa;"></div>
<div style="left:591.55px;top:1533.21px;width:2.40px;height:38.61px;background:#e9f5fa;"></div>
<div style="left:668.30px;top:1533.21px;width:2.40px;height:38.61px;background:#e9f5fa;"></div>
<div style="left:745.05px;top:1533.21px;width:2.40px;height:38.61px;background:#e9f5fa;"></div>
<div style="left:821.80px;top:1533.21px;width:2.40px;height:38.61px;background:#e9f5fa;"></div>
<div style="left:898.55px;top:1533.21px;width:2.40px;height:38.61px;background:#e9f5fa;"></div>
<div style="left:975.30px;top:1533.21px;width:2.40px;height:38.61px;background:#e9f5fa;"></div>
<div style="left:1052.05px;top:1533.21px;width:2.40px;height:38.61px;background:#e9f5fa;"></div>
<div style="left:1384.40px;top:709.80px;width:357.60px;height:37.21px;background:#ffe699;"></div>
<div class="t" style="top:714.50px;line-height:31px;font-size:25px;color:#16191f;font-weight:700;letter-spacing:-0.306px;left:1458.70px;">Morning/Day Shift</div>
<div style="left:1763.80px;top:709.80px;width:75.90px;height:37.21px;background:#ffe699;"></div>
<div class="t" style="top:714.50px;line-height:31px;font-size:25px;color:#16191f;font-weight:700;left:1772.75px;transform:scaleX(0.9600);transform-origin:0 50%;">Code</div>
<div style="left:1843.70px;top:709.80px;width:231.80px;height:37.21px;background:#ffe699;"></div>
<div class="t" style="top:714.50px;line-height:31px;font-size:25px;color:#16191f;font-weight:700;left:1887.60px;transform:scaleX(0.9540);transform-origin:0 50%;">Time of Shift</div>
<div style="left:2079.50px;top:709.80px;width:77.90px;height:37.21px;background:#ffe699;"></div>
<div class="t" style="top:714.50px;line-height:31px;font-size:25px;color:#16191f;font-weight:700;letter-spacing:-0.344px;left:2096.95px;">Hrs</div>
<div style="left:1384.40px;top:751.01px;width:357.60px;height:35.21px;background:#ffe699;"></div>
<div class="t" style="top:753.72px;line-height:31px;font-size:25px;color:#272b33;letter-spacing:0.202px;left:1508.70px;">early shift</div>
<div style="left:1763.80px;top:751.01px;width:75.90px;height:35.21px;background:#ffe699;"></div>
<div class="t" style="top:753.72px;line-height:31px;font-size:25px;color:#272b33;left:1794.41px;">A</div>
<div style="left:1843.70px;top:751.01px;width:231.80px;height:35.21px;background:#ffe699;"></div>
<div class="t" style="top:753.72px;line-height:31px;font-size:25px;color:#272b33;left:1897.60px;transform:scaleX(1.0371);transform-origin:0 50%;">0600-1430</div>
<div style="left:2079.50px;top:751.01px;width:77.90px;height:35.21px;background:#ffe699;"></div>
<div class="t" style="top:753.72px;line-height:31px;font-size:25px;color:#272b33;left:2099.45px;transform:scaleX(1.0355);transform-origin:0 50%;">8.0</div>
<div style="left:1384.40px;top:790.22px;width:357.60px;height:35.21px;background:#ffe699;"></div>
<div class="t" style="top:792.92px;line-height:31px;font-size:25px;color:#272b33;letter-spacing:0.197px;left:1482.70px;">standard early</div>
<div style="left:1763.80px;top:790.22px;width:75.90px;height:35.21px;background:#ffe699;"></div>
<div class="t" style="top:792.92px;line-height:31px;font-size:25px;color:#272b33;left:1788.75px;transform:scaleX(0.9152);transform-origin:0 50%;">A6</div>
<div style="left:1843.70px;top:790.22px;width:231.80px;height:35.21px;background:#ffe699;"></div>
<div class="t" style="top:792.92px;line-height:31px;font-size:25px;color:#272b33;left:1897.60px;transform:scaleX(1.0371);transform-origin:0 50%;">0700-1530</div>
<div style="left:2079.50px;top:790.22px;width:77.90px;height:35.21px;background:#ffe699;"></div>
<div class="t" style="top:792.92px;line-height:31px;font-size:25px;color:#272b33;left:2099.45px;transform:scaleX(1.0355);transform-origin:0 50%;">6.0</div>
<div style="left:1384.40px;top:829.43px;width:357.60px;height:35.21px;background:#ffe699;"></div>
<div style="left:1763.80px;top:829.43px;width:75.90px;height:35.21px;background:#ffe699;"></div>
<div class="t" style="top:832.13px;line-height:31px;font-size:25px;color:#272b33;left:1799.27px;">I</div>
<div style="left:1843.70px;top:829.43px;width:231.80px;height:35.21px;background:#ffe699;"></div>
<div style="left:2079.50px;top:829.43px;width:77.90px;height:35.21px;background:#ffe699;"></div>
<div class="t" style="top:832.13px;line-height:31px;font-size:25px;color:#272b33;left:2099.45px;transform:scaleX(1.0355);transform-origin:0 50%;">8.0</div>
<div style="left:1384.40px;top:868.64px;width:357.60px;height:35.21px;background:#ffe699;"></div>
<div style="left:1763.80px;top:868.64px;width:75.90px;height:35.21px;background:#ffe699;"></div>
<div style="left:1843.70px;top:868.64px;width:231.80px;height:35.21px;background:#ffe699;"></div>
<div style="left:2079.50px;top:868.64px;width:77.90px;height:35.21px;background:#ffe699;"></div>
<div style="left:1384.40px;top:907.85px;width:357.60px;height:35.21px;background:#ffe699;"></div>
<div style="left:1763.80px;top:907.85px;width:75.90px;height:35.21px;background:#ffe699;"></div>
<div style="left:1843.70px;top:907.85px;width:231.80px;height:35.21px;background:#ffe699;"></div>
<div style="left:2079.50px;top:907.85px;width:77.90px;height:35.21px;background:#ffe699;"></div>
<div style="left:1384.40px;top:984.27px;width:357.60px;height:37.21px;background:#dadff3;"></div>
<div class="t" style="top:988.98px;line-height:31px;font-size:25px;color:#16191f;font-weight:700;left:1474.70px;transform:scaleX(0.9729);transform-origin:0 50%;">Afternoon Shift</div>
<div style="left:1763.80px;top:984.27px;width:75.90px;height:37.21px;background:#dadff3;"></div>
<div class="t" style="top:988.98px;line-height:31px;font-size:25px;color:#16191f;font-weight:700;left:1772.75px;transform:scaleX(0.9600);transform-origin:0 50%;">Code</div>
<div style="left:1843.70px;top:984.27px;width:231.80px;height:37.21px;background:#dadff3;"></div>
<div class="t" style="top:988.98px;line-height:31px;font-size:25px;color:#16191f;font-weight:700;left:1887.60px;transform:scaleX(0.9540);transform-origin:0 50%;">Time of Shift</div>
<div style="left:2079.50px;top:984.27px;width:77.90px;height:37.21px;background:#dadff3;"></div>
<div class="t" style="top:988.98px;line-height:31px;font-size:25px;color:#16191f;font-weight:700;letter-spacing:-0.344px;left:2096.95px;">Hrs</div>
<div style="left:1384.40px;top:1025.48px;width:357.60px;height:35.21px;background:#dadff3;"></div>
<div class="t" style="top:1028.18px;line-height:31px;font-size:25px;color:#272b33;left:1514.70px;transform:scaleX(1.0418);transform-origin:0 50%;">late shift</div>
<div style="left:1763.80px;top:1025.48px;width:75.90px;height:35.21px;background:#dadff3;"></div>
<div class="t" style="top:1028.18px;line-height:31px;font-size:25px;color:#272b33;left:1794.41px;">P</div>
<div style="left:1843.70px;top:1025.48px;width:231.80px;height:35.21px;background:#dadff3;"></div>
<div class="t" style="top:1028.18px;line-height:31px;font-size:25px;color:#272b33;left:1897.60px;transform:scaleX(1.0371);transform-origin:0 50%;">1330-2200</div>
<div style="left:2079.50px;top:1025.48px;width:77.90px;height:35.21px;background:#dadff3;"></div>
<div class="t" style="top:1028.18px;line-height:31px;font-size:25px;color:#272b33;left:2099.45px;transform:scaleX(1.0355);transform-origin:0 50%;">8.0</div>
<div style="left:1384.40px;top:1064.69px;width:357.60px;height:35.21px;background:#dadff3;"></div>
<div class="t" style="top:1067.39px;line-height:31px;font-size:25px;color:#272b33;left:1492.70px;transform:scaleX(0.9116);transform-origin:0 50%;">LATE SHORT</div>
<div style="left:1763.80px;top:1064.69px;width:75.90px;height:35.21px;background:#dadff3;"></div>
<div class="t" style="top:1067.39px;line-height:31px;font-size:25px;color:#272b33;left:1795.80px;">L</div>
<div style="left:1843.70px;top:1064.69px;width:231.80px;height:35.21px;background:#dadff3;"></div>
<div class="t" style="top:1067.39px;line-height:31px;font-size:25px;color:#272b33;left:1897.60px;transform:scaleX(1.0371);transform-origin:0 50%;">1530-2200</div>
<div style="left:2079.50px;top:1064.69px;width:77.90px;height:35.21px;background:#dadff3;"></div>
<div class="t" style="top:1067.39px;line-height:31px;font-size:25px;color:#272b33;left:2099.45px;transform:scaleX(1.0355);transform-origin:0 50%;">8.0</div>
<div style="left:1384.40px;top:1103.90px;width:357.60px;height:35.21px;background:#dadff3;"></div>
<div style="left:1763.80px;top:1103.90px;width:75.90px;height:35.21px;background:#dadff3;"></div>
<div class="t" style="top:1106.61px;line-height:31px;font-size:25px;color:#272b33;left:1794.41px;">B</div>
<div style="left:1843.70px;top:1103.90px;width:231.80px;height:35.21px;background:#dadff3;"></div>
<div style="left:2079.50px;top:1103.90px;width:77.90px;height:35.21px;background:#dadff3;"></div>
<div class="t" style="top:1106.61px;line-height:31px;font-size:25px;color:#272b33;left:2099.45px;transform:scaleX(1.0355);transform-origin:0 50%;">8.0</div>
<div style="left:1384.40px;top:1143.11px;width:357.60px;height:35.21px;background:#dadff3;"></div>
<div style="left:1763.80px;top:1143.11px;width:75.90px;height:35.21px;background:#dadff3;"></div>
<div class="t" style="top:1145.81px;line-height:31px;font-size:25px;color:#272b33;left:1789.25px;transform:scaleX(0.9251);transform-origin:0 50%;">9T</div>
<div style="left:1843.70px;top:1143.11px;width:231.80px;height:35.21px;background:#dadff3;"></div>
<div style="left:2079.50px;top:1143.11px;width:77.90px;height:35.21px;background:#dadff3;"></div>
<div class="t" style="top:1145.81px;line-height:31px;font-size:25px;color:#272b33;left:2099.45px;transform:scaleX(1.0355);transform-origin:0 50%;">6.0</div>
<div style="left:1384.40px;top:1182.32px;width:357.60px;height:35.21px;background:#dadff3;"></div>
<div style="left:1763.80px;top:1182.32px;width:75.90px;height:35.21px;background:#dadff3;"></div>
<div style="left:1843.70px;top:1182.32px;width:231.80px;height:35.21px;background:#dadff3;"></div>
<div style="left:2079.50px;top:1182.32px;width:77.90px;height:35.21px;background:#dadff3;"></div>
<div style="left:1384.40px;top:1258.74px;width:357.60px;height:37.21px;background:#bceffc;"></div>
<div class="t" style="top:1263.44px;line-height:31px;font-size:25px;color:#16191f;font-weight:700;left:1502.20px;transform:scaleX(0.9655);transform-origin:0 50%;">Night Shift</div>
<div style="left:1763.80px;top:1258.74px;width:75.90px;height:37.21px;background:#bceffc;"></div>
<div class="t" style="top:1263.44px;line-height:31px;font-size:25px;color:#16191f;font-weight:700;left:1772.75px;transform:scaleX(0.9600);transform-origin:0 50%;">Code</div>
<div style="left:1843.70px;top:1258.74px;width:231.80px;height:37.21px;background:#bceffc;"></div>
<div class="t" style="top:1263.44px;line-height:31px;font-size:25px;color:#16191f;font-weight:700;left:1887.60px;transform:scaleX(0.9540);transform-origin:0 50%;">Time of Shift</div>
<div style="left:2079.50px;top:1258.74px;width:77.90px;height:37.21px;background:#bceffc;"></div>
<div class="t" style="top:1263.44px;line-height:31px;font-size:25px;color:#16191f;font-weight:700;letter-spacing:-0.344px;left:2096.95px;">Hrs</div>
<div style="left:1384.40px;top:1299.95px;width:357.60px;height:35.21px;background:#bceffc;"></div>
<div class="t" style="top:1302.65px;line-height:31px;font-size:25px;color:#272b33;letter-spacing:0.285px;left:1507.70px;">long night</div>
<div style="left:1763.80px;top:1299.95px;width:75.90px;height:35.21px;background:#bceffc;"></div>
<div class="t" style="top:1302.65px;line-height:31px;font-size:25px;color:#272b33;left:1793.72px;">N</div>
<div style="left:1843.70px;top:1299.95px;width:231.80px;height:35.21px;background:#bceffc;"></div>
<div class="t" style="top:1302.65px;line-height:31px;font-size:25px;color:#272b33;left:1897.60px;transform:scaleX(1.0371);transform-origin:0 50%;">2130-0730</div>
<div style="left:2079.50px;top:1299.95px;width:77.90px;height:35.21px;background:#bceffc;"></div>
<div class="t" style="top:1302.65px;line-height:31px;font-size:25px;color:#272b33;left:2099.45px;transform:scaleX(1.0355);transform-origin:0 50%;">8.0</div>
<div style="left:1384.40px;top:1339.16px;width:357.60px;height:35.21px;background:#bceffc;"></div>
<div style="left:1763.80px;top:1339.16px;width:75.90px;height:35.21px;background:#bceffc;"></div>
<div class="t" style="top:1341.86px;line-height:31px;font-size:25px;color:#272b33;left:1794.41px;">S</div>
<div style="left:1843.70px;top:1339.16px;width:231.80px;height:35.21px;background:#bceffc;"></div>
<div style="left:2079.50px;top:1339.16px;width:77.90px;height:35.21px;background:#bceffc;"></div>
<div class="t" style="top:1341.86px;line-height:31px;font-size:25px;color:#272b33;left:2092.45px;transform:scaleX(1.0273);transform-origin:0 50%;">10.0</div>
<div style="left:1384.40px;top:1378.37px;width:357.60px;height:35.21px;background:#bceffc;"></div>
<div style="left:1763.80px;top:1378.37px;width:75.90px;height:35.21px;background:#bceffc;"></div>
<div class="t" style="top:1381.07px;line-height:31px;font-size:25px;color:#272b33;left:1788.25px;transform:scaleX(0.8693);transform-origin:0 50%;">SS</div>
<div style="left:1843.70px;top:1378.37px;width:231.80px;height:35.21px;background:#bceffc;"></div>
<div style="left:2079.50px;top:1378.37px;width:77.90px;height:35.21px;background:#bceffc;"></div>
<div class="t" style="top:1381.07px;line-height:31px;font-size:25px;color:#272b33;left:2092.45px;transform:scaleX(1.0273);transform-origin:0 50%;">10.0</div>
<div style="left:1384.40px;top:1417.58px;width:357.60px;height:35.21px;background:#bceffc;"></div>
<div style="left:1763.80px;top:1417.58px;width:75.90px;height:35.21px;background:#bceffc;"></div>
<div style="left:1843.70px;top:1417.58px;width:231.80px;height:35.21px;background:#bceffc;"></div>
<div style="left:2079.50px;top:1417.58px;width:77.90px;height:35.21px;background:#bceffc;"></div>
<div style="left:1384.40px;top:1456.79px;width:357.60px;height:35.21px;background:#bceffc;"></div>
<div style="left:1763.80px;top:1456.79px;width:75.90px;height:35.21px;background:#bceffc;"></div>
<div style="left:1843.70px;top:1456.79px;width:231.80px;height:35.21px;background:#bceffc;"></div>
<div style="left:2079.50px;top:1456.79px;width:77.90px;height:35.21px;background:#bceffc;"></div>
<div style="left:1384.40px;top:1533.21px;width:357.60px;height:37.21px;background:#ededed;"></div>
<div class="t" style="top:1537.91px;line-height:31px;font-size:25px;color:#16191f;font-weight:700;letter-spacing:-0.163px;left:1471.20px;">Non-Productive</div>
<div style="left:1763.80px;top:1533.21px;width:75.90px;height:37.21px;background:#ededed;"></div>
<div class="t" style="top:1537.91px;line-height:31px;font-size:25px;color:#16191f;font-weight:700;left:1772.75px;transform:scaleX(0.9600);transform-origin:0 50%;">Code</div>
<div style="left:1843.70px;top:1533.21px;width:231.80px;height:37.21px;background:#ededed;"></div>
<div class="t" style="top:1537.91px;line-height:31px;font-size:25px;color:#16191f;font-weight:700;left:1887.60px;transform:scaleX(0.9540);transform-origin:0 50%;">Time of Shift</div>
<div style="left:2079.50px;top:1533.21px;width:77.90px;height:37.21px;background:#ededed;"></div>
<div class="t" style="top:1537.91px;line-height:31px;font-size:25px;color:#16191f;font-weight:700;letter-spacing:-0.344px;left:2096.95px;">Hrs</div>
<div style="left:1384.40px;top:1574.42px;width:357.60px;height:35.21px;background:#ededed;"></div>
<div class="t" style="top:1577.12px;line-height:31px;font-size:25px;color:#272b33;letter-spacing:-0.091px;left:1486.20px;">Roster day off</div>
<div style="left:1763.80px;top:1574.42px;width:75.90px;height:35.21px;background:#ffd93d;"></div>
<div class="t" style="top:1577.12px;line-height:31px;font-size:25px;color:#272b33;left:1786.25px;transform:scaleX(0.9139);transform-origin:0 50%;">RD</div>
<div style="left:1843.70px;top:1574.42px;width:231.80px;height:35.21px;background:#ededed;"></div>
<div class="t" style="top:1577.12px;line-height:31px;font-size:25px;color:#272b33;left:1897.60px;transform:scaleX(1.0371);transform-origin:0 50%;">0800-1630</div>
<div style="left:2079.50px;top:1574.42px;width:77.90px;height:35.21px;background:#ededed;"></div>
<div class="t" style="top:1577.12px;line-height:31px;font-size:25px;color:#272b33;left:2099.45px;transform:scaleX(1.0355);transform-origin:0 50%;">8.0</div>
<div style="left:2180.00px;top:710.80px;width:431.30px;height:36.21px;background:#ffc000;"></div>
<div style="left:2613.60px;top:710.80px;width:400.00px;height:36.21px;background:#ffc000;"></div>
<div class="t" style="top:711.40px;line-height:41px;font-size:32.6px;color:#222;font-family:'DejaVu Sans', sans-serif;left:2186.50px;transform:scaleX(0.9635);transform-origin:0 50%;">Holiday</div>
<div class="t" style="top:711.40px;line-height:41px;font-size:32.6px;color:#222;font-family:'DejaVu Sans', sans-serif;left:2619.50px;transform:scaleX(0.9374);transform-origin:0 50%;">Date</div>
<div style="left:2180.00px;top:750.21px;width:431.30px;height:36.41px;background:#d9d9d9;"></div>
<div style="left:2613.60px;top:750.21px;width:400.00px;height:36.41px;background:#d9d9d9;"></div>
<div class="t" style="top:756.12px;line-height:31px;font-size:25px;color:#1d2733;font-weight:700;font-family:'DejaVu Sans', sans-serif;letter-spacing:-0.118px;left:2186.50px;">New Year's Day</div>
<div class="t" style="top:756.12px;line-height:31px;font-size:25px;color:#2a3440;font-family:'DejaVu Sans', sans-serif;left:2619.50px;transform:scaleX(1.0489);transform-origin:0 50%;-webkit-text-stroke:0.35px;">Wednesday, 1 January 2025</div>
<div style="left:2180.00px;top:789.42px;width:431.30px;height:36.41px;background:#ededed;"></div>
<div style="left:2613.60px;top:789.42px;width:400.00px;height:36.41px;background:#ededed;"></div>
<div class="t" style="top:795.32px;line-height:31px;font-size:25px;color:#1d2733;font-weight:700;font-family:'DejaVu Sans', sans-serif;letter-spacing:-0.064px;left:2186.50px;">Good Friday</div>
<div class="t" style="top:795.32px;line-height:31px;font-size:25px;color:#2a3440;font-family:'DejaVu Sans', sans-serif;left:2619.50px;transform:scaleX(1.0350);transform-origin:0 50%;-webkit-text-stroke:0.35px;">Monday, 7 April 2025</div>
<div style="left:2180.00px;top:828.63px;width:431.30px;height:36.41px;background:#d9d9d9;"></div>
<div style="left:2613.60px;top:828.63px;width:400.00px;height:36.41px;background:#d9d9d9;"></div>
<div class="t" style="top:834.53px;line-height:31px;font-size:25px;color:#1d2733;font-weight:700;font-family:'DejaVu Sans', sans-serif;letter-spacing:-0.323px;left:2186.50px;">Easter Saturday</div>
<div class="t" style="top:834.53px;line-height:31px;font-size:25px;color:#2a3440;font-family:'DejaVu Sans', sans-serif;left:2619.50px;transform:scaleX(1.0475);transform-origin:0 50%;-webkit-text-stroke:0.35px;">Tuesday, 8 April 2025</div>
<div style="left:2180.00px;top:867.84px;width:431.30px;height:36.41px;background:#ededed;"></div>
<div style="left:2613.60px;top:867.84px;width:400.00px;height:36.41px;background:#ededed;"></div>
<div class="t" style="top:873.74px;line-height:31px;font-size:25px;color:#1d2733;font-weight:700;font-family:'DejaVu Sans', sans-serif;letter-spacing:-0.223px;left:2186.50px;">Easter Sunday</div>
<div class="t" style="top:873.74px;line-height:31px;font-size:25px;color:#2a3440;font-family:'DejaVu Sans', sans-serif;left:2619.50px;transform:scaleX(1.0504);transform-origin:0 50%;-webkit-text-stroke:0.35px;">Wednesday, 9 April 2025</div>
<div style="left:2180.00px;top:907.05px;width:431.30px;height:36.41px;background:#d9d9d9;"></div>
<div style="left:2613.60px;top:907.05px;width:400.00px;height:36.41px;background:#d9d9d9;"></div>
<div class="t" style="top:912.95px;line-height:31px;font-size:25px;color:#1d2733;font-weight:700;font-family:'DejaVu Sans', sans-serif;letter-spacing:-0.077px;left:2186.50px;">Easter Monday</div>
<div class="t" style="top:912.95px;line-height:31px;font-size:25px;color:#2a3440;font-family:'DejaVu Sans', sans-serif;left:2619.50px;transform:scaleX(1.0279);transform-origin:0 50%;-webkit-text-stroke:0.35px;">Thursday, 10 April 2025</div>
<div style="left:2180.00px;top:946.26px;width:431.30px;height:36.41px;background:#ededed;"></div>
<div style="left:2613.60px;top:946.26px;width:400.00px;height:36.41px;background:#ededed;"></div>
<div class="t" style="top:952.16px;line-height:31px;font-size:25px;color:#1d2733;font-weight:700;font-family:'DejaVu Sans', sans-serif;letter-spacing:-0.281px;left:2186.50px;">Anzac Day</div>
<div class="t" style="top:952.16px;line-height:31px;font-size:25px;color:#2a3440;font-family:'DejaVu Sans', sans-serif;left:2619.50px;transform:scaleX(1.0379);transform-origin:0 50%;-webkit-text-stroke:0.35px;">Friday, 25 April 2025</div>
<div style="left:2180.00px;top:985.47px;width:431.30px;height:36.41px;background:#d9d9d9;"></div>
<div style="left:2613.60px;top:985.47px;width:400.00px;height:36.41px;background:#d9d9d9;"></div>
<div class="t" style="top:991.38px;line-height:31px;font-size:25px;color:#1d2733;font-weight:700;font-family:'DejaVu Sans', sans-serif;letter-spacing:-0.067px;left:2186.50px;">Queen's Birthday</div>
<div class="t" style="top:991.38px;line-height:31px;font-size:25px;color:#2a3440;font-family:'DejaVu Sans', sans-serif;left:2619.50px;transform:scaleX(1.0305);transform-origin:0 50%;-webkit-text-stroke:0.35px;">Thursday, 12 June 2025</div>
<div style="left:2180.00px;top:1024.68px;width:431.30px;height:36.41px;background:#ededed;"></div>
<div style="left:2613.60px;top:1024.68px;width:400.00px;height:36.41px;background:#ededed;"></div>
<div class="t" style="top:1030.59px;line-height:31px;font-size:25px;color:#1d2733;font-weight:700;font-family:'DejaVu Sans', sans-serif;left:2186.50px;transform:scaleX(0.9727);transform-origin:0 50%;">Labour Day</div>
<div class="t" style="top:1030.59px;line-height:31px;font-size:25px;color:#2a3440;font-family:'DejaVu Sans', sans-serif;left:2619.50px;transform:scaleX(1.0378);transform-origin:0 50%;-webkit-text-stroke:0.35px;">Thursday, 2 October 2025</div>
<div style="left:2180.00px;top:1063.89px;width:431.30px;height:36.41px;background:#d9d9d9;"></div>
<div style="left:2613.60px;top:1063.89px;width:400.00px;height:36.41px;background:#d9d9d9;"></div>
<div class="t" style="top:1069.80px;line-height:31px;font-size:25px;color:#1d2733;font-weight:700;font-family:'DejaVu Sans', sans-serif;letter-spacing:0.081px;left:2186.50px;">Christmas Day</div>
<div class="t" style="top:1069.80px;line-height:31px;font-size:25px;color:#2a3440;font-family:'DejaVu Sans', sans-serif;left:2619.50px;transform:scaleX(1.0319);transform-origin:0 50%;-webkit-text-stroke:0.35px;">Thursday, 25 December 2025</div>
<div style="left:2180.00px;top:1103.10px;width:431.30px;height:36.41px;background:#ededed;"></div>
<div style="left:2613.60px;top:1103.10px;width:400.00px;height:36.41px;background:#ededed;"></div>
<div class="t" style="top:1109.01px;line-height:31px;font-size:25px;color:#1d2733;font-weight:700;font-family:'DejaVu Sans', sans-serif;left:2186.50px;transform:scaleX(0.9654);transform-origin:0 50%;">Boxing Day</div>
<div class="t" style="top:1109.01px;line-height:31px;font-size:25px;color:#2a3440;font-family:'DejaVu Sans', sans-serif;left:2619.50px;transform:scaleX(1.0492);transform-origin:0 50%;-webkit-text-stroke:0.35px;">Friday, 26 December 2025</div>
<div style="left:2180.00px;top:1142.31px;width:431.30px;height:36.41px;background:#d9d9d9;"></div>
<div style="left:2613.60px;top:1142.31px;width:400.00px;height:36.41px;background:#d9d9d9;"></div>
<div class="t" style="top:1148.21px;line-height:31px;font-size:25px;color:#1d2733;font-weight:700;font-family:'DejaVu Sans', sans-serif;left:2186.50px;transform:scaleX(0.9619);transform-origin:0 50%;">Additional day 1</div>
<div class="t" style="top:1148.21px;line-height:31px;font-size:25px;color:#2a3440;font-family:'DejaVu Sans', sans-serif;left:2619.50px;transform:scaleX(1.0520);transform-origin:0 50%;-webkit-text-stroke:0.35px;">Tuesday, 11 March 2025</div>
<div style="left:2180.00px;top:1181.52px;width:431.30px;height:36.41px;background:#ededed;"></div>
<div style="left:2613.60px;top:1181.52px;width:400.00px;height:36.41px;background:#ededed;"></div>
<div class="t" style="top:1187.42px;line-height:31px;font-size:25px;color:#1d2733;font-weight:700;font-family:'DejaVu Sans', sans-serif;left:2186.50px;transform:scaleX(0.9706);transform-origin:0 50%;">Additional day 2</div>
<div style="left:2180.00px;top:1220.73px;width:431.30px;height:36.41px;background:#d9d9d9;"></div>
<div style="left:2613.60px;top:1220.73px;width:400.00px;height:36.41px;background:#d9d9d9;"></div>
<div class="t" style="top:1226.63px;line-height:31px;font-size:25px;color:#1d2733;font-weight:700;font-family:'DejaVu Sans', sans-serif;left:2186.50px;transform:scaleX(0.9706);transform-origin:0 50%;">Additional day 3</div>
<div style="left:2180.00px;top:1259.94px;width:431.30px;height:36.41px;background:#ededed;"></div>
<div style="left:2613.60px;top:1259.94px;width:400.00px;height:36.41px;background:#ededed;"></div>
<div class="t" style="top:1265.84px;line-height:31px;font-size:25px;color:#1d2733;font-weight:700;font-family:'DejaVu Sans', sans-serif;left:2186.50px;transform:scaleX(0.9706);transform-origin:0 50%;">Additional day 4</div>
<div style="left:2180.00px;top:1299.15px;width:431.30px;height:36.41px;background:#d9d9d9;"></div>
<div style="left:2613.60px;top:1299.15px;width:400.00px;height:36.41px;background:#d9d9d9;"></div>
<div class="t" style="top:1305.05px;line-height:31px;font-size:25px;color:#1d2733;font-weight:700;font-family:'DejaVu Sans', sans-serif;left:2186.50px;transform:scaleX(0.9706);transform-origin:0 50%;">Additional day 5</div>
<div style="left:2180.00px;top:1338.36px;width:431.30px;height:36.41px;background:#ededed;"></div>
<div style="left:2613.60px;top:1338.36px;width:400.00px;height:36.41px;background:#ededed;"></div>
<div class="t" style="top:1344.26px;line-height:31px;font-size:25px;color:#1d2733;font-weight:700;font-family:'DejaVu Sans', sans-serif;left:2186.50px;transform:scaleX(0.9706);transform-origin:0 50%;">Additional day 6</div>
<div style="left:2180.00px;top:1377.57px;width:431.30px;height:36.41px;background:#d9d9d9;"></div>
<div style="left:2613.60px;top:1377.57px;width:400.00px;height:36.41px;background:#d9d9d9;"></div>
<div class="t" style="top:1383.47px;line-height:31px;font-size:25px;color:#1d2733;font-weight:700;font-family:'DejaVu Sans', sans-serif;left:2186.50px;transform:scaleX(0.9706);transform-origin:0 50%;">Additional day 7</div>
<div style="left:2180.00px;top:1416.78px;width:431.30px;height:36.41px;background:#ededed;"></div>
<div style="left:2613.60px;top:1416.78px;width:400.00px;height:36.41px;background:#ededed;"></div>
<div class="t" style="top:1422.68px;line-height:31px;font-size:25px;color:#1d2733;font-weight:700;font-family:'DejaVu Sans', sans-serif;left:2186.50px;transform:scaleX(0.9706);transform-origin:0 50%;">Additional day 8</div>
<div style="left:2180.00px;top:1455.99px;width:431.30px;height:36.41px;background:#d9d9d9;"></div>
<div style="left:2613.60px;top:1455.99px;width:400.00px;height:36.41px;background:#d9d9d9;"></div>
<div class="t" style="top:1461.89px;line-height:31px;font-size:25px;color:#1d2733;font-weight:700;font-family:'DejaVu Sans', sans-serif;left:2186.50px;transform:scaleX(0.9706);transform-origin:0 50%;">Additional day 9</div>
<div style="left:2180.00px;top:1495.20px;width:431.30px;height:36.41px;background:#ededed;"></div>
<div style="left:2613.60px;top:1495.20px;width:400.00px;height:36.41px;background:#ededed;"></div>
<div class="t" style="top:1501.11px;line-height:31px;font-size:25px;color:#1d2733;font-weight:700;font-family:'DejaVu Sans', sans-serif;left:2186.50px;transform:scaleX(0.9671);transform-origin:0 50%;">Additional day 10</div>
<div style="left:0.00px;top:1604.00px;width:3000.00px;height:48.00px;background:#e6e6e6;"></div>
<div style="left:0.00px;top:1603.50px;width:3000.00px;height:1.50px;background:#b5b5b5;"></div>
<svg style="left:42.00px;top:1620.00px;" width="8" height="12" viewBox="0 0 8 12"><path d="M7 0v12L0 6z" fill="#c0c0c0"/></svg>
<svg style="left:90.00px;top:1620.00px;" width="8" height="12" viewBox="0 0 8 12"><path d="M0 0v12l7-6z" fill="#c0c0c0"/></svg>
<div style="left:164.00px;top:1604.50px;width:202.60px;height:40.50px;background:linear-gradient(180deg,#ffffff 0%,#fffff0 35%,#ffff9a 100%);border-bottom:3.5px solid #217346;"></div>
<div style="left:163.50px;top:1604.00px;width:1.30px;height:40.00px;background:#b5b5b5;"></div>
<div style="left:366.00px;top:1604.00px;width:1.30px;height:40.00px;background:#b5b5b5;"></div>
<div class="t" style="top:1613.00px;line-height:26px;font-size:20.5px;color:#217346;font-weight:700;letter-spacing:0.349px;left:184.00px;">Roster Template</div>
<svg style="left:420.00px;top:1613.50px;" width="28" height="28" viewBox="0 0 28 28"><circle cx="14" cy="14" r="12.3" fill="none" stroke="#777" stroke-width="1.6"/><path d="M14 7.5v13M7.5 14h13" stroke="#777" stroke-width="2"/></svg>
<div style="left:1883.00px;top:1619.00px;width:2.40px;height:2.40px;background:#a0a0a0;"></div>
<div style="left:1883.00px;top:1627.00px;width:2.40px;height:2.40px;background:#a0a0a0;"></div>
<div style="left:1883.00px;top:1635.00px;width:2.40px;height:2.40px;background:#a0a0a0;"></div>
<div style="left:1910.60px;top:1616.00px;width:25.00px;height:24.00px;background:#fff;border:1.5px solid #ababab;"></div>
<svg style="left:1918.00px;top:1622.00px;" width="9" height="12" viewBox="0 0 9 12"><path d="M8 0v12L0 6z" fill="#333"/></svg>
<div style="left:1936.00px;top:1616.00px;width:1100.00px;height:24.00px;background:#f0f0f0;"></div>
<div style="left:2379.50px;top:1616.00px;width:700.00px;height:24.00px;background:#fff;border:1.5px solid #ababab;"></div>
<div style="left:0.00px;top:1652.00px;width:3000.00px;height:35.00px;background:#f3f3f3;"></div>
<div style="left:0.00px;top:1651.30px;width:3000.00px;height:1.20px;background:#c9c9c9;"></div>
<div class="t" style="top:1658.50px;line-height:23px;font-size:18.5px;color:#444;left:17.70px;transform:scaleX(0.9535);transform-origin:0 50%;">Ready</div>
<svg style="left:101.00px;top:1659.00px;" width="22" height="20" viewBox="0 0 22 20"><circle cx="5" cy="4.5" r="4" fill="#555"/><rect x="3" y="7" width="18" height="12" fill="none" stroke="#666" stroke-width="1.5"/><path d="M3 11h18M8 11v8M12.5 11v8M17 11v8" stroke="#666" stroke-width="1.2"/><rect x="11" y="1" width="10" height="4.5" fill="#666"/></svg>
<svg style="left:151.00px;top:1657.00px;" width="28" height="26" viewBox="0 0 28 26"><circle cx="10" cy="12" r="8.5" fill="none" stroke="#555" stroke-width="1.8" stroke-dasharray="38 10"/><circle cx="17" cy="8" r="2" fill="#333"/><path d="M10 12l7 0 8-3M17 12v5l-5 7M17 17l6 7" stroke="#333" stroke-width="2" fill="none"/></svg>
<div class="t" style="top:1657.50px;line-height:22px;font-size:18px;color:#333;font-weight:700;left:183.00px;transform:scaleX(0.9531);transform-origin:0 50%;">Accessibility: Investigate</div>
<div style="left:2648.00px;top:1652.50px;width:65.60px;height:34.50px;background:#c6c6c6;"></div>
<svg style="left:2669.00px;top:1657.00px;" width="22" height="20" viewBox="0 0 22 20"><rect x="1" y="1" width="20" height="18" fill="none" stroke="#555" stroke-width="1.5"/><path d="M1 7h20M1 13h20M7.7 1v18M14.3 1v18" stroke="#555" stroke-width="1.3"/></svg>
<svg style="left:2735.00px;top:1657.00px;" width="22" height="20" viewBox="0 0 22 20"><rect x="1" y="1" width="20" height="18" fill="none" stroke="#666" stroke-width="1.5"/><rect x="5.5" y="5" width="11" height="12" fill="none" stroke="#666" stroke-width="1.3"/><path d="M8 9h6M8 12.5h6" stroke="#666" stroke-width="1.2"/></svg>
<svg style="left:2800.00px;top:1657.00px;" width="22" height="20" viewBox="0 0 22 20"><rect x="1" y="1" width="20" height="18" fill="none" stroke="#666" stroke-width="1.5"/><path d="M6 1v9h9V1M1 10h20" stroke="#666" stroke-width="1.5" fill="none"/></svg>
<div style="left:2853.00px;top:1668.50px;width:13.00px;height:2.00px;background:#555;"></div>
<div style="left:2876.00px;top:1669.00px;width:130.00px;height:1.60px;background:#777;"></div>
<div style="left:2958.50px;top:1661.00px;width:7.00px;height:17.00px;background:#444;border-radius:1px;"></div>
<div style="left:341.00px;top:613.30px;width:1030.30px;height:318.70px;background:#f46c41;border-radius:47px;"></div>
<svg style="left:1369.00px;top:685.00px;" width="80" height="90" viewBox="0 0 80 90"><path d="M0 2L76.5 44 0 86.5z" fill="#f46c41"/><path d="M2.2 2v85" stroke="#f8926f" stroke-width="1"/></svg>
<div class="t" style="top:631.58px;line-height:42px;font-size:33.3px;color:#fff;font-weight:700;font-family:'DejaVu Sans', sans-serif;left:375.00px;transform:scaleX(0.9288);transform-origin:0 50%;">Customizable Shift Codes (with Auto Hour Calculation)</div>
<div class="t" style="top:671.08px;line-height:42px;font-size:33.3px;color:#fff;font-weight:700;font-family:'DejaVu Sans', sans-serif;left:375.00px;transform:scaleX(0.9122);transform-origin:0 50%;">Plan rotating shifts such as Morning (A), Afternoon (P),</div>
<div class="t" style="top:711.18px;line-height:42px;font-size:33.3px;color:#fff;font-weight:700;font-family:'DejaVu Sans', sans-serif;left:375.00px;transform:scaleX(0.9030);transform-origin:0 50%;">and Night (N).</div>
<div class="t" style="top:752.08px;line-height:42px;font-size:33.3px;color:#fff;font-weight:700;font-family:'DejaVu Sans', sans-serif;left:386.00px;transform:scaleX(0.9118);transform-origin:0 50%;">Examples:</div>
<div class="t" style="top:792.58px;line-height:42px;font-size:33.3px;color:#fff;font-weight:700;font-family:'DejaVu Sans', sans-serif;left:405.00px;transform:scaleX(0.8940);transform-origin:0 50%;">A = Morning Shift (8 hrs)</div>
<div class="t" style="top:833.28px;line-height:42px;font-size:33.3px;color:#fff;font-weight:700;font-family:'DejaVu Sans', sans-serif;left:405.00px;transform:scaleX(0.8719);transform-origin:0 50%;">N = Night Shift (10 hrs)</div>
<div class="t" style="top:874.08px;line-height:42px;font-size:33.3px;color:#fff;font-weight:700;font-family:'DejaVu Sans', sans-serif;left:428.50px;transform:scaleX(0.9069);transform-origin:0 50%;">Fully editable codes (e.g., D for Day, E for Evening).</div>
<svg style="left:383.00px;top:877.30px;" width="36" height="36" viewBox="0 0 36 36"><path d="M3 22l9 10L33 4" fill="none" stroke="#3a3a3a" stroke-width="6.5" stroke-linejoin="miter"/></svg>
<div style="left:385.20px;top:811.20px;width:8.20px;height:8.20px;background:#fff;border-radius:50%;"></div>
<div style="left:385.20px;top:852.00px;width:8.20px;height:8.20px;background:#fff;border-radius:50%;"></div>
</body></html>
